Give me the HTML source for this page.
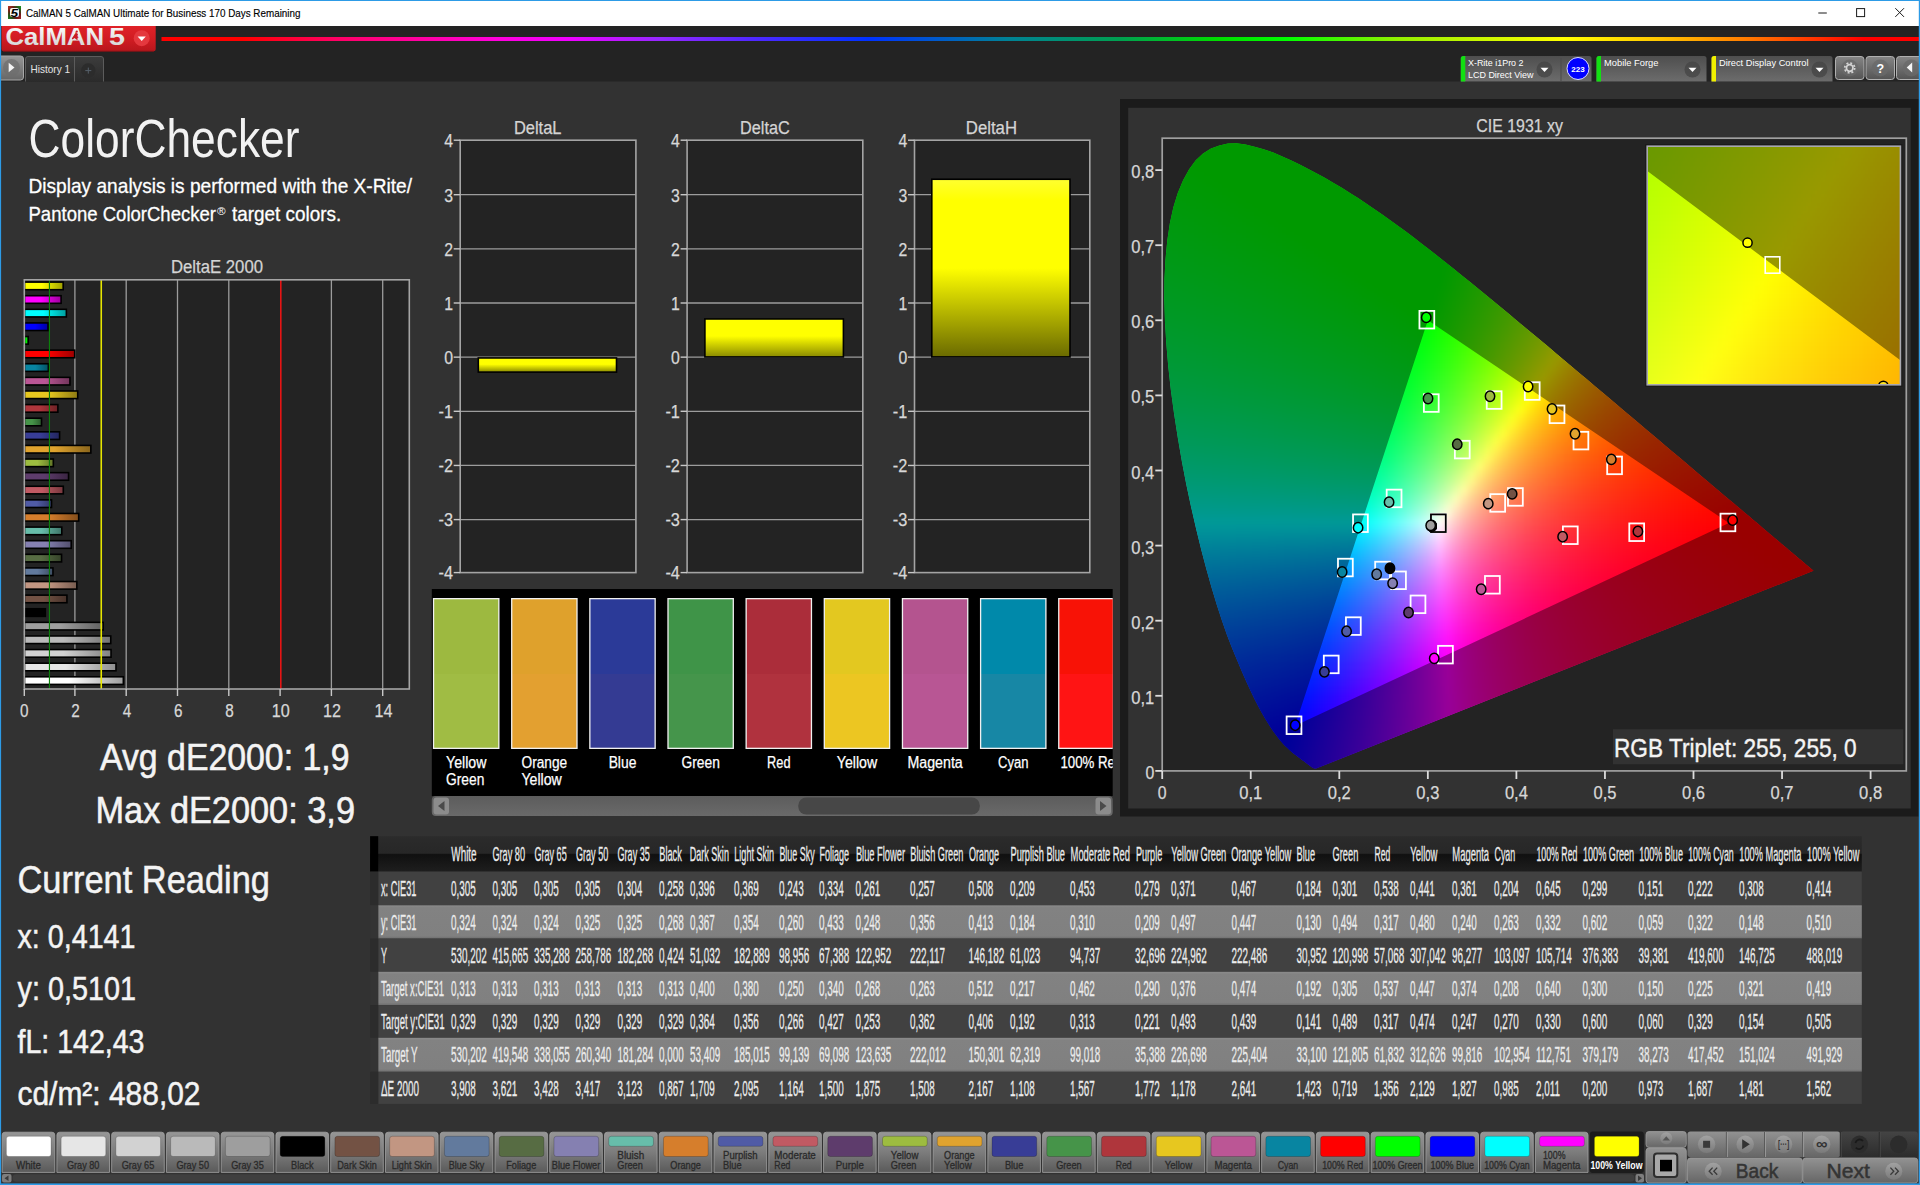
<!DOCTYPE html>
<html lang="en"><head><meta charset="utf-8"><title>CalMAN 5 CalMAN Ultimate for Business</title>
<style>
html,body{margin:0;padding:0;background:#323232}
body{width:1920px;height:1185px;overflow:hidden}
svg{display:block;font-family:"Liberation Sans",sans-serif}
text{white-space:pre}
.cc rect{width:8px;height:8px}
.ci rect{width:12px;height:12px}
</style></head><body>
<svg width="1920" height="1185" viewBox="0 0 1920 1185">
<g id="sec_header">
<defs>
<linearGradient id="rb" x1="0" x2="1" y1="0" y2="0">
<stop offset="0" stop-color="#ff0000"/><stop offset="0.046" stop-color="#ff0000"/><stop offset="0.099" stop-color="#ff0064"/><stop offset="0.191" stop-color="#ff00dc"/><stop offset="0.231" stop-color="#f000ff"/><stop offset="0.283" stop-color="#9628ff"/><stop offset="0.336" stop-color="#5028ff"/><stop offset="0.402" stop-color="#0032ff"/><stop offset="0.481" stop-color="#008296"/><stop offset="0.545" stop-color="#00a050"/><stop offset="0.6" stop-color="#00dc00"/><stop offset="0.64" stop-color="#00ff00"/><stop offset="0.705" stop-color="#96f000"/><stop offset="0.797" stop-color="#ffff00"/><stop offset="0.85" stop-color="#ffc800"/><stop offset="0.903" stop-color="#ff7800"/><stop offset="0.968" stop-color="#ff0000"/><stop offset="1" stop-color="#ff0000"/>
</linearGradient>
<linearGradient id="logo" x1="0" x2="0" y1="0" y2="1"><stop offset="0" stop-color="#e02228"/><stop offset="0.55" stop-color="#cf1c22"/><stop offset="1" stop-color="#b8161c"/></linearGradient>
<linearGradient id="logot" x1="0" x2="0" y1="0" y2="1"><stop offset="0" stop-color="#ffffff"/><stop offset="1" stop-color="#d0d0d0"/></linearGradient>
<linearGradient id="btn" x1="0" x2="0" y1="0" y2="1"><stop offset="0" stop-color="#858585"/><stop offset="1" stop-color="#545454"/></linearGradient>
<linearGradient id="btn2" x1="0" x2="0" y1="0" y2="1"><stop offset="0" stop-color="#969696"/><stop offset="1" stop-color="#666666"/></linearGradient>
<linearGradient id="tab" x1="0" x2="0" y1="0" y2="1"><stop offset="0" stop-color="#3c3c3c"/><stop offset="1" stop-color="#2b2b2b"/></linearGradient>
<linearGradient id="pnl" x1="0" x2="0" y1="0" y2="1"><stop offset="0" stop-color="#4e4e4e"/><stop offset="1" stop-color="#6c6c6c"/></linearGradient>
<radialGradient id="ddc"><stop offset="0" stop-color="#5a5a5a"/><stop offset="1" stop-color="#4a4a4a"/></radialGradient>
</defs>
<rect x="0" y="0" width="1920" height="1185" fill="#323232"/>
<rect x="0" y="26" width="1920" height="55.5" fill="#232323"/>
<rect x="0" y="0" width="1920" height="26" fill="#ffffff"/>
<defs><linearGradient id="icg" x1="0" x2="1" y1="0" y2="1"><stop offset="0" stop-color="#c03020"/><stop offset="0.5" stop-color="#101010"/><stop offset="1" stop-color="#b02020"/></linearGradient><linearGradient id="icg2" x1="1" x2="0" y1="0" y2="1"><stop offset="0" stop-color="#20a020"/><stop offset="0.35" stop-color="#20a020" stop-opacity="0"/><stop offset="0.65" stop-color="#20a020" stop-opacity="0"/><stop offset="1" stop-color="#208020"/></linearGradient></defs>
<rect x="8" y="6" width="13" height="13" fill="url(#icg)"/><rect x="8" y="6" width="13" height="13" fill="url(#icg2)"/>
<rect x="10" y="8" width="9" height="9" fill="#f4f4f4" rx="2"/>
<text x="10.6" y="17.2" font-size="11.5" fill="#000" font-weight="bold" textLength="7.6" lengthAdjust="spacingAndGlyphs" font-style="italic">5</text>
<text x="26" y="16.8" font-size="11.3" fill="#000" textLength="274.5" lengthAdjust="spacingAndGlyphs" stroke="#000" stroke-width="0.15">CalMAN 5 CalMAN Ultimate for Business 170 Days Remaining</text>
<line x1="1818.3" y1="13" x2="1826.8" y2="13" stroke="#1a1a1a" stroke-width="1"/>
<rect x="1856.6" y="8.6" width="8" height="8" fill="none" stroke="#1a1a1a" stroke-width="1"/>
<path d="M1895.3 8.2 L1904 16.9 M1904 8.2 L1895.3 16.9" stroke="#1a1a1a" stroke-width="1" fill="none"/>
<path d="M1.5 26 H155.7 V48.8 Q155.7 51.3 153.2 51.3 H4 Q1.5 51.3 1.5 48.8 Z" fill="url(#logo)"/>
<line x1="3" y1="51.3" x2="154" y2="51.3" stroke="#7a1418" stroke-width="1"/>
<text x="5.4" y="45" font-size="23.4" fill="url(#logot)" font-weight="bold" textLength="98.6" lengthAdjust="spacingAndGlyphs">CalMAN</text>
<text x="109" y="45" font-size="24.5" fill="url(#logot)" font-weight="bold" textLength="16" lengthAdjust="spacingAndGlyphs">5</text>
<path d="M74.5 34.5 l2.5 -1.5 l1 1.5 l-2 2.5 l2 2 l-1 1 l-2.5 -2 l-2 1.5 l-.7 -1 z" fill="#c81c22"/><circle cx="76.8" cy="31.6" r="1.1" fill="#c81c22"/>
<circle cx="141.7" cy="38.2" r="8" fill="#e4383e"/>
<path d="M137.6 36.5 h8.2 l-4.1 4.6 z" fill="#fff"/>
<rect x="161.5" y="37" width="1758.5" height="4" fill="url(#rb)"/>
<rect x="-3" y="56" width="26.5" height="24" rx="3" fill="url(#btn2)" stroke="#a8a8a8" stroke-width="1"/>
<circle cx="11.5" cy="67.5" r="8.5" fill="#6e6e6e" opacity=".7"/>
<path d="M8.7 62.7 v9.6 l5.8 -4.8 z" fill="#f4f4f4"/>
<path d="M25.5 81.5 V59 Q25.5 56.5 28 56.5 H101 Q103.5 56.5 103.5 59 V81.5" fill="url(#tab)" stroke="#5c5c5c" stroke-width="1"/>
<line x1="74.5" y1="57" x2="74.5" y2="81.5" stroke="#5c5c5c" stroke-width="1"/>
<text x="30.5" y="72.6" font-size="10.2" fill="#e4e4e4" textLength="39.5" lengthAdjust="spacingAndGlyphs">History 1</text>
<circle cx="88.3" cy="70.5" r="7.2" fill="#2c2c2c"/>
<path d="M85.3 70.6 h6 M88.3 67.6 v6" stroke="#56606a" stroke-width="1" fill="none"/>
<path d="M1460.8 81.5 V58.5 Q1460.8 56 1463.3 56 H1589 Q1591.5 56 1591.5 58.5 V81.5 Z" fill="url(#pnl)"/><path d="M1460.8 81.5 V58.5 Q1460.8 56 1463.3 56 H1465.3 V81.5 Z" fill="#12e012"/>
<text x="1468" y="66.3" font-size="9.8" fill="#fff" textLength="55.5" lengthAdjust="spacingAndGlyphs">X-Rite i1Pro 2</text>
<text x="1468" y="78" font-size="9.8" fill="#fff" textLength="65.5" lengthAdjust="spacingAndGlyphs">LCD Direct View</text>
<circle cx="1544.5" cy="69.5" r="8" fill="#444" fill-opacity=".75"/><path d="M1540.5 67.7 h8 l-4 4.4 z" fill="#fff"/>
<line x1="1561" y1="58" x2="1561" y2="81" stroke="#4a4a4a" stroke-width="1"/>
<circle cx="1578" cy="68.5" r="11" fill="#0000ff" stroke="#dcdcff" stroke-width="1"/>
<text x="1578" y="71.5" font-size="8" fill="#fff" text-anchor="middle" font-weight="bold" textLength="13.5" lengthAdjust="spacingAndGlyphs">223</text>
<path d="M1596.5 81.5 V58.5 Q1596.5 56 1599 56 H1704 Q1706.5 56 1706.5 58.5 V81.5 Z" fill="url(#pnl)"/><path d="M1596.5 81.5 V58.5 Q1596.5 56 1599 56 H1601 V81.5 Z" fill="#12e012"/>
<text x="1604" y="66.3" font-size="9.8" fill="#fff" textLength="54.5" lengthAdjust="spacingAndGlyphs">Mobile Forge</text>
<circle cx="1692.5" cy="69.5" r="8" fill="#444" fill-opacity=".75"/><path d="M1688.5 67.7 h8 l-4 4.4 z" fill="#fff"/>
<path d="M1711.5 81.5 V58.5 Q1711.5 56 1714 56 H1830 Q1832.5 56 1832.5 58.5 V81.5 Z" fill="url(#pnl)"/><path d="M1711.5 81.5 V58.5 Q1711.5 56 1714 56 H1716 V81.5 Z" fill="#f0f000"/>
<text x="1719" y="66.3" font-size="9.8" fill="#fff" textLength="89.5" lengthAdjust="spacingAndGlyphs">Direct Display Control</text>
<circle cx="1819.5" cy="69.5" r="8" fill="#444" fill-opacity=".75"/><path d="M1815.5 67.7 h8 l-4 4.4 z" fill="#fff"/>
<rect x="1835.5" y="56.5" width="28.5" height="23" rx="3" fill="url(#btn)" stroke="#b0b0b0" stroke-width="1"/><circle cx="1849.75" cy="68" r="8.5" fill="#6a6a6a" opacity=".75"/>
<circle cx="1849.7" cy="68" r="3.3" fill="none" stroke="#d4d4d4" stroke-width="1.7"/><circle cx="1849.7" cy="68" r="5" fill="none" stroke="#d4d4d4" stroke-width="1.7" stroke-dasharray="1.96 1.96"/>
<rect x="1866" y="56.5" width="28.5" height="23" rx="3" fill="url(#btn)" stroke="#b0b0b0" stroke-width="1"/><circle cx="1880.25" cy="68" r="8.5" fill="#6a6a6a" opacity=".75"/>
<text x="1880.2" y="72.6" font-size="12.5" fill="#fff" text-anchor="middle" font-weight="bold">?</text>
<rect x="1896.5" y="56.5" width="29.5" height="23" rx="3" fill="url(#btn)" stroke="#b0b0b0" stroke-width="1"/><circle cx="1911.25" cy="68" r="8.5" fill="#6a6a6a" opacity=".75"/>
<path d="M1912.2 62.5 v10 l-5.5 -5 z" fill="#f4f4f4"/>
</g>
<g id="sec_left">
<text x="28.5" y="157" font-size="53" fill="#f2f2f2" textLength="271" lengthAdjust="spacingAndGlyphs">ColorChecker</text>
<text x="28.5" y="193" font-size="21" fill="#fff" textLength="383.5" lengthAdjust="spacingAndGlyphs" stroke="#fff" stroke-width="0.3">Display analysis is performed with the X-Rite/</text>
<text x="28.5" y="221" font-size="21" fill="#fff" textLength="187.5" lengthAdjust="spacingAndGlyphs" stroke="#fff" stroke-width="0.3">Pantone ColorChecker</text>
<text x="217" y="215" font-size="11.5" fill="#fff" textLength="8.6" lengthAdjust="spacingAndGlyphs">®</text>
<text x="232" y="221" font-size="21" fill="#fff" textLength="109.3" lengthAdjust="spacingAndGlyphs" stroke="#fff" stroke-width="0.3">target colors.</text>
<text x="171" y="273" font-size="18" fill="#d4d4d4" textLength="92" lengthAdjust="spacingAndGlyphs" stroke="#d4d4d4" stroke-width="0.25">DeltaE 2000</text>
<rect x="24.3" y="279.8" width="385" height="409.2" fill="#232323"/>
<line x1="74.9" y1="279.8" x2="74.9" y2="689" stroke="#9c9c9c" stroke-width="1.3"/>
<line x1="126.2" y1="279.8" x2="126.2" y2="689" stroke="#9c9c9c" stroke-width="1.3"/>
<line x1="177.5" y1="279.8" x2="177.5" y2="689" stroke="#9c9c9c" stroke-width="1.3"/>
<line x1="228.8" y1="279.8" x2="228.8" y2="689" stroke="#9c9c9c" stroke-width="1.3"/>
<line x1="331.4" y1="279.8" x2="331.4" y2="689" stroke="#9c9c9c" stroke-width="1.3"/>
<line x1="382.7" y1="279.8" x2="382.7" y2="689" stroke="#9c9c9c" stroke-width="1.3"/>
<defs><linearGradient id="b0"><stop offset="0" stop-color="#ffffff"/><stop offset="0.45" stop-color="#ffffff"/><stop offset="1" stop-color="#9e9e9e"/></linearGradient><linearGradient id="b1"><stop offset="0" stop-color="#e6e6e6"/><stop offset="0.45" stop-color="#e6e6e6"/><stop offset="1" stop-color="#8e8e8e"/></linearGradient><linearGradient id="b2"><stop offset="0" stop-color="#d2d2d2"/><stop offset="0.45" stop-color="#d2d2d2"/><stop offset="1" stop-color="#828282"/></linearGradient><linearGradient id="b3"><stop offset="0" stop-color="#bababa"/><stop offset="0.45" stop-color="#bababa"/><stop offset="1" stop-color="#737373"/></linearGradient><linearGradient id="b4"><stop offset="0" stop-color="#9e9e9e"/><stop offset="0.45" stop-color="#9e9e9e"/><stop offset="1" stop-color="#616161"/></linearGradient><linearGradient id="b5"><stop offset="0" stop-color="#000000"/><stop offset="0.45" stop-color="#000000"/><stop offset="1" stop-color="#000000"/></linearGradient><linearGradient id="b6"><stop offset="0" stop-color="#735244"/><stop offset="0.45" stop-color="#735244"/><stop offset="1" stop-color="#47322a"/></linearGradient><linearGradient id="b7"><stop offset="0" stop-color="#c29682"/><stop offset="0.45" stop-color="#c29682"/><stop offset="1" stop-color="#785d50"/></linearGradient><linearGradient id="b8"><stop offset="0" stop-color="#627a9d"/><stop offset="0.45" stop-color="#627a9d"/><stop offset="1" stop-color="#3c4b61"/></linearGradient><linearGradient id="b9"><stop offset="0" stop-color="#576c43"/><stop offset="0.45" stop-color="#576c43"/><stop offset="1" stop-color="#354229"/></linearGradient><linearGradient id="b10"><stop offset="0" stop-color="#8580b1"/><stop offset="0.45" stop-color="#8580b1"/><stop offset="1" stop-color="#524f6d"/></linearGradient><linearGradient id="b11"><stop offset="0" stop-color="#67bdaa"/><stop offset="0.45" stop-color="#67bdaa"/><stop offset="1" stop-color="#3f7569"/></linearGradient><linearGradient id="b12"><stop offset="0" stop-color="#d67e2c"/><stop offset="0.45" stop-color="#d67e2c"/><stop offset="1" stop-color="#844e1b"/></linearGradient><linearGradient id="b13"><stop offset="0" stop-color="#505ba6"/><stop offset="0.45" stop-color="#505ba6"/><stop offset="1" stop-color="#313866"/></linearGradient><linearGradient id="b14"><stop offset="0" stop-color="#c15a63"/><stop offset="0.45" stop-color="#c15a63"/><stop offset="1" stop-color="#77373d"/></linearGradient><linearGradient id="b15"><stop offset="0" stop-color="#5e3c6c"/><stop offset="0.45" stop-color="#5e3c6c"/><stop offset="1" stop-color="#3a2542"/></linearGradient><linearGradient id="b16"><stop offset="0" stop-color="#9dbc40"/><stop offset="0.45" stop-color="#9dbc40"/><stop offset="1" stop-color="#617427"/></linearGradient><linearGradient id="b17"><stop offset="0" stop-color="#e0a32e"/><stop offset="0.45" stop-color="#e0a32e"/><stop offset="1" stop-color="#8a651c"/></linearGradient><linearGradient id="b18"><stop offset="0" stop-color="#383d96"/><stop offset="0.45" stop-color="#383d96"/><stop offset="1" stop-color="#22255d"/></linearGradient><linearGradient id="b19"><stop offset="0" stop-color="#469449"/><stop offset="0.45" stop-color="#469449"/><stop offset="1" stop-color="#2b5b2d"/></linearGradient><linearGradient id="b20"><stop offset="0" stop-color="#af363c"/><stop offset="0.45" stop-color="#af363c"/><stop offset="1" stop-color="#6c2125"/></linearGradient><linearGradient id="b21"><stop offset="0" stop-color="#e7c71f"/><stop offset="0.45" stop-color="#e7c71f"/><stop offset="1" stop-color="#8f7b13"/></linearGradient><linearGradient id="b22"><stop offset="0" stop-color="#bb5695"/><stop offset="0.45" stop-color="#bb5695"/><stop offset="1" stop-color="#73355c"/></linearGradient><linearGradient id="b23"><stop offset="0" stop-color="#0885a1"/><stop offset="0.45" stop-color="#0885a1"/><stop offset="1" stop-color="#045263"/></linearGradient><linearGradient id="b24"><stop offset="0" stop-color="#ff0000"/><stop offset="0.45" stop-color="#ff0000"/><stop offset="1" stop-color="#9e0000"/></linearGradient><linearGradient id="b25"><stop offset="0" stop-color="#00ff00"/><stop offset="0.45" stop-color="#00ff00"/><stop offset="1" stop-color="#009e00"/></linearGradient><linearGradient id="b26"><stop offset="0" stop-color="#0000ff"/><stop offset="0.45" stop-color="#0000ff"/><stop offset="1" stop-color="#00009e"/></linearGradient><linearGradient id="b27"><stop offset="0" stop-color="#00ffff"/><stop offset="0.45" stop-color="#00ffff"/><stop offset="1" stop-color="#009e9e"/></linearGradient><linearGradient id="b28"><stop offset="0" stop-color="#ff00ff"/><stop offset="0.45" stop-color="#ff00ff"/><stop offset="1" stop-color="#9e009e"/></linearGradient><linearGradient id="b29"><stop offset="0" stop-color="#ffff00"/><stop offset="0.45" stop-color="#ffff00"/><stop offset="1" stop-color="#9e9e00"/></linearGradient></defs>
<rect x="24.5" y="676.8" width="98.84" height="7.6" fill="url(#b0)" stroke="#000" stroke-width="1.6"/>
<rect x="24.5" y="663.19" width="91.48" height="7.6" fill="url(#b1)" stroke="#000" stroke-width="1.6"/>
<rect x="24.5" y="649.58" width="86.53" height="7.6" fill="url(#b2)" stroke="#000" stroke-width="1.6"/>
<rect x="24.5" y="635.97" width="86.25" height="7.6" fill="url(#b3)" stroke="#000" stroke-width="1.6"/>
<rect x="24.5" y="622.36" width="78.7" height="7.6" fill="url(#b4)" stroke="#000" stroke-width="1.6"/>
<rect x="24.5" y="608.75" width="20.84" height="7.6" fill="url(#b5)" stroke="#000" stroke-width="1.6"/>
<rect x="24.5" y="595.14" width="42.44" height="7.6" fill="url(#b6)" stroke="#000" stroke-width="1.6"/>
<rect x="24.5" y="581.53" width="52.34" height="7.6" fill="url(#b7)" stroke="#000" stroke-width="1.6"/>
<rect x="24.5" y="567.92" width="28.46" height="7.6" fill="url(#b8)" stroke="#000" stroke-width="1.6"/>
<rect x="24.5" y="554.31" width="37.07" height="7.6" fill="url(#b9)" stroke="#000" stroke-width="1.6"/>
<rect x="24.5" y="540.7" width="46.69" height="7.6" fill="url(#b10)" stroke="#000" stroke-width="1.6"/>
<rect x="24.5" y="527.09" width="37.28" height="7.6" fill="url(#b11)" stroke="#000" stroke-width="1.6"/>
<rect x="24.5" y="513.48" width="54.18" height="7.6" fill="url(#b12)" stroke="#000" stroke-width="1.6"/>
<rect x="24.5" y="499.87" width="27.02" height="7.6" fill="url(#b13)" stroke="#000" stroke-width="1.6"/>
<rect x="24.5" y="486.26" width="38.79" height="7.6" fill="url(#b14)" stroke="#000" stroke-width="1.6"/>
<rect x="24.5" y="472.64" width="44.05" height="7.6" fill="url(#b15)" stroke="#000" stroke-width="1.6"/>
<rect x="24.5" y="459.03" width="28.82" height="7.6" fill="url(#b16)" stroke="#000" stroke-width="1.6"/>
<rect x="24.5" y="445.42" width="66.34" height="7.6" fill="url(#b17)" stroke="#000" stroke-width="1.6"/>
<rect x="24.5" y="431.81" width="35.1" height="7.6" fill="url(#b18)" stroke="#000" stroke-width="1.6"/>
<rect x="24.5" y="418.2" width="17.04" height="7.6" fill="url(#b19)" stroke="#000" stroke-width="1.6"/>
<rect x="24.5" y="404.59" width="33.38" height="7.6" fill="url(#b20)" stroke="#000" stroke-width="1.6"/>
<rect x="24.5" y="390.98" width="53.21" height="7.6" fill="url(#b21)" stroke="#000" stroke-width="1.6"/>
<rect x="24.5" y="377.37" width="45.46" height="7.6" fill="url(#b22)" stroke="#000" stroke-width="1.6"/>
<rect x="24.5" y="363.76" width="23.87" height="7.6" fill="url(#b23)" stroke="#000" stroke-width="1.6"/>
<rect x="24.5" y="350.15" width="50.18" height="7.6" fill="url(#b24)" stroke="#000" stroke-width="1.6"/>
<rect x="24.5" y="336.54" width="3.73" height="7.6" fill="url(#b25)" stroke="#000" stroke-width="1.6"/>
<rect x="24.5" y="322.93" width="23.56" height="7.6" fill="url(#b26)" stroke="#000" stroke-width="1.6"/>
<rect x="24.5" y="309.32" width="41.87" height="7.6" fill="url(#b27)" stroke="#000" stroke-width="1.6"/>
<rect x="24.5" y="295.71" width="36.59" height="7.6" fill="url(#b28)" stroke="#000" stroke-width="1.6"/>
<rect x="24.5" y="282.1" width="38.67" height="7.6" fill="url(#b29)" stroke="#000" stroke-width="1.6"/>
<line x1="49.45" y1="279.8" x2="49.45" y2="689" stroke="#0b800b" stroke-width="1.15"/>
<line x1="101.25" y1="279.8" x2="101.25" y2="689" stroke="#e6e600" stroke-width="1.6"/>
<line x1="280.8" y1="279.8" x2="280.8" y2="689" stroke="#e61414" stroke-width="1.6"/>
<rect x="24.3" y="279.8" width="385" height="409.2" fill="none" stroke="#a4a4a4" stroke-width="1.6"/>
<line x1="24.3" y1="689" x2="24.3" y2="696" stroke="#c8c8c8" stroke-width="1.4"/>
<text x="24.3" y="717" font-size="18" fill="#d8d8d8" text-anchor="middle" textLength="8.5" lengthAdjust="spacingAndGlyphs" stroke="#d8d8d8" stroke-width="0.25">0</text>
<line x1="74.9" y1="689" x2="74.9" y2="696" stroke="#c8c8c8" stroke-width="1.4"/>
<text x="75.6" y="717" font-size="18" fill="#d8d8d8" text-anchor="middle" textLength="8.5" lengthAdjust="spacingAndGlyphs" stroke="#d8d8d8" stroke-width="0.25">2</text>
<line x1="126.2" y1="689" x2="126.2" y2="696" stroke="#c8c8c8" stroke-width="1.4"/>
<text x="126.9" y="717" font-size="18" fill="#d8d8d8" text-anchor="middle" textLength="8.5" lengthAdjust="spacingAndGlyphs" stroke="#d8d8d8" stroke-width="0.25">4</text>
<line x1="177.5" y1="689" x2="177.5" y2="696" stroke="#c8c8c8" stroke-width="1.4"/>
<text x="178.2" y="717" font-size="18" fill="#d8d8d8" text-anchor="middle" textLength="8.5" lengthAdjust="spacingAndGlyphs" stroke="#d8d8d8" stroke-width="0.25">6</text>
<line x1="228.8" y1="689" x2="228.8" y2="696" stroke="#c8c8c8" stroke-width="1.4"/>
<text x="229.5" y="717" font-size="18" fill="#d8d8d8" text-anchor="middle" textLength="8.5" lengthAdjust="spacingAndGlyphs" stroke="#d8d8d8" stroke-width="0.25">8</text>
<line x1="280.1" y1="689" x2="280.1" y2="696" stroke="#c8c8c8" stroke-width="1.4"/>
<text x="280.8" y="717" font-size="18" fill="#d8d8d8" text-anchor="middle" textLength="18" lengthAdjust="spacingAndGlyphs" stroke="#d8d8d8" stroke-width="0.25">10</text>
<line x1="331.4" y1="689" x2="331.4" y2="696" stroke="#c8c8c8" stroke-width="1.4"/>
<text x="332.1" y="717" font-size="18" fill="#d8d8d8" text-anchor="middle" textLength="18" lengthAdjust="spacingAndGlyphs" stroke="#d8d8d8" stroke-width="0.25">12</text>
<line x1="382.7" y1="689" x2="382.7" y2="696" stroke="#c8c8c8" stroke-width="1.4"/>
<text x="383.4" y="717" font-size="18" fill="#d8d8d8" text-anchor="middle" textLength="18" lengthAdjust="spacingAndGlyphs" stroke="#d8d8d8" stroke-width="0.25">14</text>
<text x="100" y="770.4" font-size="36.5" fill="#f4f4f4" textLength="249.5" lengthAdjust="spacingAndGlyphs" stroke="#f4f4f4" stroke-width="0.55">Avg dE2000: 1,9</text>
<text x="95.5" y="822.5" font-size="36.5" fill="#f4f4f4" textLength="259.5" lengthAdjust="spacingAndGlyphs" stroke="#f4f4f4" stroke-width="0.55">Max dE2000: 3,9</text>
<text x="17.5" y="893.3" font-size="39" fill="#f4f4f4" textLength="252.5" lengthAdjust="spacingAndGlyphs" stroke="#f4f4f4" stroke-width="0.5">Current Reading</text>
<text x="17.5" y="947.5" font-size="32.5" fill="#f4f4f4" textLength="118" lengthAdjust="spacingAndGlyphs" stroke="#f4f4f4" stroke-width="0.5">x: 0,4141</text>
<text x="17.5" y="1000" font-size="32.5" fill="#f4f4f4" textLength="118.5" lengthAdjust="spacingAndGlyphs" stroke="#f4f4f4" stroke-width="0.5">y: 0,5101</text>
<text x="17.5" y="1052.5" font-size="32.5" fill="#f4f4f4" textLength="127" lengthAdjust="spacingAndGlyphs" stroke="#f4f4f4" stroke-width="0.5">fL: 142,43</text>
<text x="17.5" y="1105" font-size="32.5" fill="#f4f4f4" textLength="183" lengthAdjust="spacingAndGlyphs" stroke="#f4f4f4" stroke-width="0.5">cd/m²: 488,02</text>
</g>
<g id="sec_delta">
<defs><linearGradient id="dy1" x1="0" x2="0" y1="0" y2="1"><stop offset="0" stop-color="#ffff30"/><stop offset="0.12" stop-color="#ffff00"/><stop offset="0.5" stop-color="#ffff00"/><stop offset="1" stop-color="#6a6a00"/></linearGradient><linearGradient id="dy2" x1="0" x2="0" y1="0" y2="1"><stop offset="0" stop-color="#ffff00"/><stop offset="0.45" stop-color="#ffff00"/><stop offset="1" stop-color="#8a8a00"/></linearGradient></defs>
<rect x="460.2" y="140.2" width="175.7" height="432.4" fill="#232323"/>
<line x1="460.2" y1="519.6" x2="635.9" y2="519.6" stroke="#9c9c9c" stroke-width="1.3"/>
<line x1="460.2" y1="465.45" x2="635.9" y2="465.45" stroke="#9c9c9c" stroke-width="1.3"/>
<line x1="460.2" y1="411.3" x2="635.9" y2="411.3" stroke="#9c9c9c" stroke-width="1.3"/>
<line x1="460.2" y1="357.15" x2="635.9" y2="357.15" stroke="#9c9c9c" stroke-width="1.3"/>
<line x1="460.2" y1="303" x2="635.9" y2="303" stroke="#9c9c9c" stroke-width="1.3"/>
<line x1="460.2" y1="248.85" x2="635.9" y2="248.85" stroke="#9c9c9c" stroke-width="1.3"/>
<line x1="460.2" y1="194.7" x2="635.9" y2="194.7" stroke="#9c9c9c" stroke-width="1.3"/>
<rect x="460.2" y="140.2" width="175.7" height="432.4" fill="none" stroke="#a4a4a4" stroke-width="1.6"/>
<line x1="453.7" y1="572.6" x2="460.2" y2="572.6" stroke="#c8c8c8" stroke-width="1.4"/>
<text x="453" y="579.4" font-size="18.3" fill="#d8d8d8" text-anchor="end" textLength="14.5" lengthAdjust="spacingAndGlyphs" stroke="#d8d8d8" stroke-width="0.25">-4</text>
<line x1="453.7" y1="519.6" x2="460.2" y2="519.6" stroke="#c8c8c8" stroke-width="1.4"/>
<text x="453" y="526.4" font-size="18.3" fill="#d8d8d8" text-anchor="end" textLength="14.5" lengthAdjust="spacingAndGlyphs" stroke="#d8d8d8" stroke-width="0.25">-3</text>
<line x1="453.7" y1="465.45" x2="460.2" y2="465.45" stroke="#c8c8c8" stroke-width="1.4"/>
<text x="453" y="472.25" font-size="18.3" fill="#d8d8d8" text-anchor="end" textLength="14.5" lengthAdjust="spacingAndGlyphs" stroke="#d8d8d8" stroke-width="0.25">-2</text>
<line x1="453.7" y1="411.3" x2="460.2" y2="411.3" stroke="#c8c8c8" stroke-width="1.4"/>
<text x="453" y="418.1" font-size="18.3" fill="#d8d8d8" text-anchor="end" textLength="14.5" lengthAdjust="spacingAndGlyphs" stroke="#d8d8d8" stroke-width="0.25">-1</text>
<line x1="453.7" y1="357.15" x2="460.2" y2="357.15" stroke="#c8c8c8" stroke-width="1.4"/>
<text x="453" y="363.95" font-size="18.3" fill="#d8d8d8" text-anchor="end" textLength="8.8" lengthAdjust="spacingAndGlyphs" stroke="#d8d8d8" stroke-width="0.25">0</text>
<line x1="453.7" y1="303" x2="460.2" y2="303" stroke="#c8c8c8" stroke-width="1.4"/>
<text x="453" y="309.8" font-size="18.3" fill="#d8d8d8" text-anchor="end" textLength="8.8" lengthAdjust="spacingAndGlyphs" stroke="#d8d8d8" stroke-width="0.25">1</text>
<line x1="453.7" y1="248.85" x2="460.2" y2="248.85" stroke="#c8c8c8" stroke-width="1.4"/>
<text x="453" y="255.65" font-size="18.3" fill="#d8d8d8" text-anchor="end" textLength="8.8" lengthAdjust="spacingAndGlyphs" stroke="#d8d8d8" stroke-width="0.25">2</text>
<line x1="453.7" y1="194.7" x2="460.2" y2="194.7" stroke="#c8c8c8" stroke-width="1.4"/>
<text x="453" y="201.5" font-size="18.3" fill="#d8d8d8" text-anchor="end" textLength="8.8" lengthAdjust="spacingAndGlyphs" stroke="#d8d8d8" stroke-width="0.25">3</text>
<line x1="453.7" y1="140.2" x2="460.2" y2="140.2" stroke="#c8c8c8" stroke-width="1.4"/>
<text x="453" y="147" font-size="18.3" fill="#d8d8d8" text-anchor="end" textLength="8.8" lengthAdjust="spacingAndGlyphs" stroke="#d8d8d8" stroke-width="0.25">4</text>
<text x="513.9" y="134.3" font-size="18" fill="#d4d4d4" textLength="47.6" lengthAdjust="spacingAndGlyphs" stroke="#d4d4d4" stroke-width="0.25">DeltaL</text>
<rect x="478.3" y="357.95" width="138.2" height="14.16" fill="url(#dy2)" stroke="#000" stroke-width="1.6"/>
<rect x="687.1" y="140.2" width="175.7" height="432.4" fill="#232323"/>
<line x1="687.1" y1="519.6" x2="862.8" y2="519.6" stroke="#9c9c9c" stroke-width="1.3"/>
<line x1="687.1" y1="465.45" x2="862.8" y2="465.45" stroke="#9c9c9c" stroke-width="1.3"/>
<line x1="687.1" y1="411.3" x2="862.8" y2="411.3" stroke="#9c9c9c" stroke-width="1.3"/>
<line x1="687.1" y1="357.15" x2="862.8" y2="357.15" stroke="#9c9c9c" stroke-width="1.3"/>
<line x1="687.1" y1="303" x2="862.8" y2="303" stroke="#9c9c9c" stroke-width="1.3"/>
<line x1="687.1" y1="248.85" x2="862.8" y2="248.85" stroke="#9c9c9c" stroke-width="1.3"/>
<line x1="687.1" y1="194.7" x2="862.8" y2="194.7" stroke="#9c9c9c" stroke-width="1.3"/>
<rect x="687.1" y="140.2" width="175.7" height="432.4" fill="none" stroke="#a4a4a4" stroke-width="1.6"/>
<line x1="680.6" y1="572.6" x2="687.1" y2="572.6" stroke="#c8c8c8" stroke-width="1.4"/>
<text x="679.9" y="579.4" font-size="18.3" fill="#d8d8d8" text-anchor="end" textLength="14.5" lengthAdjust="spacingAndGlyphs" stroke="#d8d8d8" stroke-width="0.25">-4</text>
<line x1="680.6" y1="519.6" x2="687.1" y2="519.6" stroke="#c8c8c8" stroke-width="1.4"/>
<text x="679.9" y="526.4" font-size="18.3" fill="#d8d8d8" text-anchor="end" textLength="14.5" lengthAdjust="spacingAndGlyphs" stroke="#d8d8d8" stroke-width="0.25">-3</text>
<line x1="680.6" y1="465.45" x2="687.1" y2="465.45" stroke="#c8c8c8" stroke-width="1.4"/>
<text x="679.9" y="472.25" font-size="18.3" fill="#d8d8d8" text-anchor="end" textLength="14.5" lengthAdjust="spacingAndGlyphs" stroke="#d8d8d8" stroke-width="0.25">-2</text>
<line x1="680.6" y1="411.3" x2="687.1" y2="411.3" stroke="#c8c8c8" stroke-width="1.4"/>
<text x="679.9" y="418.1" font-size="18.3" fill="#d8d8d8" text-anchor="end" textLength="14.5" lengthAdjust="spacingAndGlyphs" stroke="#d8d8d8" stroke-width="0.25">-1</text>
<line x1="680.6" y1="357.15" x2="687.1" y2="357.15" stroke="#c8c8c8" stroke-width="1.4"/>
<text x="679.9" y="363.95" font-size="18.3" fill="#d8d8d8" text-anchor="end" textLength="8.8" lengthAdjust="spacingAndGlyphs" stroke="#d8d8d8" stroke-width="0.25">0</text>
<line x1="680.6" y1="303" x2="687.1" y2="303" stroke="#c8c8c8" stroke-width="1.4"/>
<text x="679.9" y="309.8" font-size="18.3" fill="#d8d8d8" text-anchor="end" textLength="8.8" lengthAdjust="spacingAndGlyphs" stroke="#d8d8d8" stroke-width="0.25">1</text>
<line x1="680.6" y1="248.85" x2="687.1" y2="248.85" stroke="#c8c8c8" stroke-width="1.4"/>
<text x="679.9" y="255.65" font-size="18.3" fill="#d8d8d8" text-anchor="end" textLength="8.8" lengthAdjust="spacingAndGlyphs" stroke="#d8d8d8" stroke-width="0.25">2</text>
<line x1="680.6" y1="194.7" x2="687.1" y2="194.7" stroke="#c8c8c8" stroke-width="1.4"/>
<text x="679.9" y="201.5" font-size="18.3" fill="#d8d8d8" text-anchor="end" textLength="8.8" lengthAdjust="spacingAndGlyphs" stroke="#d8d8d8" stroke-width="0.25">3</text>
<line x1="680.6" y1="140.2" x2="687.1" y2="140.2" stroke="#c8c8c8" stroke-width="1.4"/>
<text x="679.9" y="147" font-size="18.3" fill="#d8d8d8" text-anchor="end" textLength="8.8" lengthAdjust="spacingAndGlyphs" stroke="#d8d8d8" stroke-width="0.25">4</text>
<text x="740" y="134.3" font-size="18" fill="#d4d4d4" textLength="49.7" lengthAdjust="spacingAndGlyphs" stroke="#d4d4d4" stroke-width="0.25">DeltaC</text>
<rect x="704.9" y="318.96" width="138.5" height="37.99" fill="url(#dy2)" stroke="#000" stroke-width="1.6"/>
<rect x="914.5" y="140.2" width="175.3" height="432.4" fill="#232323"/>
<line x1="914.5" y1="519.6" x2="1089.8" y2="519.6" stroke="#9c9c9c" stroke-width="1.3"/>
<line x1="914.5" y1="465.45" x2="1089.8" y2="465.45" stroke="#9c9c9c" stroke-width="1.3"/>
<line x1="914.5" y1="411.3" x2="1089.8" y2="411.3" stroke="#9c9c9c" stroke-width="1.3"/>
<line x1="914.5" y1="357.15" x2="1089.8" y2="357.15" stroke="#9c9c9c" stroke-width="1.3"/>
<line x1="914.5" y1="303" x2="1089.8" y2="303" stroke="#9c9c9c" stroke-width="1.3"/>
<line x1="914.5" y1="248.85" x2="1089.8" y2="248.85" stroke="#9c9c9c" stroke-width="1.3"/>
<line x1="914.5" y1="194.7" x2="1089.8" y2="194.7" stroke="#9c9c9c" stroke-width="1.3"/>
<rect x="914.5" y="140.2" width="175.3" height="432.4" fill="none" stroke="#a4a4a4" stroke-width="1.6"/>
<line x1="908" y1="572.6" x2="914.5" y2="572.6" stroke="#c8c8c8" stroke-width="1.4"/>
<text x="907.3" y="579.4" font-size="18.3" fill="#d8d8d8" text-anchor="end" textLength="14.5" lengthAdjust="spacingAndGlyphs" stroke="#d8d8d8" stroke-width="0.25">-4</text>
<line x1="908" y1="519.6" x2="914.5" y2="519.6" stroke="#c8c8c8" stroke-width="1.4"/>
<text x="907.3" y="526.4" font-size="18.3" fill="#d8d8d8" text-anchor="end" textLength="14.5" lengthAdjust="spacingAndGlyphs" stroke="#d8d8d8" stroke-width="0.25">-3</text>
<line x1="908" y1="465.45" x2="914.5" y2="465.45" stroke="#c8c8c8" stroke-width="1.4"/>
<text x="907.3" y="472.25" font-size="18.3" fill="#d8d8d8" text-anchor="end" textLength="14.5" lengthAdjust="spacingAndGlyphs" stroke="#d8d8d8" stroke-width="0.25">-2</text>
<line x1="908" y1="411.3" x2="914.5" y2="411.3" stroke="#c8c8c8" stroke-width="1.4"/>
<text x="907.3" y="418.1" font-size="18.3" fill="#d8d8d8" text-anchor="end" textLength="14.5" lengthAdjust="spacingAndGlyphs" stroke="#d8d8d8" stroke-width="0.25">-1</text>
<line x1="908" y1="357.15" x2="914.5" y2="357.15" stroke="#c8c8c8" stroke-width="1.4"/>
<text x="907.3" y="363.95" font-size="18.3" fill="#d8d8d8" text-anchor="end" textLength="8.8" lengthAdjust="spacingAndGlyphs" stroke="#d8d8d8" stroke-width="0.25">0</text>
<line x1="908" y1="303" x2="914.5" y2="303" stroke="#c8c8c8" stroke-width="1.4"/>
<text x="907.3" y="309.8" font-size="18.3" fill="#d8d8d8" text-anchor="end" textLength="8.8" lengthAdjust="spacingAndGlyphs" stroke="#d8d8d8" stroke-width="0.25">1</text>
<line x1="908" y1="248.85" x2="914.5" y2="248.85" stroke="#c8c8c8" stroke-width="1.4"/>
<text x="907.3" y="255.65" font-size="18.3" fill="#d8d8d8" text-anchor="end" textLength="8.8" lengthAdjust="spacingAndGlyphs" stroke="#d8d8d8" stroke-width="0.25">2</text>
<line x1="908" y1="194.7" x2="914.5" y2="194.7" stroke="#c8c8c8" stroke-width="1.4"/>
<text x="907.3" y="201.5" font-size="18.3" fill="#d8d8d8" text-anchor="end" textLength="8.8" lengthAdjust="spacingAndGlyphs" stroke="#d8d8d8" stroke-width="0.25">3</text>
<line x1="908" y1="140.2" x2="914.5" y2="140.2" stroke="#c8c8c8" stroke-width="1.4"/>
<text x="907.3" y="147" font-size="18.3" fill="#d8d8d8" text-anchor="end" textLength="8.8" lengthAdjust="spacingAndGlyphs" stroke="#d8d8d8" stroke-width="0.25">4</text>
<text x="965.8" y="134.3" font-size="18" fill="#d4d4d4" textLength="51.2" lengthAdjust="spacingAndGlyphs" stroke="#d4d4d4" stroke-width="0.25">DeltaH</text>
<rect x="931.8" y="179.25" width="138.2" height="177.69" fill="url(#dy1)" stroke="#000" stroke-width="1.6"/>
</g>
<g id="sec_swatch">
<defs><clipPath id="swc"><rect x="431.8" y="589" width="680.9" height="207"/></clipPath>
<linearGradient id="sbg" x1="0" x2="0" y1="0" y2="1"><stop offset="0" stop-color="#5c5c5c"/><stop offset="1" stop-color="#6a6a6a"/></linearGradient></defs>
<rect x="431.8" y="589" width="680.9" height="207" fill="#000"/>
<g clip-path="url(#swc)">
<rect x="432.9" y="598" width="66.6" height="151" fill="#f0f0f0"/>
<rect x="434.2" y="599.3" width="64" height="74.7" fill="#9db940"/>
<rect x="434.2" y="674" width="64" height="73.7" fill="#a0bc44"/>
<text x="446.05" y="768.3" font-size="16" fill="#fff" textLength="40.3" lengthAdjust="spacingAndGlyphs" stroke="#fff" stroke-width="0.25">Yellow</text>
<text x="446.05" y="785.3" font-size="16" fill="#fff" textLength="38.3" lengthAdjust="spacingAndGlyphs" stroke="#fff" stroke-width="0.25">Green</text>
<rect x="511.05" y="598" width="66.6" height="151" fill="#f0f0f0"/>
<rect x="512.35" y="599.3" width="64" height="74.7" fill="#dfa12c"/>
<rect x="512.35" y="674" width="64" height="73.7" fill="#e3a030"/>
<text x="521.5" y="768.3" font-size="16" fill="#fff" textLength="45.7" lengthAdjust="spacingAndGlyphs" stroke="#fff" stroke-width="0.25">Orange</text>
<text x="521.5" y="785.3" font-size="16" fill="#fff" textLength="40.3" lengthAdjust="spacingAndGlyphs" stroke="#fff" stroke-width="0.25">Yellow</text>
<rect x="589.2" y="598" width="66.6" height="151" fill="#f0f0f0"/>
<rect x="590.5" y="599.3" width="64" height="74.7" fill="#2b3a98"/>
<rect x="590.5" y="674" width="64" height="73.7" fill="#343b93"/>
<text x="608.65" y="768.3" font-size="16" fill="#fff" textLength="27.7" lengthAdjust="spacingAndGlyphs" stroke="#fff" stroke-width="0.25">Blue</text>
<rect x="667.35" y="598" width="66.6" height="151" fill="#f0f0f0"/>
<rect x="668.65" y="599.3" width="64" height="74.7" fill="#3f9448"/>
<rect x="668.65" y="674" width="64" height="73.7" fill="#45954b"/>
<text x="681.5" y="768.3" font-size="16" fill="#fff" textLength="38.3" lengthAdjust="spacingAndGlyphs" stroke="#fff" stroke-width="0.25">Green</text>
<rect x="745.5" y="598" width="66.6" height="151" fill="#f0f0f0"/>
<rect x="746.8" y="599.3" width="64" height="74.7" fill="#ab2d3a"/>
<rect x="746.8" y="674" width="64" height="73.7" fill="#b0323e"/>
<text x="767.1" y="768.3" font-size="16" fill="#fff" textLength="23.4" lengthAdjust="spacingAndGlyphs" stroke="#fff" stroke-width="0.25">Red</text>
<rect x="823.65" y="598" width="66.6" height="151" fill="#f0f0f0"/>
<rect x="824.95" y="599.3" width="64" height="74.7" fill="#e3c820"/>
<rect x="824.95" y="674" width="64" height="73.7" fill="#ecc622"/>
<text x="836.8" y="768.3" font-size="16" fill="#fff" textLength="40.3" lengthAdjust="spacingAndGlyphs" stroke="#fff" stroke-width="0.25">Yellow</text>
<rect x="901.8" y="598" width="66.6" height="151" fill="#f0f0f0"/>
<rect x="903.1" y="599.3" width="64" height="74.7" fill="#b4548f"/>
<rect x="903.1" y="674" width="64" height="73.7" fill="#b85694"/>
<text x="907.45" y="768.3" font-size="16" fill="#fff" textLength="55.3" lengthAdjust="spacingAndGlyphs" stroke="#fff" stroke-width="0.25">Magenta</text>
<rect x="979.95" y="598" width="66.6" height="151" fill="#f0f0f0"/>
<rect x="981.25" y="599.3" width="64" height="74.7" fill="#0089aa"/>
<rect x="981.25" y="674" width="64" height="73.7" fill="#1787a5"/>
<text x="998" y="768.3" font-size="16" fill="#fff" textLength="30.5" lengthAdjust="spacingAndGlyphs" stroke="#fff" stroke-width="0.25">Cyan</text>
<rect x="1058.1" y="598" width="66.6" height="151" fill="#f0f0f0"/>
<rect x="1059.4" y="599.3" width="64" height="74.7" fill="#f81206"/>
<rect x="1059.4" y="674" width="64" height="73.7" fill="#ff1414"/>
<text x="1060.4" y="768.3" font-size="16" fill="#fff" textLength="62" lengthAdjust="spacingAndGlyphs" stroke="#fff" stroke-width="0.25">100% Red</text>
</g>
<rect x="431.8" y="796" width="680.9" height="20" rx="4" fill="url(#sbg)"/>
<rect x="433.5" y="797.5" width="15.5" height="17" rx="3" fill="#8c8c8c"/><path d="M444.5 801 v10 l-6.5 -5 z" fill="#4a4a4a"/>
<rect x="1095.5" y="797.5" width="15.5" height="17" rx="3" fill="#8c8c8c"/><path d="M1100 801 v10 l6.5 -5 z" fill="#4a4a4a"/>
<rect x="798.3" y="797.5" width="181.5" height="17" rx="8" fill="#474747"/>
</g>
<g id="sec_cie">
<rect x="1120" y="99" width="798.7" height="717.5" fill="#1b1b1b"/>
<rect x="1128.2" y="107.8" width="782.5" height="700.7" fill="#323232"/>
<rect x="1162.2" y="138.2" width="744.1" height="632.7" fill="#232323"/>
<text x="1476.3" y="131.7" font-size="18" fill="#d4d4d4" textLength="86.7" lengthAdjust="spacingAndGlyphs" stroke="#d4d4d4" stroke-width="0.25">CIE 1931 xy</text>
<defs><clipPath id="hs"><path d="M1316.72 768.29 L1316.68 768.3 L1316.61 768.33 L1316.49 768.36 L1316.37 768.39 L1316.25 768.41 L1316.12 768.44 L1315.94 768.47 L1315.77 768.49 L1315.61 768.5 L1315.41 768.51 L1315.16 768.51 L1314.89 768.49 L1314.61 768.45 L1314.3 768.39 L1313.94 768.31 L1313.57 768.2 L1313.22 768.05 L1312.91 767.89 L1312.64 767.73 L1312.37 767.56 L1312.07 767.38 L1311.76 767.18 L1311.44 766.95 L1311.07 766.7 L1310.67 766.42 L1310.24 766.11 L1309.77 765.77 L1309.27 765.4 L1308.75 765 L1308.21 764.58 L1307.65 764.13 L1307.05 763.67 L1306.4 763.18 L1305.71 762.66 L1304.96 762.11 L1304.14 761.5 L1303.25 760.84 L1302.28 760.14 L1301.25 759.38 L1300.15 758.57 L1299.01 757.73 L1297.81 756.84 L1296.53 755.87 L1295.16 754.79 L1293.72 753.63 L1292.2 752.39 L1290.59 751.01 L1288.9 749.48 L1287.16 747.86 L1285.35 746.13 L1283.4 744.13 L1281.27 741.71 L1278.97 738.93 L1276.52 735.82 L1273.89 732.27 L1271.09 728.15 L1268.14 723.57 L1265.02 718.53 L1261.71 712.83 L1258.19 706.27 L1254.45 698.91 L1250.51 690.82 L1246.35 681.82 L1241.94 671.72 L1237.22 660.57 L1232.2 648.43 L1227.04 635.14 L1221.9 620.56 L1216.75 604.63 L1211.53 587.43 L1206.33 569.07 L1201.24 549.65 L1196.16 528.91 L1191.09 506.89 L1186.24 484.13 L1181.83 461.18 L1177.8 437.82 L1174.07 413.87 L1170.84 389.96 L1168.27 366.68 L1166.33 343.93 L1164.96 321.49 L1164.29 299.74 L1164.45 279.11 L1165.47 259.45 L1167.27 240.62 L1169.88 223.05 L1173.35 207.2 L1177.76 193.01 L1183.09 180.32 L1189.14 169.35 L1195.74 160.3 L1203.01 153.41 L1210.97 148.57 L1219.32 145.4 L1227.84 143.53 L1236.59 143.17 L1245.6 144.42 L1254.67 146.65 L1263.69 149.28 L1272.73 152.37 L1281.83 156.16 L1290.86 160.34 L1299.71 164.59 L1308.37 168.9 L1316.88 173.41 L1325.29 178.08 L1333.62 182.88 L1341.87 187.81 L1350.01 192.89 L1358.1 198.09 L1366.18 203.42 L1374.24 208.89 L1382.28 214.48 L1390.29 220.19 L1398.27 225.98 L1406.24 231.87 L1414.17 237.85 L1422.09 243.91 L1430 250.04 L1437.92 256.22 L1445.82 262.47 L1453.72 268.78 L1461.63 275.13 L1469.56 281.53 L1477.49 287.98 L1485.43 294.47 L1493.34 300.97 L1501.24 307.5 L1509.13 314.06 L1517.01 320.63 L1524.87 327.19 L1532.74 333.75 L1540.6 340.31 L1548.43 346.87 L1556.22 353.4 L1563.97 359.92 L1571.68 366.42 L1579.35 372.89 L1586.95 379.31 L1594.5 385.69 L1602.01 392.04 L1609.44 398.33 L1616.79 404.55 L1624.07 410.7 L1631.28 416.8 L1638.39 422.81 L1645.39 428.73 L1652.3 434.55 L1659.11 440.28 L1665.79 445.91 L1672.31 451.41 L1678.69 456.81 L1684.93 462.1 L1690.99 467.25 L1696.84 472.21 L1702.46 476.96 L1707.87 481.53 L1713.1 485.95 L1718.18 490.24 L1723.13 494.42 L1727.93 498.47 L1732.55 502.37 L1736.95 506.08 L1741.14 509.6 L1745.13 512.93 L1748.92 516.11 L1752.54 519.15 L1755.97 522.05 L1759.22 524.8 L1762.29 527.41 L1765.21 529.89 L1767.96 532.23 L1770.54 534.42 L1772.98 536.49 L1775.3 538.45 L1777.49 540.29 L1779.55 542.02 L1781.5 543.65 L1783.35 545.21 L1785.11 546.69 L1786.76 548.09 L1788.32 549.42 L1789.82 550.69 L1791.27 551.92 L1792.65 553.09 L1793.97 554.21 L1795.22 555.27 L1796.42 556.29 L1797.55 557.26 L1798.63 558.17 L1799.65 559.02 L1800.61 559.83 L1801.52 560.58 L1802.38 561.28 L1803.19 561.95 L1803.93 562.58 L1804.62 563.16 L1805.25 563.7 L1805.85 564.21 L1806.41 564.69 L1806.94 565.14 L1807.43 565.55 L1807.89 565.94 L1808.29 566.28 L1808.66 566.59 L1809.01 566.89 L1809.39 567.21 L1809.83 567.59 L1810.29 567.98 L1810.75 568.37 L1811.16 568.72 L1811.52 569.02 L1811.84 569.29 L1812.13 569.54 L1812.4 569.77 L1812.66 569.99 L1812.91 570.2 L1813.12 570.38 L1813.29 570.52 L1813.4 570.62 L1813.48 570.68 L1813.52 570.72 L1813.55 570.74Z"/></clipPath>
<filter id="bl" filterUnits="userSpaceOnUse" x="1100" y="90" width="800" height="740" color-interpolation-filters="sRGB"><feGaussianBlur stdDeviation="3.4"/></filter>
<filter id="bl2" filterUnits="userSpaceOnUse" x="1600" y="100" width="340" height="330" color-interpolation-filters="sRGB"><feGaussianBlur stdDeviation="6"/></filter>
<clipPath id="ins"><rect x="1647.6" y="146.6" width="252.4" height="237.8"/></clipPath></defs>
<g clip-path="url(#hs)"><g filter="url(#bl)" class="cc"><rect x=1212 y=126 fill=#00ff00 /><rect x=1220 y=126 fill=#00ff00 /><rect x=1228 y=126 fill=#00ff00 /><rect x=1236 y=126 fill=#00ff00 /><rect x=1244 y=126 fill=#00ff00 /><rect x=1252 y=126 fill=#00ff00 /><rect x=1188 y=134 fill=#00ff00 /><rect x=1196 y=134 fill=#00ff00 /><rect x=1204 y=134 fill=#00ff00 /><rect x=1212 y=134 fill=#00ff00 /><rect x=1220 y=134 fill=#00ff00 /><rect x=1228 y=134 fill=#00ff00 /><rect x=1236 y=134 fill=#00ff00 /><rect x=1244 y=134 fill=#00ff00 /><rect x=1252 y=134 fill=#00ff00 /><rect x=1260 y=134 fill=#00ff00 /><rect x=1268 y=134 fill=#00ff00 /><rect x=1276 y=134 fill=#00ff00 /><rect x=1180 y=142 fill=#00ff00 /><rect x=1188 y=142 fill=#00ff00 /><rect x=1196 y=142 fill=#00ff00 /><rect x=1204 y=142 fill=#00ff00 /><rect x=1212 y=142 fill=#00ff00 /><rect x=1220 y=142 fill=#00ff00 /><rect x=1228 y=142 fill=#00ff00 /><rect x=1236 y=142 fill=#00ff00 /><rect x=1244 y=142 fill=#00ff00 /><rect x=1252 y=142 fill=#00ff00 /><rect x=1260 y=142 fill=#00ff00 /><rect x=1268 y=142 fill=#00ff00 /><rect x=1276 y=142 fill=#00ff00 /><rect x=1284 y=142 fill=#00ff00 /><rect x=1292 y=142 fill=#00ff00 /><rect x=1300 y=142 fill=#00ff00 /><rect x=1172 y=150 fill=#00ff01 /><rect x=1180 y=150 fill=#00ff00 /><rect x=1188 y=150 fill=#00ff00 /><rect x=1196 y=150 fill=#00ff00 /><rect x=1204 y=150 fill=#00ff00 /><rect x=1212 y=150 fill=#00ff00 /><rect x=1220 y=150 fill=#00ff00 /><rect x=1228 y=150 fill=#00ff00 /><rect x=1236 y=150 fill=#00ff00 /><rect x=1244 y=150 fill=#00ff00 /><rect x=1252 y=150 fill=#00ff00 /><rect x=1260 y=150 fill=#00ff00 /><rect x=1268 y=150 fill=#00ff00 /><rect x=1276 y=150 fill=#00ff00 /><rect x=1284 y=150 fill=#00ff00 /><rect x=1292 y=150 fill=#00ff00 /><rect x=1300 y=150 fill=#00ff00 /><rect x=1308 y=150 fill=#00ff00 /><rect x=1316 y=150 fill=#00ff00 /><rect x=1172 y=158 fill=#00ff03 /><rect x=1180 y=158 fill=#00ff02 /><rect x=1188 y=158 fill=#00ff00 /><rect x=1196 y=158 fill=#00ff00 /><rect x=1204 y=158 fill=#00ff00 /><rect x=1212 y=158 fill=#00ff00 /><rect x=1220 y=158 fill=#00ff00 /><rect x=1228 y=158 fill=#00ff00 /><rect x=1236 y=158 fill=#00ff00 /><rect x=1244 y=158 fill=#00ff00 /><rect x=1252 y=158 fill=#00ff00 /><rect x=1260 y=158 fill=#00ff00 /><rect x=1268 y=158 fill=#00ff00 /><rect x=1276 y=158 fill=#00ff00 /><rect x=1284 y=158 fill=#00ff00 /><rect x=1292 y=158 fill=#00ff00 /><rect x=1300 y=158 fill=#00ff00 /><rect x=1308 y=158 fill=#00ff00 /><rect x=1316 y=158 fill=#00ff00 /><rect x=1324 y=158 fill=#00ff00 /><rect x=1164 y=166 fill=#00ff07 /><rect x=1172 y=166 fill=#00ff06 /><rect x=1180 y=166 fill=#00ff04 /><rect x=1188 y=166 fill=#00ff02 /><rect x=1196 y=166 fill=#00ff01 /><rect x=1204 y=166 fill=#00ff00 /><rect x=1212 y=166 fill=#00ff00 /><rect x=1220 y=166 fill=#00ff00 /><rect x=1228 y=166 fill=#00ff00 /><rect x=1236 y=166 fill=#00ff00 /><rect x=1244 y=166 fill=#00ff00 /><rect x=1252 y=166 fill=#00ff00 /><rect x=1260 y=166 fill=#00ff00 /><rect x=1268 y=166 fill=#00ff00 /><rect x=1276 y=166 fill=#00ff00 /><rect x=1284 y=166 fill=#00ff00 /><rect x=1292 y=166 fill=#00ff00 /><rect x=1300 y=166 fill=#00ff00 /><rect x=1308 y=166 fill=#00ff00 /><rect x=1316 y=166 fill=#00ff00 /><rect x=1324 y=166 fill=#00ff00 /><rect x=1332 y=166 fill=#00ff00 /><rect x=1340 y=166 fill=#00ff00 /><rect x=1164 y=174 fill=#00ff09 /><rect x=1172 y=174 fill=#00ff08 /><rect x=1180 y=174 fill=#00ff06 /><rect x=1188 y=174 fill=#00ff05 /><rect x=1196 y=174 fill=#00ff03 /><rect x=1204 y=174 fill=#00ff02 /><rect x=1212 y=174 fill=#00ff00 /><rect x=1220 y=174 fill=#00ff00 /><rect x=1228 y=174 fill=#00ff00 /><rect x=1236 y=174 fill=#00ff00 /><rect x=1244 y=174 fill=#00ff00 /><rect x=1252 y=174 fill=#00ff00 /><rect x=1260 y=174 fill=#00ff00 /><rect x=1268 y=174 fill=#00ff00 /><rect x=1276 y=174 fill=#00ff00 /><rect x=1284 y=174 fill=#00ff00 /><rect x=1292 y=174 fill=#00ff00 /><rect x=1300 y=174 fill=#00ff00 /><rect x=1308 y=174 fill=#00ff00 /><rect x=1316 y=174 fill=#00ff00 /><rect x=1324 y=174 fill=#00ff00 /><rect x=1332 y=174 fill=#00ff00 /><rect x=1340 y=174 fill=#00ff00 /><rect x=1348 y=174 fill=#00ff00 /><rect x=1356 y=174 fill=#00ff00 /><rect x=1164 y=182 fill=#00ff0c /><rect x=1172 y=182 fill=#00ff0a /><rect x=1180 y=182 fill=#00ff09 /><rect x=1188 y=182 fill=#00ff07 /><rect x=1196 y=182 fill=#00ff06 /><rect x=1204 y=182 fill=#00ff04 /><rect x=1212 y=182 fill=#00ff03 /><rect x=1220 y=182 fill=#00ff01 /><rect x=1228 y=182 fill=#00ff00 /><rect x=1236 y=182 fill=#00ff00 /><rect x=1244 y=182 fill=#00ff00 /><rect x=1252 y=182 fill=#00ff00 /><rect x=1260 y=182 fill=#00ff00 /><rect x=1268 y=182 fill=#00ff00 /><rect x=1276 y=182 fill=#00ff00 /><rect x=1284 y=182 fill=#00ff00 /><rect x=1292 y=182 fill=#00ff00 /><rect x=1300 y=182 fill=#00ff00 /><rect x=1308 y=182 fill=#00ff00 /><rect x=1316 y=182 fill=#00ff00 /><rect x=1324 y=182 fill=#00ff00 /><rect x=1332 y=182 fill=#00ff00 /><rect x=1340 y=182 fill=#00ff00 /><rect x=1348 y=182 fill=#00ff00 /><rect x=1356 y=182 fill=#00ff00 /><rect x=1364 y=182 fill=#00ff00 /><rect x=1156 y=190 fill=#00ff10 /><rect x=1164 y=190 fill=#00ff0e /><rect x=1172 y=190 fill=#00ff0d /><rect x=1180 y=190 fill=#00ff0b /><rect x=1188 y=190 fill=#00ff0a /><rect x=1196 y=190 fill=#00ff08 /><rect x=1204 y=190 fill=#00ff07 /><rect x=1212 y=190 fill=#00ff05 /><rect x=1220 y=190 fill=#00ff03 /><rect x=1228 y=190 fill=#00ff02 /><rect x=1236 y=190 fill=#00ff00 /><rect x=1244 y=190 fill=#00ff00 /><rect x=1252 y=190 fill=#00ff00 /><rect x=1260 y=190 fill=#00ff00 /><rect x=1268 y=190 fill=#00ff00 /><rect x=1276 y=190 fill=#00ff00 /><rect x=1284 y=190 fill=#00ff00 /><rect x=1292 y=190 fill=#00ff00 /><rect x=1300 y=190 fill=#00ff00 /><rect x=1308 y=190 fill=#00ff00 /><rect x=1316 y=190 fill=#00ff00 /><rect x=1324 y=190 fill=#00ff00 /><rect x=1332 y=190 fill=#00ff00 /><rect x=1340 y=190 fill=#00ff00 /><rect x=1348 y=190 fill=#00ff00 /><rect x=1356 y=190 fill=#00ff00 /><rect x=1364 y=190 fill=#00ff00 /><rect x=1372 y=190 fill=#00ff00 /><rect x=1380 y=190 fill=#00ff00 /><rect x=1156 y=198 fill=#00ff13 /><rect x=1164 y=198 fill=#00ff11 /><rect x=1172 y=198 fill=#00ff10 /><rect x=1180 y=198 fill=#00ff0e /><rect x=1188 y=198 fill=#00ff0c /><rect x=1196 y=198 fill=#00ff0b /><rect x=1204 y=198 fill=#00ff09 /><rect x=1212 y=198 fill=#00ff08 /><rect x=1220 y=198 fill=#00ff06 /><rect x=1228 y=198 fill=#00ff04 /><rect x=1236 y=198 fill=#00ff03 /><rect x=1244 y=198 fill=#00ff01 /><rect x=1252 y=198 fill=#00ff00 /><rect x=1260 y=198 fill=#00ff00 /><rect x=1268 y=198 fill=#00ff00 /><rect x=1276 y=198 fill=#00ff00 /><rect x=1284 y=198 fill=#00ff00 /><rect x=1292 y=198 fill=#00ff00 /><rect x=1300 y=198 fill=#00ff00 /><rect x=1308 y=198 fill=#00ff00 /><rect x=1316 y=198 fill=#00ff00 /><rect x=1324 y=198 fill=#00ff00 /><rect x=1332 y=198 fill=#00ff00 /><rect x=1340 y=198 fill=#00ff00 /><rect x=1348 y=198 fill=#00ff00 /><rect x=1356 y=198 fill=#00ff00 /><rect x=1364 y=198 fill=#00ff00 /><rect x=1372 y=198 fill=#00ff00 /><rect x=1380 y=198 fill=#00ff00 /><rect x=1388 y=198 fill=#00ff00 /><rect x=1156 y=206 fill=#00ff15 /><rect x=1164 y=206 fill=#00ff14 /><rect x=1172 y=206 fill=#00ff12 /><rect x=1180 y=206 fill=#00ff11 /><rect x=1188 y=206 fill=#00ff0f /><rect x=1196 y=206 fill=#00ff0e /><rect x=1204 y=206 fill=#00ff0c /><rect x=1212 y=206 fill=#00ff0a /><rect x=1220 y=206 fill=#00ff09 /><rect x=1228 y=206 fill=#00ff07 /><rect x=1236 y=206 fill=#00ff05 /><rect x=1244 y=206 fill=#00ff04 /><rect x=1252 y=206 fill=#00ff02 /><rect x=1260 y=206 fill=#00ff00 /><rect x=1268 y=206 fill=#00ff00 /><rect x=1276 y=206 fill=#00ff00 /><rect x=1284 y=206 fill=#00ff00 /><rect x=1292 y=206 fill=#00ff00 /><rect x=1300 y=206 fill=#00ff00 /><rect x=1308 y=206 fill=#00ff00 /><rect x=1316 y=206 fill=#00ff00 /><rect x=1324 y=206 fill=#00ff00 /><rect x=1332 y=206 fill=#00ff00 /><rect x=1340 y=206 fill=#00ff00 /><rect x=1348 y=206 fill=#00ff00 /><rect x=1356 y=206 fill=#00ff00 /><rect x=1364 y=206 fill=#00ff00 /><rect x=1372 y=206 fill=#00ff00 /><rect x=1380 y=206 fill=#00ff00 /><rect x=1388 y=206 fill=#00ff00 /><rect x=1396 y=206 fill=#00ff00 /><rect x=1404 y=206 fill=#00ff00 /><rect x=1156 y=214 fill=#00ff18 /><rect x=1164 y=214 fill=#00ff16 /><rect x=1172 y=214 fill=#00ff15 /><rect x=1180 y=214 fill=#00ff13 /><rect x=1188 y=214 fill=#00ff12 /><rect x=1196 y=214 fill=#00ff10 /><rect x=1204 y=214 fill=#00ff0f /><rect x=1212 y=214 fill=#00ff0d /><rect x=1220 y=214 fill=#00ff0b /><rect x=1228 y=214 fill=#00ff0a /><rect x=1236 y=214 fill=#00ff08 /><rect x=1244 y=214 fill=#00ff06 /><rect x=1252 y=214 fill=#00ff04 /><rect x=1260 y=214 fill=#00ff03 /><rect x=1268 y=214 fill=#00ff01 /><rect x=1276 y=214 fill=#00ff00 /><rect x=1284 y=214 fill=#00ff00 /><rect x=1292 y=214 fill=#00ff00 /><rect x=1300 y=214 fill=#00ff00 /><rect x=1308 y=214 fill=#00ff00 /><rect x=1316 y=214 fill=#00ff00 /><rect x=1324 y=214 fill=#00ff00 /><rect x=1332 y=214 fill=#00ff00 /><rect x=1340 y=214 fill=#00ff00 /><rect x=1348 y=214 fill=#00ff00 /><rect x=1356 y=214 fill=#00ff00 /><rect x=1364 y=214 fill=#00ff00 /><rect x=1372 y=214 fill=#00ff00 /><rect x=1380 y=214 fill=#00ff00 /><rect x=1388 y=214 fill=#00ff00 /><rect x=1396 y=214 fill=#00ff00 /><rect x=1404 y=214 fill=#00ff00 /><rect x=1412 y=214 fill=#00ff00 /><rect x=1156 y=222 fill=#00ff1b /><rect x=1164 y=222 fill=#00ff19 /><rect x=1172 y=222 fill=#00ff18 /><rect x=1180 y=222 fill=#00ff16 /><rect x=1188 y=222 fill=#00ff15 /><rect x=1196 y=222 fill=#00ff13 /><rect x=1204 y=222 fill=#00ff11 /><rect x=1212 y=222 fill=#00ff10 /><rect x=1220 y=222 fill=#00ff0e /><rect x=1228 y=222 fill=#00ff0c /><rect x=1236 y=222 fill=#00ff0b /><rect x=1244 y=222 fill=#00ff09 /><rect x=1252 y=222 fill=#00ff07 /><rect x=1260 y=222 fill=#00ff05 /><rect x=1268 y=222 fill=#00ff04 /><rect x=1276 y=222 fill=#00ff02 /><rect x=1284 y=222 fill=#00ff00 /><rect x=1292 y=222 fill=#00ff00 /><rect x=1300 y=222 fill=#00ff00 /><rect x=1308 y=222 fill=#00ff00 /><rect x=1316 y=222 fill=#00ff00 /><rect x=1324 y=222 fill=#00ff00 /><rect x=1332 y=222 fill=#00ff00 /><rect x=1340 y=222 fill=#00ff00 /><rect x=1348 y=222 fill=#00ff00 /><rect x=1356 y=222 fill=#00ff00 /><rect x=1364 y=222 fill=#00ff00 /><rect x=1372 y=222 fill=#00ff00 /><rect x=1380 y=222 fill=#00ff00 /><rect x=1388 y=222 fill=#00ff00 /><rect x=1396 y=222 fill=#00ff00 /><rect x=1404 y=222 fill=#00ff00 /><rect x=1412 y=222 fill=#00ff00 /><rect x=1420 y=222 fill=#00ff00 /><rect x=1428 y=222 fill=#00ff00 /><rect x=1148 y=230 fill=#00ff1f /><rect x=1156 y=230 fill=#00ff1e /><rect x=1164 y=230 fill=#00ff1c /><rect x=1172 y=230 fill=#00ff1b /><rect x=1180 y=230 fill=#00ff19 /><rect x=1188 y=230 fill=#00ff18 /><rect x=1196 y=230 fill=#00ff16 /><rect x=1204 y=230 fill=#00ff14 /><rect x=1212 y=230 fill=#00ff13 /><rect x=1220 y=230 fill=#00ff11 /><rect x=1228 y=230 fill=#00ff0f /><rect x=1236 y=230 fill=#00ff0e /><rect x=1244 y=230 fill=#00ff0c /><rect x=1252 y=230 fill=#00ff0a /><rect x=1260 y=230 fill=#00ff08 /><rect x=1268 y=230 fill=#00ff07 /><rect x=1276 y=230 fill=#00ff05 /><rect x=1284 y=230 fill=#00ff03 /><rect x=1292 y=230 fill=#00ff01 /><rect x=1300 y=230 fill=#00ff00 /><rect x=1308 y=230 fill=#00ff00 /><rect x=1316 y=230 fill=#00ff00 /><rect x=1324 y=230 fill=#00ff00 /><rect x=1332 y=230 fill=#00ff00 /><rect x=1340 y=230 fill=#00ff00 /><rect x=1348 y=230 fill=#00ff00 /><rect x=1356 y=230 fill=#00ff00 /><rect x=1364 y=230 fill=#00ff00 /><rect x=1372 y=230 fill=#00ff00 /><rect x=1380 y=230 fill=#00ff00 /><rect x=1388 y=230 fill=#00ff00 /><rect x=1396 y=230 fill=#00ff00 /><rect x=1404 y=230 fill=#00ff00 /><rect x=1412 y=230 fill=#00ff00 /><rect x=1420 y=230 fill=#00ff00 /><rect x=1428 y=230 fill=#00ff00 /><rect x=1436 y=230 fill=#00ff00 /><rect x=1148 y=238 fill=#00ff22 /><rect x=1156 y=238 fill=#00ff21 /><rect x=1164 y=238 fill=#00ff1f /><rect x=1172 y=238 fill=#00ff1e /><rect x=1180 y=238 fill=#00ff1c /><rect x=1188 y=238 fill=#00ff1b /><rect x=1196 y=238 fill=#00ff19 /><rect x=1204 y=238 fill=#00ff17 /><rect x=1212 y=238 fill=#00ff16 /><rect x=1220 y=238 fill=#00ff14 /><rect x=1228 y=238 fill=#00ff12 /><rect x=1236 y=238 fill=#00ff11 /><rect x=1244 y=238 fill=#00ff0f /><rect x=1252 y=238 fill=#00ff0d /><rect x=1260 y=238 fill=#00ff0b /><rect x=1268 y=238 fill=#00ff09 /><rect x=1276 y=238 fill=#00ff08 /><rect x=1284 y=238 fill=#00ff06 /><rect x=1292 y=238 fill=#00ff04 /><rect x=1300 y=238 fill=#00ff02 /><rect x=1308 y=238 fill=#00ff00 /><rect x=1316 y=238 fill=#00ff00 /><rect x=1324 y=238 fill=#00ff00 /><rect x=1332 y=238 fill=#00ff00 /><rect x=1340 y=238 fill=#00ff00 /><rect x=1348 y=238 fill=#00ff00 /><rect x=1356 y=238 fill=#00ff00 /><rect x=1364 y=238 fill=#00ff00 /><rect x=1372 y=238 fill=#00ff00 /><rect x=1380 y=238 fill=#00ff00 /><rect x=1388 y=238 fill=#00ff00 /><rect x=1396 y=238 fill=#00ff00 /><rect x=1404 y=238 fill=#00ff00 /><rect x=1412 y=238 fill=#00ff00 /><rect x=1420 y=238 fill=#00ff00 /><rect x=1428 y=238 fill=#00ff00 /><rect x=1436 y=238 fill=#00ff00 /><rect x=1444 y=238 fill=#00ff00 /><rect x=1148 y=246 fill=#00ff25 /><rect x=1156 y=246 fill=#00ff24 /><rect x=1164 y=246 fill=#00ff22 /><rect x=1172 y=246 fill=#00ff21 /><rect x=1180 y=246 fill=#00ff1f /><rect x=1188 y=246 fill=#00ff1e /><rect x=1196 y=246 fill=#00ff1c /><rect x=1204 y=246 fill=#00ff1a /><rect x=1212 y=246 fill=#00ff19 /><rect x=1220 y=246 fill=#00ff17 /><rect x=1228 y=246 fill=#00ff15 /><rect x=1236 y=246 fill=#00ff14 /><rect x=1244 y=246 fill=#00ff12 /><rect x=1252 y=246 fill=#00ff10 /><rect x=1260 y=246 fill=#00ff0e /><rect x=1268 y=246 fill=#00ff0c /><rect x=1276 y=246 fill=#00ff0b /><rect x=1284 y=246 fill=#00ff09 /><rect x=1292 y=246 fill=#00ff07 /><rect x=1300 y=246 fill=#00ff05 /><rect x=1308 y=246 fill=#00ff03 /><rect x=1316 y=246 fill=#00ff01 /><rect x=1324 y=246 fill=#00ff00 /><rect x=1332 y=246 fill=#00ff00 /><rect x=1340 y=246 fill=#00ff00 /><rect x=1348 y=246 fill=#00ff00 /><rect x=1356 y=246 fill=#00ff00 /><rect x=1364 y=246 fill=#00ff00 /><rect x=1372 y=246 fill=#00ff00 /><rect x=1380 y=246 fill=#00ff00 /><rect x=1388 y=246 fill=#00ff00 /><rect x=1396 y=246 fill=#00ff00 /><rect x=1404 y=246 fill=#00ff00 /><rect x=1412 y=246 fill=#00ff00 /><rect x=1420 y=246 fill=#00ff00 /><rect x=1428 y=246 fill=#00ff00 /><rect x=1436 y=246 fill=#00ff00 /><rect x=1444 y=246 fill=#00ff00 /><rect x=1452 y=246 fill=#06ff00 /><rect x=1148 y=254 fill=#00ff28 /><rect x=1156 y=254 fill=#00ff27 /><rect x=1164 y=254 fill=#00ff25 /><rect x=1172 y=254 fill=#00ff24 /><rect x=1180 y=254 fill=#00ff22 /><rect x=1188 y=254 fill=#00ff21 /><rect x=1196 y=254 fill=#00ff1f /><rect x=1204 y=254 fill=#00ff1e /><rect x=1212 y=254 fill=#00ff1c /><rect x=1220 y=254 fill=#00ff1a /><rect x=1228 y=254 fill=#00ff19 /><rect x=1236 y=254 fill=#00ff17 /><rect x=1244 y=254 fill=#00ff15 /><rect x=1252 y=254 fill=#00ff13 /><rect x=1260 y=254 fill=#00ff11 /><rect x=1268 y=254 fill=#00ff10 /><rect x=1276 y=254 fill=#00ff0e /><rect x=1284 y=254 fill=#00ff0c /><rect x=1292 y=254 fill=#00ff0a /><rect x=1300 y=254 fill=#00ff08 /><rect x=1308 y=254 fill=#00ff06 /><rect x=1316 y=254 fill=#00ff04 /><rect x=1324 y=254 fill=#00ff02 /><rect x=1332 y=254 fill=#00ff00 /><rect x=1340 y=254 fill=#00ff00 /><rect x=1348 y=254 fill=#00ff00 /><rect x=1356 y=254 fill=#00ff00 /><rect x=1364 y=254 fill=#00ff00 /><rect x=1372 y=254 fill=#00ff00 /><rect x=1380 y=254 fill=#00ff00 /><rect x=1388 y=254 fill=#00ff00 /><rect x=1396 y=254 fill=#00ff00 /><rect x=1404 y=254 fill=#00ff00 /><rect x=1412 y=254 fill=#00ff00 /><rect x=1420 y=254 fill=#00ff00 /><rect x=1428 y=254 fill=#00ff00 /><rect x=1436 y=254 fill=#00ff00 /><rect x=1444 y=254 fill=#00ff00 /><rect x=1452 y=254 fill=#09ff00 /><rect x=1460 y=254 fill=#12ff00 /><rect x=1468 y=254 fill=#1bff00 /><rect x=1148 y=262 fill=#00ff2c /><rect x=1156 y=262 fill=#00ff2a /><rect x=1164 y=262 fill=#00ff29 /><rect x=1172 y=262 fill=#00ff27 /><rect x=1180 y=262 fill=#00ff26 /><rect x=1188 y=262 fill=#00ff24 /><rect x=1196 y=262 fill=#00ff22 /><rect x=1204 y=262 fill=#00ff21 /><rect x=1212 y=262 fill=#00ff1f /><rect x=1220 y=262 fill=#00ff1e /><rect x=1228 y=262 fill=#00ff1c /><rect x=1236 y=262 fill=#00ff1a /><rect x=1244 y=262 fill=#00ff18 /><rect x=1252 y=262 fill=#00ff17 /><rect x=1260 y=262 fill=#00ff15 /><rect x=1268 y=262 fill=#00ff13 /><rect x=1276 y=262 fill=#00ff11 /><rect x=1284 y=262 fill=#00ff0f /><rect x=1292 y=262 fill=#00ff0d /><rect x=1300 y=262 fill=#00ff0b /><rect x=1308 y=262 fill=#00ff09 /><rect x=1316 y=262 fill=#00ff07 /><rect x=1324 y=262 fill=#00ff05 /><rect x=1332 y=262 fill=#00ff03 /><rect x=1340 y=262 fill=#00ff01 /><rect x=1348 y=262 fill=#00ff00 /><rect x=1356 y=262 fill=#00ff00 /><rect x=1364 y=262 fill=#00ff00 /><rect x=1372 y=262 fill=#00ff00 /><rect x=1380 y=262 fill=#00ff00 /><rect x=1388 y=262 fill=#00ff00 /><rect x=1396 y=262 fill=#00ff00 /><rect x=1404 y=262 fill=#00ff00 /><rect x=1412 y=262 fill=#00ff00 /><rect x=1420 y=262 fill=#00ff00 /><rect x=1428 y=262 fill=#00ff00 /><rect x=1436 y=262 fill=#00ff00 /><rect x=1444 y=262 fill=#03ff00 /><rect x=1452 y=262 fill=#0cff00 /><rect x=1460 y=262 fill=#15ff00 /><rect x=1468 y=262 fill=#1fff00 /><rect x=1476 y=262 fill=#29ff00 /><rect x=1148 y=270 fill=#00ff2f /><rect x=1156 y=270 fill=#00ff2e /><rect x=1164 y=270 fill=#00ff2c /><rect x=1172 y=270 fill=#00ff2b /><rect x=1180 y=270 fill=#00ff29 /><rect x=1188 y=270 fill=#00ff27 /><rect x=1196 y=270 fill=#00ff26 /><rect x=1204 y=270 fill=#00ff24 /><rect x=1212 y=270 fill=#00ff23 /><rect x=1220 y=270 fill=#00ff21 /><rect x=1228 y=270 fill=#00ff1f /><rect x=1236 y=270 fill=#00ff1d /><rect x=1244 y=270 fill=#00ff1c /><rect x=1252 y=270 fill=#00ff1a /><rect x=1260 y=270 fill=#00ff18 /><rect x=1268 y=270 fill=#00ff16 /><rect x=1276 y=270 fill=#00ff14 /><rect x=1284 y=270 fill=#00ff12 /><rect x=1292 y=270 fill=#00ff11 /><rect x=1300 y=270 fill=#00ff0f /><rect x=1308 y=270 fill=#00ff0d /><rect x=1316 y=270 fill=#00ff0a /><rect x=1324 y=270 fill=#00ff08 /><rect x=1332 y=270 fill=#00ff06 /><rect x=1340 y=270 fill=#00ff04 /><rect x=1348 y=270 fill=#00ff02 /><rect x=1356 y=270 fill=#00ff00 /><rect x=1364 y=270 fill=#00ff00 /><rect x=1372 y=270 fill=#00ff00 /><rect x=1380 y=270 fill=#00ff00 /><rect x=1388 y=270 fill=#00ff00 /><rect x=1396 y=270 fill=#00ff00 /><rect x=1404 y=270 fill=#00ff00 /><rect x=1412 y=270 fill=#00ff00 /><rect x=1420 y=270 fill=#00ff00 /><rect x=1428 y=270 fill=#00ff00 /><rect x=1436 y=270 fill=#00ff00 /><rect x=1444 y=270 fill=#06ff00 /><rect x=1452 y=270 fill=#0fff00 /><rect x=1460 y=270 fill=#19ff00 /><rect x=1468 y=270 fill=#23ff00 /><rect x=1476 y=270 fill=#2dff00 /><rect x=1484 y=270 fill=#37ff00 /><rect x=1148 y=278 fill=#00ff33 /><rect x=1156 y=278 fill=#00ff31 /><rect x=1164 y=278 fill=#00ff30 /><rect x=1172 y=278 fill=#00ff2e /><rect x=1180 y=278 fill=#00ff2d /><rect x=1188 y=278 fill=#00ff2b /><rect x=1196 y=278 fill=#00ff29 /><rect x=1204 y=278 fill=#00ff28 /><rect x=1212 y=278 fill=#00ff26 /><rect x=1220 y=278 fill=#00ff24 /><rect x=1228 y=278 fill=#00ff23 /><rect x=1236 y=278 fill=#00ff21 /><rect x=1244 y=278 fill=#00ff1f /><rect x=1252 y=278 fill=#00ff1d /><rect x=1260 y=278 fill=#00ff1c /><rect x=1268 y=278 fill=#00ff1a /><rect x=1276 y=278 fill=#00ff18 /><rect x=1284 y=278 fill=#00ff16 /><rect x=1292 y=278 fill=#00ff14 /><rect x=1300 y=278 fill=#00ff12 /><rect x=1308 y=278 fill=#00ff10 /><rect x=1316 y=278 fill=#00ff0e /><rect x=1324 y=278 fill=#00ff0c /><rect x=1332 y=278 fill=#00ff0a /><rect x=1340 y=278 fill=#00ff08 /><rect x=1348 y=278 fill=#00ff05 /><rect x=1356 y=278 fill=#00ff03 /><rect x=1364 y=278 fill=#00ff01 /><rect x=1372 y=278 fill=#00ff00 /><rect x=1380 y=278 fill=#00ff00 /><rect x=1388 y=278 fill=#00ff00 /><rect x=1396 y=278 fill=#00ff00 /><rect x=1404 y=278 fill=#00ff00 /><rect x=1412 y=278 fill=#00ff00 /><rect x=1420 y=278 fill=#00ff00 /><rect x=1428 y=278 fill=#00ff00 /><rect x=1436 y=278 fill=#00ff00 /><rect x=1444 y=278 fill=#09ff00 /><rect x=1452 y=278 fill=#13ff00 /><rect x=1460 y=278 fill=#1dff00 /><rect x=1468 y=278 fill=#27ff00 /><rect x=1476 y=278 fill=#31ff00 /><rect x=1484 y=278 fill=#3bff00 /><rect x=1492 y=278 fill=#46ff00 /><rect x=1148 y=286 fill=#00ff36 /><rect x=1156 y=286 fill=#00ff35 /><rect x=1164 y=286 fill=#00ff33 /><rect x=1172 y=286 fill=#00ff32 /><rect x=1180 y=286 fill=#00ff30 /><rect x=1188 y=286 fill=#00ff2f /><rect x=1196 y=286 fill=#00ff2d /><rect x=1204 y=286 fill=#00ff2b /><rect x=1212 y=286 fill=#00ff2a /><rect x=1220 y=286 fill=#00ff28 /><rect x=1228 y=286 fill=#00ff26 /><rect x=1236 y=286 fill=#00ff25 /><rect x=1244 y=286 fill=#00ff23 /><rect x=1252 y=286 fill=#00ff21 /><rect x=1260 y=286 fill=#00ff1f /><rect x=1268 y=286 fill=#00ff1d /><rect x=1276 y=286 fill=#00ff1b /><rect x=1284 y=286 fill=#00ff1a /><rect x=1292 y=286 fill=#00ff18 /><rect x=1300 y=286 fill=#00ff16 /><rect x=1308 y=286 fill=#00ff14 /><rect x=1316 y=286 fill=#00ff11 /><rect x=1324 y=286 fill=#00ff0f /><rect x=1332 y=286 fill=#00ff0d /><rect x=1340 y=286 fill=#00ff0b /><rect x=1348 y=286 fill=#00ff09 /><rect x=1356 y=286 fill=#00ff07 /><rect x=1364 y=286 fill=#00ff04 /><rect x=1372 y=286 fill=#00ff02 /><rect x=1380 y=286 fill=#00ff00 /><rect x=1388 y=286 fill=#00ff00 /><rect x=1396 y=286 fill=#00ff00 /><rect x=1404 y=286 fill=#00ff00 /><rect x=1412 y=286 fill=#00ff00 /><rect x=1420 y=286 fill=#00ff00 /><rect x=1428 y=286 fill=#00ff00 /><rect x=1436 y=286 fill=#03ff00 /><rect x=1444 y=286 fill=#0cff00 /><rect x=1452 y=286 fill=#16ff00 /><rect x=1460 y=286 fill=#20ff00 /><rect x=1468 y=286 fill=#2bff00 /><rect x=1476 y=286 fill=#35ff00 /><rect x=1484 y=286 fill=#40ff00 /><rect x=1492 y=286 fill=#4bff00 /><rect x=1500 y=286 fill=#56ff00 /><rect x=1508 y=286 fill=#62ff00 /><rect x=1148 y=294 fill=#00ff3a /><rect x=1156 y=294 fill=#00ff38 /><rect x=1164 y=294 fill=#00ff37 /><rect x=1172 y=294 fill=#00ff35 /><rect x=1180 y=294 fill=#00ff34 /><rect x=1188 y=294 fill=#00ff32 /><rect x=1196 y=294 fill=#00ff31 /><rect x=1204 y=294 fill=#00ff2f /><rect x=1212 y=294 fill=#00ff2d /><rect x=1220 y=294 fill=#00ff2c /><rect x=1228 y=294 fill=#00ff2a /><rect x=1236 y=294 fill=#00ff28 /><rect x=1244 y=294 fill=#00ff27 /><rect x=1252 y=294 fill=#00ff25 /><rect x=1260 y=294 fill=#00ff23 /><rect x=1268 y=294 fill=#00ff21 /><rect x=1276 y=294 fill=#00ff1f /><rect x=1284 y=294 fill=#00ff1d /><rect x=1292 y=294 fill=#00ff1b /><rect x=1300 y=294 fill=#00ff19 /><rect x=1308 y=294 fill=#00ff17 /><rect x=1316 y=294 fill=#00ff15 /><rect x=1324 y=294 fill=#00ff13 /><rect x=1332 y=294 fill=#00ff11 /><rect x=1340 y=294 fill=#00ff0f /><rect x=1348 y=294 fill=#00ff0d /><rect x=1356 y=294 fill=#00ff0a /><rect x=1364 y=294 fill=#00ff08 /><rect x=1372 y=294 fill=#00ff06 /><rect x=1380 y=294 fill=#00ff03 /><rect x=1388 y=294 fill=#00ff01 /><rect x=1396 y=294 fill=#00ff00 /><rect x=1404 y=294 fill=#00ff00 /><rect x=1412 y=294 fill=#00ff00 /><rect x=1420 y=294 fill=#00ff00 /><rect x=1428 y=294 fill=#00ff00 /><rect x=1436 y=294 fill=#06ff00 /><rect x=1444 y=294 fill=#10ff00 /><rect x=1452 y=294 fill=#1aff00 /><rect x=1460 y=294 fill=#24ff00 /><rect x=1468 y=294 fill=#2fff00 /><rect x=1476 y=294 fill=#3aff00 /><rect x=1484 y=294 fill=#45ff00 /><rect x=1492 y=294 fill=#50ff00 /><rect x=1500 y=294 fill=#5cff00 /><rect x=1508 y=294 fill=#68ff00 /><rect x=1516 y=294 fill=#74ff00 /><rect x=1148 y=302 fill=#00ff3e /><rect x=1156 y=302 fill=#00ff3c /><rect x=1164 y=302 fill=#00ff3b /><rect x=1172 y=302 fill=#00ff39 /><rect x=1180 y=302 fill=#00ff38 /><rect x=1188 y=302 fill=#00ff36 /><rect x=1196 y=302 fill=#00ff35 /><rect x=1204 y=302 fill=#00ff33 /><rect x=1212 y=302 fill=#00ff31 /><rect x=1220 y=302 fill=#00ff30 /><rect x=1228 y=302 fill=#00ff2e /><rect x=1236 y=302 fill=#00ff2c /><rect x=1244 y=302 fill=#00ff2a /><rect x=1252 y=302 fill=#00ff29 /><rect x=1260 y=302 fill=#00ff27 /><rect x=1268 y=302 fill=#00ff25 /><rect x=1276 y=302 fill=#00ff23 /><rect x=1284 y=302 fill=#00ff21 /><rect x=1292 y=302 fill=#00ff1f /><rect x=1300 y=302 fill=#00ff1d /><rect x=1308 y=302 fill=#00ff1b /><rect x=1316 y=302 fill=#00ff19 /><rect x=1324 y=302 fill=#00ff17 /><rect x=1332 y=302 fill=#00ff15 /><rect x=1340 y=302 fill=#00ff13 /><rect x=1348 y=302 fill=#00ff10 /><rect x=1356 y=302 fill=#00ff0e /><rect x=1364 y=302 fill=#00ff0c /><rect x=1372 y=302 fill=#00ff09 /><rect x=1380 y=302 fill=#00ff07 /><rect x=1388 y=302 fill=#00ff05 /><rect x=1396 y=302 fill=#00ff02 /><rect x=1404 y=302 fill=#00ff00 /><rect x=1412 y=302 fill=#00ff00 /><rect x=1420 y=302 fill=#00ff00 /><rect x=1428 y=302 fill=#00ff00 /><rect x=1436 y=302 fill=#09ff00 /><rect x=1444 y=302 fill=#14ff00 /><rect x=1452 y=302 fill=#1eff00 /><rect x=1460 y=302 fill=#29ff00 /><rect x=1468 y=302 fill=#34ff00 /><rect x=1476 y=302 fill=#3fff00 /><rect x=1484 y=302 fill=#4aff00 /><rect x=1492 y=302 fill=#56ff00 /><rect x=1500 y=302 fill=#62ff00 /><rect x=1508 y=302 fill=#6eff00 /><rect x=1516 y=302 fill=#7bff00 /><rect x=1524 y=302 fill=#87ff00 /><rect x=1148 y=310 fill=#00ff42 /><rect x=1156 y=310 fill=#00ff40 /><rect x=1164 y=310 fill=#00ff3f /><rect x=1172 y=310 fill=#00ff3d /><rect x=1180 y=310 fill=#00ff3c /><rect x=1188 y=310 fill=#00ff3a /><rect x=1196 y=310 fill=#00ff39 /><rect x=1204 y=310 fill=#00ff37 /><rect x=1212 y=310 fill=#00ff35 /><rect x=1220 y=310 fill=#00ff34 /><rect x=1228 y=310 fill=#00ff32 /><rect x=1236 y=310 fill=#00ff30 /><rect x=1244 y=310 fill=#00ff2e /><rect x=1252 y=310 fill=#00ff2d /><rect x=1260 y=310 fill=#00ff2b /><rect x=1268 y=310 fill=#00ff29 /><rect x=1276 y=310 fill=#00ff27 /><rect x=1284 y=310 fill=#00ff25 /><rect x=1292 y=310 fill=#00ff23 /><rect x=1300 y=310 fill=#00ff21 /><rect x=1308 y=310 fill=#00ff1f /><rect x=1316 y=310 fill=#00ff1d /><rect x=1324 y=310 fill=#00ff1b /><rect x=1332 y=310 fill=#00ff19 /><rect x=1340 y=310 fill=#00ff17 /><rect x=1348 y=310 fill=#00ff14 /><rect x=1356 y=310 fill=#00ff12 /><rect x=1364 y=310 fill=#00ff10 /><rect x=1372 y=310 fill=#00ff0d /><rect x=1380 y=310 fill=#00ff0b /><rect x=1388 y=310 fill=#00ff09 /><rect x=1396 y=310 fill=#00ff06 /><rect x=1404 y=310 fill=#00ff03 /><rect x=1412 y=310 fill=#00ff01 /><rect x=1420 y=310 fill=#00ff00 /><rect x=1428 y=310 fill=#03ff00 /><rect x=1436 y=310 fill=#0dff00 /><rect x=1444 y=310 fill=#17ff00 /><rect x=1452 y=310 fill=#22ff00 /><rect x=1460 y=310 fill=#2dff00 /><rect x=1468 y=310 fill=#38ff00 /><rect x=1476 y=310 fill=#44ff00 /><rect x=1484 y=310 fill=#50ff00 /><rect x=1492 y=310 fill=#5cff00 /><rect x=1500 y=310 fill=#68ff00 /><rect x=1508 y=310 fill=#75ff00 /><rect x=1516 y=310 fill=#81ff00 /><rect x=1524 y=310 fill=#8fff00 /><rect x=1532 y=310 fill=#9cff00 /><rect x=1148 y=318 fill=#00ff46 /><rect x=1156 y=318 fill=#00ff44 /><rect x=1164 y=318 fill=#00ff43 /><rect x=1172 y=318 fill=#00ff41 /><rect x=1180 y=318 fill=#00ff40 /><rect x=1188 y=318 fill=#00ff3e /><rect x=1196 y=318 fill=#00ff3d /><rect x=1204 y=318 fill=#00ff3b /><rect x=1212 y=318 fill=#00ff39 /><rect x=1220 y=318 fill=#00ff38 /><rect x=1228 y=318 fill=#00ff36 /><rect x=1236 y=318 fill=#00ff34 /><rect x=1244 y=318 fill=#00ff33 /><rect x=1252 y=318 fill=#00ff31 /><rect x=1260 y=318 fill=#00ff2f /><rect x=1268 y=318 fill=#00ff2d /><rect x=1276 y=318 fill=#00ff2b /><rect x=1284 y=318 fill=#00ff29 /><rect x=1292 y=318 fill=#00ff27 /><rect x=1300 y=318 fill=#00ff25 /><rect x=1308 y=318 fill=#00ff23 /><rect x=1316 y=318 fill=#00ff21 /><rect x=1324 y=318 fill=#00ff1f /><rect x=1332 y=318 fill=#00ff1d /><rect x=1340 y=318 fill=#00ff1b /><rect x=1348 y=318 fill=#00ff19 /><rect x=1356 y=318 fill=#00ff16 /><rect x=1364 y=318 fill=#00ff14 /><rect x=1372 y=318 fill=#00ff12 /><rect x=1380 y=318 fill=#00ff0f /><rect x=1388 y=318 fill=#00ff0d /><rect x=1396 y=318 fill=#00ff0a /><rect x=1404 y=318 fill=#00ff08 /><rect x=1412 y=318 fill=#00ff05 /><rect x=1420 y=318 fill=#00ff02 /><rect x=1428 y=318 fill=#06ff00 /><rect x=1436 y=318 fill=#11ff00 /><rect x=1444 y=318 fill=#1bff00 /><rect x=1452 y=318 fill=#27ff00 /><rect x=1460 y=318 fill=#32ff00 /><rect x=1468 y=318 fill=#3dff00 /><rect x=1476 y=318 fill=#49ff00 /><rect x=1484 y=318 fill=#55ff00 /><rect x=1492 y=318 fill=#62ff00 /><rect x=1500 y=318 fill=#6eff00 /><rect x=1508 y=318 fill=#7bff00 /><rect x=1516 y=318 fill=#89ff00 /><rect x=1524 y=318 fill=#96ff00 /><rect x=1532 y=318 fill=#a5ff00 /><rect x=1540 y=318 fill=#b3ff00 /><rect x=1148 y=326 fill=#00ff4a /><rect x=1156 y=326 fill=#00ff49 /><rect x=1164 y=326 fill=#00ff47 /><rect x=1172 y=326 fill=#00ff46 /><rect x=1180 y=326 fill=#00ff44 /><rect x=1188 y=326 fill=#00ff43 /><rect x=1196 y=326 fill=#00ff41 /><rect x=1204 y=326 fill=#00ff3f /><rect x=1212 y=326 fill=#00ff3e /><rect x=1220 y=326 fill=#00ff3c /><rect x=1228 y=326 fill=#00ff3a /><rect x=1236 y=326 fill=#00ff39 /><rect x=1244 y=326 fill=#00ff37 /><rect x=1252 y=326 fill=#00ff35 /><rect x=1260 y=326 fill=#00ff33 /><rect x=1268 y=326 fill=#00ff31 /><rect x=1276 y=326 fill=#00ff30 /><rect x=1284 y=326 fill=#00ff2e /><rect x=1292 y=326 fill=#00ff2c /><rect x=1300 y=326 fill=#00ff2a /><rect x=1308 y=326 fill=#00ff28 /><rect x=1316 y=326 fill=#00ff26 /><rect x=1324 y=326 fill=#00ff23 /><rect x=1332 y=326 fill=#00ff21 /><rect x=1340 y=326 fill=#00ff1f /><rect x=1348 y=326 fill=#00ff1d /><rect x=1356 y=326 fill=#00ff1b /><rect x=1364 y=326 fill=#00ff18 /><rect x=1372 y=326 fill=#00ff16 /><rect x=1380 y=326 fill=#00ff13 /><rect x=1388 y=326 fill=#00ff11 /><rect x=1396 y=326 fill=#00ff0e /><rect x=1404 y=326 fill=#00ff0c /><rect x=1412 y=326 fill=#00ff09 /><rect x=1420 y=326 fill=#00ff06 /><rect x=1428 y=326 fill=#0aff04 /><rect x=1436 y=326 fill=#15ff01 /><rect x=1444 y=326 fill=#20ff00 /><rect x=1452 y=326 fill=#2bff00 /><rect x=1460 y=326 fill=#37ff00 /><rect x=1468 y=326 fill=#43ff00 /><rect x=1476 y=326 fill=#4fff00 /><rect x=1484 y=326 fill=#5bff00 /><rect x=1492 y=326 fill=#68ff00 /><rect x=1500 y=326 fill=#75ff00 /><rect x=1508 y=326 fill=#83ff00 /><rect x=1516 y=326 fill=#91ff00 /><rect x=1524 y=326 fill=#9fff00 /><rect x=1532 y=326 fill=#adff00 /><rect x=1540 y=326 fill=#bcff00 /><rect x=1548 y=326 fill=#ccff00 /><rect x=1148 y=334 fill=#00ff4e /><rect x=1156 y=334 fill=#00ff4d /><rect x=1164 y=334 fill=#00ff4c /><rect x=1172 y=334 fill=#00ff4a /><rect x=1180 y=334 fill=#00ff49 /><rect x=1188 y=334 fill=#00ff47 /><rect x=1196 y=334 fill=#00ff45 /><rect x=1204 y=334 fill=#00ff44 /><rect x=1212 y=334 fill=#00ff42 /><rect x=1220 y=334 fill=#00ff41 /><rect x=1228 y=334 fill=#00ff3f /><rect x=1236 y=334 fill=#00ff3d /><rect x=1244 y=334 fill=#00ff3b /><rect x=1252 y=334 fill=#00ff3a /><rect x=1260 y=334 fill=#00ff38 /><rect x=1268 y=334 fill=#00ff36 /><rect x=1276 y=334 fill=#00ff34 /><rect x=1284 y=334 fill=#00ff32 /><rect x=1292 y=334 fill=#00ff30 /><rect x=1300 y=334 fill=#00ff2e /><rect x=1308 y=334 fill=#00ff2c /><rect x=1316 y=334 fill=#00ff2a /><rect x=1324 y=334 fill=#00ff28 /><rect x=1332 y=334 fill=#00ff26 /><rect x=1340 y=334 fill=#00ff24 /><rect x=1348 y=334 fill=#00ff21 /><rect x=1356 y=334 fill=#00ff1f /><rect x=1364 y=334 fill=#00ff1d /><rect x=1372 y=334 fill=#00ff1a /><rect x=1380 y=334 fill=#00ff18 /><rect x=1388 y=334 fill=#00ff15 /><rect x=1396 y=334 fill=#00ff13 /><rect x=1404 y=334 fill=#00ff10 /><rect x=1412 y=334 fill=#00ff0e /><rect x=1420 y=334 fill=#03ff0b /><rect x=1428 y=334 fill=#0eff08 /><rect x=1436 y=334 fill=#19ff05 /><rect x=1444 y=334 fill=#24ff02 /><rect x=1452 y=334 fill=#30ff00 /><rect x=1460 y=334 fill=#3cff00 /><rect x=1468 y=334 fill=#48ff00 /><rect x=1476 y=334 fill=#55ff00 /><rect x=1484 y=334 fill=#62ff00 /><rect x=1492 y=334 fill=#6fff00 /><rect x=1500 y=334 fill=#7cff00 /><rect x=1508 y=334 fill=#8aff00 /><rect x=1516 y=334 fill=#99ff00 /><rect x=1524 y=334 fill=#a7ff00 /><rect x=1532 y=334 fill=#b6ff00 /><rect x=1540 y=334 fill=#c6ff00 /><rect x=1548 y=334 fill=#d6ff00 /><rect x=1556 y=334 fill=#e6ff00 /><rect x=1564 y=334 fill=#f7ff00 /><rect x=1148 y=342 fill=#00ff53 /><rect x=1156 y=342 fill=#00ff52 /><rect x=1164 y=342 fill=#00ff50 /><rect x=1172 y=342 fill=#00ff4f /><rect x=1180 y=342 fill=#00ff4d /><rect x=1188 y=342 fill=#00ff4c /><rect x=1196 y=342 fill=#00ff4a /><rect x=1204 y=342 fill=#00ff48 /><rect x=1212 y=342 fill=#00ff47 /><rect x=1220 y=342 fill=#00ff45 /><rect x=1228 y=342 fill=#00ff44 /><rect x=1236 y=342 fill=#00ff42 /><rect x=1244 y=342 fill=#00ff40 /><rect x=1252 y=342 fill=#00ff3e /><rect x=1260 y=342 fill=#00ff3c /><rect x=1268 y=342 fill=#00ff3b /><rect x=1276 y=342 fill=#00ff39 /><rect x=1284 y=342 fill=#00ff37 /><rect x=1292 y=342 fill=#00ff35 /><rect x=1300 y=342 fill=#00ff33 /><rect x=1308 y=342 fill=#00ff31 /><rect x=1316 y=342 fill=#00ff2f /><rect x=1324 y=342 fill=#00ff2d /><rect x=1332 y=342 fill=#00ff2b /><rect x=1340 y=342 fill=#00ff28 /><rect x=1348 y=342 fill=#00ff26 /><rect x=1356 y=342 fill=#00ff24 /><rect x=1364 y=342 fill=#00ff21 /><rect x=1372 y=342 fill=#00ff1f /><rect x=1380 y=342 fill=#00ff1d /><rect x=1388 y=342 fill=#00ff1a /><rect x=1396 y=342 fill=#00ff18 /><rect x=1404 y=342 fill=#00ff15 /><rect x=1412 y=342 fill=#00ff12 /><rect x=1420 y=342 fill=#06ff10 /><rect x=1428 y=342 fill=#12ff0d /><rect x=1436 y=342 fill=#1dff0a /><rect x=1444 y=342 fill=#29ff07 /><rect x=1452 y=342 fill=#35ff04 /><rect x=1460 y=342 fill=#41ff01 /><rect x=1468 y=342 fill=#4eff00 /><rect x=1476 y=342 fill=#5bff00 /><rect x=1484 y=342 fill=#68ff00 /><rect x=1492 y=342 fill=#76ff00 /><rect x=1500 y=342 fill=#84ff00 /><rect x=1508 y=342 fill=#93ff00 /><rect x=1516 y=342 fill=#a1ff00 /><rect x=1524 y=342 fill=#b1ff00 /><rect x=1532 y=342 fill=#c0ff00 /><rect x=1540 y=342 fill=#d0ff00 /><rect x=1548 y=342 fill=#e1ff00 /><rect x=1556 y=342 fill=#f2ff00 /><rect x=1564 y=342 fill=#fffa00 /><rect x=1572 y=342 fill=#ffea00 /><rect x=1148 y=350 fill=#00ff58 /><rect x=1156 y=350 fill=#00ff56 /><rect x=1164 y=350 fill=#00ff55 /><rect x=1172 y=350 fill=#00ff53 /><rect x=1180 y=350 fill=#00ff52 /><rect x=1188 y=350 fill=#00ff50 /><rect x=1196 y=350 fill=#00ff4f /><rect x=1204 y=350 fill=#00ff4d /><rect x=1212 y=350 fill=#00ff4c /><rect x=1220 y=350 fill=#00ff4a /><rect x=1228 y=350 fill=#00ff48 /><rect x=1236 y=350 fill=#00ff47 /><rect x=1244 y=350 fill=#00ff45 /><rect x=1252 y=350 fill=#00ff43 /><rect x=1260 y=350 fill=#00ff41 /><rect x=1268 y=350 fill=#00ff40 /><rect x=1276 y=350 fill=#00ff3e /><rect x=1284 y=350 fill=#00ff3c /><rect x=1292 y=350 fill=#00ff3a /><rect x=1300 y=350 fill=#00ff38 /><rect x=1308 y=350 fill=#00ff36 /><rect x=1316 y=350 fill=#00ff34 /><rect x=1324 y=350 fill=#00ff32 /><rect x=1332 y=350 fill=#00ff2f /><rect x=1340 y=350 fill=#00ff2d /><rect x=1348 y=350 fill=#00ff2b /><rect x=1356 y=350 fill=#00ff29 /><rect x=1364 y=350 fill=#00ff26 /><rect x=1372 y=350 fill=#00ff24 /><rect x=1380 y=350 fill=#00ff22 /><rect x=1388 y=350 fill=#00ff1f /><rect x=1396 y=350 fill=#00ff1c /><rect x=1404 y=350 fill=#00ff1a /><rect x=1412 y=350 fill=#00ff17 /><rect x=1420 y=350 fill=#0aff14 /><rect x=1428 y=350 fill=#16ff12 /><rect x=1436 y=350 fill=#22ff0f /><rect x=1444 y=350 fill=#2eff0c /><rect x=1452 y=350 fill=#3aff09 /><rect x=1460 y=350 fill=#47ff06 /><rect x=1468 y=350 fill=#54ff02 /><rect x=1476 y=350 fill=#62ff00 /><rect x=1484 y=350 fill=#6fff00 /><rect x=1492 y=350 fill=#7eff00 /><rect x=1500 y=350 fill=#8cff00 /><rect x=1508 y=350 fill=#9bff00 /><rect x=1516 y=350 fill=#abff00 /><rect x=1524 y=350 fill=#baff00 /><rect x=1532 y=350 fill=#cbff00 /><rect x=1540 y=350 fill=#dbff00 /><rect x=1548 y=350 fill=#edff00 /><rect x=1556 y=350 fill=#feff00 /><rect x=1564 y=350 fill=#ffee00 /><rect x=1572 y=350 fill=#ffdf00 /><rect x=1580 y=350 fill=#ffd100 /><rect x=1148 y=358 fill=#00ff5d /><rect x=1156 y=358 fill=#00ff5b /><rect x=1164 y=358 fill=#00ff5a /><rect x=1172 y=358 fill=#00ff58 /><rect x=1180 y=358 fill=#00ff57 /><rect x=1188 y=358 fill=#00ff55 /><rect x=1196 y=358 fill=#00ff54 /><rect x=1204 y=358 fill=#00ff52 /><rect x=1212 y=358 fill=#00ff51 /><rect x=1220 y=358 fill=#00ff4f /><rect x=1228 y=358 fill=#00ff4d /><rect x=1236 y=358 fill=#00ff4c /><rect x=1244 y=358 fill=#00ff4a /><rect x=1252 y=358 fill=#00ff48 /><rect x=1260 y=358 fill=#00ff46 /><rect x=1268 y=358 fill=#00ff45 /><rect x=1276 y=358 fill=#00ff43 /><rect x=1284 y=358 fill=#00ff41 /><rect x=1292 y=358 fill=#00ff3f /><rect x=1300 y=358 fill=#00ff3d /><rect x=1308 y=358 fill=#00ff3b /><rect x=1316 y=358 fill=#00ff39 /><rect x=1324 y=358 fill=#00ff37 /><rect x=1332 y=358 fill=#00ff35 /><rect x=1340 y=358 fill=#00ff32 /><rect x=1348 y=358 fill=#00ff30 /><rect x=1356 y=358 fill=#00ff2e /><rect x=1364 y=358 fill=#00ff2c /><rect x=1372 y=358 fill=#00ff29 /><rect x=1380 y=358 fill=#00ff27 /><rect x=1388 y=358 fill=#00ff24 /><rect x=1396 y=358 fill=#00ff22 /><rect x=1404 y=358 fill=#00ff1f /><rect x=1412 y=358 fill=#03ff1c /><rect x=1420 y=358 fill=#0eff1a /><rect x=1428 y=358 fill=#1aff17 /><rect x=1436 y=358 fill=#26ff14 /><rect x=1444 y=358 fill=#33ff11 /><rect x=1452 y=358 fill=#40ff0e /><rect x=1460 y=358 fill=#4dff0b /><rect x=1468 y=358 fill=#5bff07 /><rect x=1476 y=358 fill=#69ff04 /><rect x=1484 y=358 fill=#77ff01 /><rect x=1492 y=358 fill=#86ff00 /><rect x=1500 y=358 fill=#95ff00 /><rect x=1508 y=358 fill=#a4ff00 /><rect x=1516 y=358 fill=#b4ff00 /><rect x=1524 y=358 fill=#c5ff00 /><rect x=1532 y=358 fill=#d6ff00 /><rect x=1540 y=358 fill=#e7ff00 /><rect x=1548 y=358 fill=#f9ff00 /><rect x=1556 y=358 fill=#fff300 /><rect x=1564 y=358 fill=#ffe300 /><rect x=1572 y=358 fill=#ffd400 /><rect x=1580 y=358 fill=#ffc700 /><rect x=1588 y=358 fill=#ffbb00 /><rect x=1156 y=366 fill=#00ff60 /><rect x=1164 y=366 fill=#00ff5f /><rect x=1172 y=366 fill=#00ff5d /><rect x=1180 y=366 fill=#00ff5c /><rect x=1188 y=366 fill=#00ff5a /><rect x=1196 y=366 fill=#00ff59 /><rect x=1204 y=366 fill=#00ff57 /><rect x=1212 y=366 fill=#00ff56 /><rect x=1220 y=366 fill=#00ff54 /><rect x=1228 y=366 fill=#00ff53 /><rect x=1236 y=366 fill=#00ff51 /><rect x=1244 y=366 fill=#00ff4f /><rect x=1252 y=366 fill=#00ff4e /><rect x=1260 y=366 fill=#00ff4c /><rect x=1268 y=366 fill=#00ff4a /><rect x=1276 y=366 fill=#00ff48 /><rect x=1284 y=366 fill=#00ff46 /><rect x=1292 y=366 fill=#00ff44 /><rect x=1300 y=366 fill=#00ff42 /><rect x=1308 y=366 fill=#00ff40 /><rect x=1316 y=366 fill=#00ff3e /><rect x=1324 y=366 fill=#00ff3c /><rect x=1332 y=366 fill=#00ff3a /><rect x=1340 y=366 fill=#00ff38 /><rect x=1348 y=366 fill=#00ff36 /><rect x=1356 y=366 fill=#00ff33 /><rect x=1364 y=366 fill=#00ff31 /><rect x=1372 y=366 fill=#00ff2f /><rect x=1380 y=366 fill=#00ff2c /><rect x=1388 y=366 fill=#00ff2a /><rect x=1396 y=366 fill=#00ff27 /><rect x=1404 y=366 fill=#00ff24 /><rect x=1412 y=366 fill=#07ff22 /><rect x=1420 y=366 fill=#13ff1f /><rect x=1428 y=366 fill=#1fff1c /><rect x=1436 y=366 fill=#2bff19 /><rect x=1444 y=366 fill=#38ff16 /><rect x=1452 y=366 fill=#46ff13 /><rect x=1460 y=366 fill=#53ff10 /><rect x=1468 y=366 fill=#62ff0d /><rect x=1476 y=366 fill=#70ff09 /><rect x=1484 y=366 fill=#7fff06 /><rect x=1492 y=366 fill=#8eff03 /><rect x=1500 y=366 fill=#9eff00 /><rect x=1508 y=366 fill=#aeff00 /><rect x=1516 y=366 fill=#bfff00 /><rect x=1524 y=366 fill=#d0ff00 /><rect x=1532 y=366 fill=#e1ff00 /><rect x=1540 y=366 fill=#f4ff00 /><rect x=1548 y=366 fill=#fff800 /><rect x=1556 y=366 fill=#ffe700 /><rect x=1564 y=366 fill=#ffd700 /><rect x=1572 y=366 fill=#ffc900 /><rect x=1580 y=366 fill=#ffbd00 /><rect x=1588 y=366 fill=#ffb100 /><rect x=1596 y=366 fill=#ffa700 /><rect x=1156 y=374 fill=#00ff66 /><rect x=1164 y=374 fill=#00ff64 /><rect x=1172 y=374 fill=#00ff63 /><rect x=1180 y=374 fill=#00ff61 /><rect x=1188 y=374 fill=#00ff60 /><rect x=1196 y=374 fill=#00ff5e /><rect x=1204 y=374 fill=#00ff5d /><rect x=1212 y=374 fill=#00ff5b /><rect x=1220 y=374 fill=#00ff5a /><rect x=1228 y=374 fill=#00ff58 /><rect x=1236 y=374 fill=#00ff56 /><rect x=1244 y=374 fill=#00ff55 /><rect x=1252 y=374 fill=#00ff53 /><rect x=1260 y=374 fill=#00ff51 /><rect x=1268 y=374 fill=#00ff50 /><rect x=1276 y=374 fill=#00ff4e /><rect x=1284 y=374 fill=#00ff4c /><rect x=1292 y=374 fill=#00ff4a /><rect x=1300 y=374 fill=#00ff48 /><rect x=1308 y=374 fill=#00ff46 /><rect x=1316 y=374 fill=#00ff44 /><rect x=1324 y=374 fill=#00ff42 /><rect x=1332 y=374 fill=#00ff40 /><rect x=1340 y=374 fill=#00ff3e /><rect x=1348 y=374 fill=#00ff3b /><rect x=1356 y=374 fill=#00ff39 /><rect x=1364 y=374 fill=#00ff37 /><rect x=1372 y=374 fill=#00ff34 /><rect x=1380 y=374 fill=#00ff32 /><rect x=1388 y=374 fill=#00ff2f /><rect x=1396 y=374 fill=#00ff2d /><rect x=1404 y=374 fill=#00ff2a /><rect x=1412 y=374 fill=#0bff28 /><rect x=1420 y=374 fill=#17ff25 /><rect x=1428 y=374 fill=#24ff22 /><rect x=1436 y=374 fill=#31ff1f /><rect x=1444 y=374 fill=#3eff1c /><rect x=1452 y=374 fill=#4cff19 /><rect x=1460 y=374 fill=#5aff16 /><rect x=1468 y=374 fill=#69ff12 /><rect x=1476 y=374 fill=#78ff0f /><rect x=1484 y=374 fill=#87ff0c /><rect x=1492 y=374 fill=#97ff08 /><rect x=1500 y=374 fill=#a7ff05 /><rect x=1508 y=374 fill=#b8ff01 /><rect x=1516 y=374 fill=#caff00 /><rect x=1524 y=374 fill=#dcff00 /><rect x=1532 y=374 fill=#eeff00 /><rect x=1540 y=374 fill=#fffd00 /><rect x=1548 y=374 fill=#ffeb00 /><rect x=1556 y=374 fill=#ffdb00 /><rect x=1564 y=374 fill=#ffcc00 /><rect x=1572 y=374 fill=#ffbf00 /><rect x=1580 y=374 fill=#ffb300 /><rect x=1588 y=374 fill=#ffa800 /><rect x=1596 y=374 fill=#ff9f00 /><rect x=1604 y=374 fill=#ff9500 /><rect x=1612 y=374 fill=#ff8d00 /><rect x=1156 y=382 fill=#00ff6b /><rect x=1164 y=382 fill=#00ff6a /><rect x=1172 y=382 fill=#00ff68 /><rect x=1180 y=382 fill=#00ff67 /><rect x=1188 y=382 fill=#00ff65 /><rect x=1196 y=382 fill=#00ff64 /><rect x=1204 y=382 fill=#00ff62 /><rect x=1212 y=382 fill=#00ff61 /><rect x=1220 y=382 fill=#00ff5f /><rect x=1228 y=382 fill=#00ff5e /><rect x=1236 y=382 fill=#00ff5c /><rect x=1244 y=382 fill=#00ff5b /><rect x=1252 y=382 fill=#00ff59 /><rect x=1260 y=382 fill=#00ff57 /><rect x=1268 y=382 fill=#00ff55 /><rect x=1276 y=382 fill=#00ff54 /><rect x=1284 y=382 fill=#00ff52 /><rect x=1292 y=382 fill=#00ff50 /><rect x=1300 y=382 fill=#00ff4e /><rect x=1308 y=382 fill=#00ff4c /><rect x=1316 y=382 fill=#00ff4a /><rect x=1324 y=382 fill=#00ff48 /><rect x=1332 y=382 fill=#00ff46 /><rect x=1340 y=382 fill=#00ff44 /><rect x=1348 y=382 fill=#00ff41 /><rect x=1356 y=382 fill=#00ff3f /><rect x=1364 y=382 fill=#00ff3d /><rect x=1372 y=382 fill=#00ff3a /><rect x=1380 y=382 fill=#00ff38 /><rect x=1388 y=382 fill=#00ff35 /><rect x=1396 y=382 fill=#00ff33 /><rect x=1404 y=382 fill=#03ff30 /><rect x=1412 y=382 fill=#0fff2e /><rect x=1420 y=382 fill=#1cff2b /><rect x=1428 y=382 fill=#29ff28 /><rect x=1436 y=382 fill=#37ff25 /><rect x=1444 y=382 fill=#44ff22 /><rect x=1452 y=382 fill=#53ff1f /><rect x=1460 y=382 fill=#61ff1c /><rect x=1468 y=382 fill=#71ff19 /><rect x=1476 y=382 fill=#80ff15 /><rect x=1484 y=382 fill=#90ff12 /><rect x=1492 y=382 fill=#a1ff0e /><rect x=1500 y=382 fill=#b2ff0a /><rect x=1508 y=382 fill=#c3ff07 /><rect x=1516 y=382 fill=#d5ff03 /><rect x=1524 y=382 fill=#e8ff00 /><rect x=1532 y=382 fill=#fcff00 /><rect x=1540 y=382 fill=#ffef00 /><rect x=1548 y=382 fill=#ffdf00 /><rect x=1556 y=382 fill=#ffcf00 /><rect x=1564 y=382 fill=#ffc200 /><rect x=1572 y=382 fill=#ffb500 /><rect x=1580 y=382 fill=#ffaa00 /><rect x=1588 y=382 fill=#ffa000 /><rect x=1596 y=382 fill=#ff9600 /><rect x=1604 y=382 fill=#ff8e00 /><rect x=1612 y=382 fill=#ff8600 /><rect x=1620 y=382 fill=#ff7e00 /><rect x=1156 y=390 fill=#00ff71 /><rect x=1164 y=390 fill=#00ff6f /><rect x=1172 y=390 fill=#00ff6e /><rect x=1180 y=390 fill=#00ff6d /><rect x=1188 y=390 fill=#00ff6b /><rect x=1196 y=390 fill=#00ff6a /><rect x=1204 y=390 fill=#00ff68 /><rect x=1212 y=390 fill=#00ff67 /><rect x=1220 y=390 fill=#00ff65 /><rect x=1228 y=390 fill=#00ff64 /><rect x=1236 y=390 fill=#00ff62 /><rect x=1244 y=390 fill=#00ff61 /><rect x=1252 y=390 fill=#00ff5f /><rect x=1260 y=390 fill=#00ff5d /><rect x=1268 y=390 fill=#00ff5b /><rect x=1276 y=390 fill=#00ff5a /><rect x=1284 y=390 fill=#00ff58 /><rect x=1292 y=390 fill=#00ff56 /><rect x=1300 y=390 fill=#00ff54 /><rect x=1308 y=390 fill=#00ff52 /><rect x=1316 y=390 fill=#00ff50 /><rect x=1324 y=390 fill=#00ff4e /><rect x=1332 y=390 fill=#00ff4c /><rect x=1340 y=390 fill=#00ff4a /><rect x=1348 y=390 fill=#00ff48 /><rect x=1356 y=390 fill=#00ff45 /><rect x=1364 y=390 fill=#00ff43 /><rect x=1372 y=390 fill=#00ff41 /><rect x=1380 y=390 fill=#00ff3e /><rect x=1388 y=390 fill=#00ff3c /><rect x=1396 y=390 fill=#00ff39 /><rect x=1404 y=390 fill=#07ff37 /><rect x=1412 y=390 fill=#14ff34 /><rect x=1420 y=390 fill=#21ff31 /><rect x=1428 y=390 fill=#2fff2e /><rect x=1436 y=390 fill=#3dff2b /><rect x=1444 y=390 fill=#4bff28 /><rect x=1452 y=390 fill=#5aff25 /><rect x=1460 y=390 fill=#69ff22 /><rect x=1468 y=390 fill=#79ff1f /><rect x=1476 y=390 fill=#89ff1c /><rect x=1484 y=390 fill=#9aff18 /><rect x=1492 y=390 fill=#abff14 /><rect x=1500 y=390 fill=#bdff11 /><rect x=1508 y=390 fill=#cfff0d /><rect x=1516 y=390 fill=#e2ff09 /><rect x=1524 y=390 fill=#f6ff05 /><rect x=1532 y=390 fill=#fff401 /><rect x=1540 y=390 fill=#ffe300 /><rect x=1548 y=390 fill=#ffd300 /><rect x=1556 y=390 fill=#ffc400 /><rect x=1564 y=390 fill=#ffb700 /><rect x=1572 y=390 fill=#ffac00 /><rect x=1580 y=390 fill=#ffa100 /><rect x=1588 y=390 fill=#ff9700 /><rect x=1596 y=390 fill=#ff8e00 /><rect x=1604 y=390 fill=#ff8600 /><rect x=1612 y=390 fill=#ff7e00 /><rect x=1620 y=390 fill=#ff7700 /><rect x=1628 y=390 fill=#ff7100 /><rect x=1156 y=398 fill=#00ff77 /><rect x=1164 y=398 fill=#00ff75 /><rect x=1172 y=398 fill=#00ff74 /><rect x=1180 y=398 fill=#00ff73 /><rect x=1188 y=398 fill=#00ff71 /><rect x=1196 y=398 fill=#00ff70 /><rect x=1204 y=398 fill=#00ff6f /><rect x=1212 y=398 fill=#00ff6d /><rect x=1220 y=398 fill=#00ff6c /><rect x=1228 y=398 fill=#00ff6a /><rect x=1236 y=398 fill=#00ff68 /><rect x=1244 y=398 fill=#00ff67 /><rect x=1252 y=398 fill=#00ff65 /><rect x=1260 y=398 fill=#00ff64 /><rect x=1268 y=398 fill=#00ff62 /><rect x=1276 y=398 fill=#00ff60 /><rect x=1284 y=398 fill=#00ff5e /><rect x=1292 y=398 fill=#00ff5c /><rect x=1300 y=398 fill=#00ff5b /><rect x=1308 y=398 fill=#00ff59 /><rect x=1316 y=398 fill=#00ff57 /><rect x=1324 y=398 fill=#00ff55 /><rect x=1332 y=398 fill=#00ff53 /><rect x=1340 y=398 fill=#00ff50 /><rect x=1348 y=398 fill=#00ff4e /><rect x=1356 y=398 fill=#00ff4c /><rect x=1364 y=398 fill=#00ff4a /><rect x=1372 y=398 fill=#00ff47 /><rect x=1380 y=398 fill=#00ff45 /><rect x=1388 y=398 fill=#00ff43 /><rect x=1396 y=398 fill=#00ff40 /><rect x=1404 y=398 fill=#0bff3d /><rect x=1412 y=398 fill=#19ff3b /><rect x=1420 y=398 fill=#26ff38 /><rect x=1428 y=398 fill=#34ff35 /><rect x=1436 y=398 fill=#43ff32 /><rect x=1444 y=398 fill=#52ff2f /><rect x=1452 y=398 fill=#61ff2c /><rect x=1460 y=398 fill=#71ff29 /><rect x=1468 y=398 fill=#82ff26 /><rect x=1476 y=398 fill=#93ff22 /><rect x=1484 y=398 fill=#a4ff1f /><rect x=1492 y=398 fill=#b6ff1b /><rect x=1500 y=398 fill=#c9ff18 /><rect x=1508 y=398 fill=#dcff14 /><rect x=1516 y=398 fill=#f0ff10 /><rect x=1524 y=398 fill=#fffa0b /><rect x=1532 y=398 fill=#ffe707 /><rect x=1540 y=398 fill=#ffd602 /><rect x=1548 y=398 fill=#ffc700 /><rect x=1556 y=398 fill=#ffba00 /><rect x=1564 y=398 fill=#ffad00 /><rect x=1572 y=398 fill=#ffa200 /><rect x=1580 y=398 fill=#ff9800 /><rect x=1588 y=398 fill=#ff8f00 /><rect x=1596 y=398 fill=#ff8600 /><rect x=1604 y=398 fill=#ff7f00 /><rect x=1612 y=398 fill=#ff7700 /><rect x=1620 y=398 fill=#ff7100 /><rect x=1628 y=398 fill=#ff6a00 /><rect x=1636 y=398 fill=#ff6400 /><rect x=1156 y=406 fill=#00ff7d /><rect x=1164 y=406 fill=#00ff7c /><rect x=1172 y=406 fill=#00ff7a /><rect x=1180 y=406 fill=#00ff79 /><rect x=1188 y=406 fill=#00ff78 /><rect x=1196 y=406 fill=#00ff76 /><rect x=1204 y=406 fill=#00ff75 /><rect x=1212 y=406 fill=#00ff73 /><rect x=1220 y=406 fill=#00ff72 /><rect x=1228 y=406 fill=#00ff71 /><rect x=1236 y=406 fill=#00ff6f /><rect x=1244 y=406 fill=#00ff6d /><rect x=1252 y=406 fill=#00ff6c /><rect x=1260 y=406 fill=#00ff6a /><rect x=1268 y=406 fill=#00ff68 /><rect x=1276 y=406 fill=#00ff67 /><rect x=1284 y=406 fill=#00ff65 /><rect x=1292 y=406 fill=#00ff63 /><rect x=1300 y=406 fill=#00ff61 /><rect x=1308 y=406 fill=#00ff5f /><rect x=1316 y=406 fill=#00ff5e /><rect x=1324 y=406 fill=#00ff5c /><rect x=1332 y=406 fill=#00ff5a /><rect x=1340 y=406 fill=#00ff57 /><rect x=1348 y=406 fill=#00ff55 /><rect x=1356 y=406 fill=#00ff53 /><rect x=1364 y=406 fill=#00ff51 /><rect x=1372 y=406 fill=#00ff4f /><rect x=1380 y=406 fill=#00ff4c /><rect x=1388 y=406 fill=#00ff4a /><rect x=1396 y=406 fill=#03ff47 /><rect x=1404 y=406 fill=#10ff45 /><rect x=1412 y=406 fill=#1eff42 /><rect x=1420 y=406 fill=#2cff3f /><rect x=1428 y=406 fill=#3bff3c /><rect x=1436 y=406 fill=#4aff3a /><rect x=1444 y=406 fill=#59ff37 /><rect x=1452 y=406 fill=#69ff34 /><rect x=1460 y=406 fill=#7aff30 /><rect x=1468 y=406 fill=#8bff2d /><rect x=1476 y=406 fill=#9dff2a /><rect x=1484 y=406 fill=#afff26 /><rect x=1492 y=406 fill=#c2ff23 /><rect x=1500 y=406 fill=#d5ff1f /><rect x=1508 y=406 fill=#e9ff1b /><rect x=1516 y=406 fill=#feff17 /><rect x=1524 y=406 fill=#ffec11 /><rect x=1532 y=406 fill=#ffda0c /><rect x=1540 y=406 fill=#ffca08 /><rect x=1548 y=406 fill=#ffbc04 /><rect x=1556 y=406 fill=#ffaf00 /><rect x=1564 y=406 fill=#ffa400 /><rect x=1572 y=406 fill=#ff9900 /><rect x=1580 y=406 fill=#ff9000 /><rect x=1588 y=406 fill=#ff8700 /><rect x=1596 y=406 fill=#ff7f00 /><rect x=1604 y=406 fill=#ff7700 /><rect x=1612 y=406 fill=#ff7000 /><rect x=1620 y=406 fill=#ff6a00 /><rect x=1628 y=406 fill=#ff6400 /><rect x=1636 y=406 fill=#ff5e00 /><rect x=1644 y=406 fill=#ff5900 /><rect x=1156 y=414 fill=#00ff83 /><rect x=1164 y=414 fill=#00ff82 /><rect x=1172 y=414 fill=#00ff81 /><rect x=1180 y=414 fill=#00ff80 /><rect x=1188 y=414 fill=#00ff7e /><rect x=1196 y=414 fill=#00ff7d /><rect x=1204 y=414 fill=#00ff7c /><rect x=1212 y=414 fill=#00ff7a /><rect x=1220 y=414 fill=#00ff79 /><rect x=1228 y=414 fill=#00ff77 /><rect x=1236 y=414 fill=#00ff76 /><rect x=1244 y=414 fill=#00ff74 /><rect x=1252 y=414 fill=#00ff73 /><rect x=1260 y=414 fill=#00ff71 /><rect x=1268 y=414 fill=#00ff70 /><rect x=1276 y=414 fill=#00ff6e /><rect x=1284 y=414 fill=#00ff6c /><rect x=1292 y=414 fill=#00ff6a /><rect x=1300 y=414 fill=#00ff69 /><rect x=1308 y=414 fill=#00ff67 /><rect x=1316 y=414 fill=#00ff65 /><rect x=1324 y=414 fill=#00ff63 /><rect x=1332 y=414 fill=#00ff61 /><rect x=1340 y=414 fill=#00ff5f /><rect x=1348 y=414 fill=#00ff5d /><rect x=1356 y=414 fill=#00ff5b /><rect x=1364 y=414 fill=#00ff58 /><rect x=1372 y=414 fill=#00ff56 /><rect x=1380 y=414 fill=#00ff54 /><rect x=1388 y=414 fill=#00ff51 /><rect x=1396 y=414 fill=#07ff4f /><rect x=1404 y=414 fill=#15ff4c /><rect x=1412 y=414 fill=#23ff4a /><rect x=1420 y=414 fill=#32ff47 /><rect x=1428 y=414 fill=#41ff44 /><rect x=1436 y=414 fill=#51ff41 /><rect x=1444 y=414 fill=#61ff3e /><rect x=1452 y=414 fill=#72ff3b /><rect x=1460 y=414 fill=#83ff38 /><rect x=1468 y=414 fill=#95ff35 /><rect x=1476 y=414 fill=#a8ff32 /><rect x=1484 y=414 fill=#bbff2e /><rect x=1492 y=414 fill=#ceff2a /><rect x=1500 y=414 fill=#e3ff27 /><rect x=1508 y=414 fill=#f8ff23 /><rect x=1516 y=414 fill=#fff11d /><rect x=1524 y=414 fill=#ffde17 /><rect x=1532 y=414 fill=#ffce12 /><rect x=1540 y=414 fill=#ffbf0d /><rect x=1548 y=414 fill=#ffb109 /><rect x=1556 y=414 fill=#ffa505 /><rect x=1564 y=414 fill=#ff9a02 /><rect x=1572 y=414 fill=#ff9100 /><rect x=1580 y=414 fill=#ff8700 /><rect x=1588 y=414 fill=#ff7f00 /><rect x=1596 y=414 fill=#ff7700 /><rect x=1604 y=414 fill=#ff7000 /><rect x=1612 y=414 fill=#ff6a00 /><rect x=1620 y=414 fill=#ff6400 /><rect x=1628 y=414 fill=#ff5e00 /><rect x=1636 y=414 fill=#ff5900 /><rect x=1644 y=414 fill=#ff5400 /><rect x=1652 y=414 fill=#ff4f00 /><rect x=1660 y=414 fill=#ff4b00 /><rect x=1156 y=422 fill=#00ff8a /><rect x=1164 y=422 fill=#00ff89 /><rect x=1172 y=422 fill=#00ff88 /><rect x=1180 y=422 fill=#00ff87 /><rect x=1188 y=422 fill=#00ff85 /><rect x=1196 y=422 fill=#00ff84 /><rect x=1204 y=422 fill=#00ff83 /><rect x=1212 y=422 fill=#00ff81 /><rect x=1220 y=422 fill=#00ff80 /><rect x=1228 y=422 fill=#00ff7e /><rect x=1236 y=422 fill=#00ff7d /><rect x=1244 y=422 fill=#00ff7c /><rect x=1252 y=422 fill=#00ff7a /><rect x=1260 y=422 fill=#00ff78 /><rect x=1268 y=422 fill=#00ff77 /><rect x=1276 y=422 fill=#00ff75 /><rect x=1284 y=422 fill=#00ff74 /><rect x=1292 y=422 fill=#00ff72 /><rect x=1300 y=422 fill=#00ff70 /><rect x=1308 y=422 fill=#00ff6e /><rect x=1316 y=422 fill=#00ff6c /><rect x=1324 y=422 fill=#00ff6b /><rect x=1332 y=422 fill=#00ff69 /><rect x=1340 y=422 fill=#00ff67 /><rect x=1348 y=422 fill=#00ff65 /><rect x=1356 y=422 fill=#00ff62 /><rect x=1364 y=422 fill=#00ff60 /><rect x=1372 y=422 fill=#00ff5e /><rect x=1380 y=422 fill=#00ff5c /><rect x=1388 y=422 fill=#00ff59 /><rect x=1396 y=422 fill=#0cff57 /><rect x=1404 y=422 fill=#1aff54 /><rect x=1412 y=422 fill=#29ff52 /><rect x=1420 y=422 fill=#39ff4f /><rect x=1428 y=422 fill=#48ff4c /><rect x=1436 y=422 fill=#59ff4a /><rect x=1444 y=422 fill=#6aff47 /><rect x=1452 y=422 fill=#7bff44 /><rect x=1460 y=422 fill=#8dff41 /><rect x=1468 y=422 fill=#a0ff3d /><rect x=1476 y=422 fill=#b3ff3a /><rect x=1484 y=422 fill=#c7ff37 /><rect x=1492 y=422 fill=#dcff33 /><rect x=1500 y=422 fill=#f1ff2f /><rect x=1508 y=422 fill=#fff62a /><rect x=1516 y=422 fill=#ffe323 /><rect x=1524 y=422 fill=#ffd11d /><rect x=1532 y=422 fill=#ffc117 /><rect x=1540 y=422 fill=#ffb412 /><rect x=1548 y=422 fill=#ffa70e /><rect x=1556 y=422 fill=#ff9c0a /><rect x=1564 y=422 fill=#ff9107 /><rect x=1572 y=422 fill=#ff8803 /><rect x=1580 y=422 fill=#ff7f00 /><rect x=1588 y=422 fill=#ff7800 /><rect x=1596 y=422 fill=#ff7000 /><rect x=1604 y=422 fill=#ff6a00 /><rect x=1612 y=422 fill=#ff6300 /><rect x=1620 y=422 fill=#ff5d00 /><rect x=1628 y=422 fill=#ff5800 /><rect x=1636 y=422 fill=#ff5300 /><rect x=1644 y=422 fill=#ff4e00 /><rect x=1652 y=422 fill=#ff4a00 /><rect x=1660 y=422 fill=#ff4500 /><rect x=1668 y=422 fill=#ff4100 /><rect x=1164 y=430 fill=#00ff90 /><rect x=1172 y=430 fill=#00ff8f /><rect x=1180 y=430 fill=#00ff8e /><rect x=1188 y=430 fill=#00ff8d /><rect x=1196 y=430 fill=#00ff8b /><rect x=1204 y=430 fill=#00ff8a /><rect x=1212 y=430 fill=#00ff89 /><rect x=1220 y=430 fill=#00ff87 /><rect x=1228 y=430 fill=#00ff86 /><rect x=1236 y=430 fill=#00ff85 /><rect x=1244 y=430 fill=#00ff83 /><rect x=1252 y=430 fill=#00ff82 /><rect x=1260 y=430 fill=#00ff80 /><rect x=1268 y=430 fill=#00ff7f /><rect x=1276 y=430 fill=#00ff7d /><rect x=1284 y=430 fill=#00ff7b /><rect x=1292 y=430 fill=#00ff7a /><rect x=1300 y=430 fill=#00ff78 /><rect x=1308 y=430 fill=#00ff76 /><rect x=1316 y=430 fill=#00ff75 /><rect x=1324 y=430 fill=#00ff73 /><rect x=1332 y=430 fill=#00ff71 /><rect x=1340 y=430 fill=#00ff6f /><rect x=1348 y=430 fill=#00ff6d /><rect x=1356 y=430 fill=#00ff6b /><rect x=1364 y=430 fill=#00ff69 /><rect x=1372 y=430 fill=#00ff67 /><rect x=1380 y=430 fill=#00ff64 /><rect x=1388 y=430 fill=#02ff62 /><rect x=1396 y=430 fill=#11ff60 /><rect x=1404 y=430 fill=#20ff5d /><rect x=1412 y=430 fill=#30ff5b /><rect x=1420 y=430 fill=#40ff58 /><rect x=1428 y=430 fill=#50ff55 /><rect x=1436 y=430 fill=#61ff53 /><rect x=1444 y=430 fill=#73ff50 /><rect x=1452 y=430 fill=#85ff4d /><rect x=1460 y=430 fill=#98ff4a /><rect x=1468 y=430 fill=#acff46 /><rect x=1476 y=430 fill=#c0ff43 /><rect x=1484 y=430 fill=#d5ff40 /><rect x=1492 y=430 fill=#ebff3c /><rect x=1500 y=430 fill=#fffd38 /><rect x=1508 y=430 fill=#ffe730 /><rect x=1516 y=430 fill=#ffd528 /><rect x=1524 y=430 fill=#ffc422 /><rect x=1532 y=430 fill=#ffb61d /><rect x=1540 y=430 fill=#ffa917 /><rect x=1548 y=430 fill=#ff9d13 /><rect x=1556 y=430 fill=#ff920f /><rect x=1564 y=430 fill=#ff890b /><rect x=1572 y=430 fill=#ff8008 /><rect x=1580 y=430 fill=#ff7804 /><rect x=1588 y=430 fill=#ff7002 /><rect x=1596 y=430 fill=#ff6900 /><rect x=1604 y=430 fill=#ff6300 /><rect x=1612 y=430 fill=#ff5d00 /><rect x=1620 y=430 fill=#ff5700 /><rect x=1628 y=430 fill=#ff5200 /><rect x=1636 y=430 fill=#ff4d00 /><rect x=1644 y=430 fill=#ff4900 /><rect x=1652 y=430 fill=#ff4400 /><rect x=1660 y=430 fill=#ff4000 /><rect x=1668 y=430 fill=#ff3d00 /><rect x=1676 y=430 fill=#ff3900 /><rect x=1164 y=438 fill=#00ff98 /><rect x=1172 y=438 fill=#00ff96 /><rect x=1180 y=438 fill=#00ff95 /><rect x=1188 y=438 fill=#00ff94 /><rect x=1196 y=438 fill=#00ff93 /><rect x=1204 y=438 fill=#00ff92 /><rect x=1212 y=438 fill=#00ff90 /><rect x=1220 y=438 fill=#00ff8f /><rect x=1228 y=438 fill=#00ff8e /><rect x=1236 y=438 fill=#00ff8d /><rect x=1244 y=438 fill=#00ff8b /><rect x=1252 y=438 fill=#00ff8a /><rect x=1260 y=438 fill=#00ff88 /><rect x=1268 y=438 fill=#00ff87 /><rect x=1276 y=438 fill=#00ff85 /><rect x=1284 y=438 fill=#00ff84 /><rect x=1292 y=438 fill=#00ff82 /><rect x=1300 y=438 fill=#00ff81 /><rect x=1308 y=438 fill=#00ff7f /><rect x=1316 y=438 fill=#00ff7d /><rect x=1324 y=438 fill=#00ff7b /><rect x=1332 y=438 fill=#00ff7a /><rect x=1340 y=438 fill=#00ff78 /><rect x=1348 y=438 fill=#00ff76 /><rect x=1356 y=438 fill=#00ff74 /><rect x=1364 y=438 fill=#00ff72 /><rect x=1372 y=438 fill=#00ff70 /><rect x=1380 y=438 fill=#00ff6d /><rect x=1388 y=438 fill=#07ff6b /><rect x=1396 y=438 fill=#17ff69 /><rect x=1404 y=438 fill=#26ff66 /><rect x=1412 y=438 fill=#36ff64 /><rect x=1420 y=438 fill=#47ff61 /><rect x=1428 y=438 fill=#58ff5f /><rect x=1436 y=438 fill=#6aff5c /><rect x=1444 y=438 fill=#7dff59 /><rect x=1452 y=438 fill=#90ff56 /><rect x=1460 y=438 fill=#a4ff53 /><rect x=1468 y=438 fill=#b8ff50 /><rect x=1476 y=438 fill=#cdff4d /><rect x=1484 y=438 fill=#e4ff49 /><rect x=1492 y=438 fill=#fbff46 /><rect x=1500 y=438 fill=#ffed3e /><rect x=1508 y=438 fill=#ffd935 /><rect x=1516 y=438 fill=#ffc82e /><rect x=1524 y=438 fill=#ffb827 /><rect x=1532 y=438 fill=#ffab21 /><rect x=1540 y=438 fill=#ff9e1c /><rect x=1548 y=438 fill=#ff9318 /><rect x=1556 y=438 fill=#ff8913 /><rect x=1564 y=438 fill=#ff800f /><rect x=1572 y=438 fill=#ff780c /><rect x=1580 y=438 fill=#ff7009 /><rect x=1588 y=438 fill=#ff6906 /><rect x=1596 y=438 fill=#ff6203 /><rect x=1604 y=438 fill=#ff5c00 /><rect x=1612 y=438 fill=#ff5700 /><rect x=1620 y=438 fill=#ff5100 /><rect x=1628 y=438 fill=#ff4c00 /><rect x=1636 y=438 fill=#ff4800 /><rect x=1644 y=438 fill=#ff4300 /><rect x=1652 y=438 fill=#ff3f00 /><rect x=1660 y=438 fill=#ff3c00 /><rect x=1668 y=438 fill=#ff3800 /><rect x=1676 y=438 fill=#ff3500 /><rect x=1684 y=438 fill=#ff3100 /><rect x=1164 y=446 fill=#00ff9f /><rect x=1172 y=446 fill=#00ff9e /><rect x=1180 y=446 fill=#00ff9d /><rect x=1188 y=446 fill=#00ff9c /><rect x=1196 y=446 fill=#00ff9b /><rect x=1204 y=446 fill=#00ff9a /><rect x=1212 y=446 fill=#00ff99 /><rect x=1220 y=446 fill=#00ff97 /><rect x=1228 y=446 fill=#00ff96 /><rect x=1236 y=446 fill=#00ff95 /><rect x=1244 y=446 fill=#00ff94 /><rect x=1252 y=446 fill=#00ff92 /><rect x=1260 y=446 fill=#00ff91 /><rect x=1268 y=446 fill=#00ff90 /><rect x=1276 y=446 fill=#00ff8e /><rect x=1284 y=446 fill=#00ff8d /><rect x=1292 y=446 fill=#00ff8b /><rect x=1300 y=446 fill=#00ff8a /><rect x=1308 y=446 fill=#00ff88 /><rect x=1316 y=446 fill=#00ff86 /><rect x=1324 y=446 fill=#00ff85 /><rect x=1332 y=446 fill=#00ff83 /><rect x=1340 y=446 fill=#00ff81 /><rect x=1348 y=446 fill=#00ff7f /><rect x=1356 y=446 fill=#00ff7d /><rect x=1364 y=446 fill=#00ff7b /><rect x=1372 y=446 fill=#00ff79 /><rect x=1380 y=446 fill=#00ff77 /><rect x=1388 y=446 fill=#0dff75 /><rect x=1396 y=446 fill=#1cff73 /><rect x=1404 y=446 fill=#2dff70 /><rect x=1412 y=446 fill=#3eff6e /><rect x=1420 y=446 fill=#4fff6c /><rect x=1428 y=446 fill=#61ff69 /><rect x=1436 y=446 fill=#74ff66 /><rect x=1444 y=446 fill=#87ff64 /><rect x=1452 y=446 fill=#9bff61 /><rect x=1460 y=446 fill=#b0ff5e /><rect x=1468 y=446 fill=#c6ff5b /><rect x=1476 y=446 fill=#dcff58 /><rect x=1484 y=446 fill=#f4ff54 /><rect x=1492 y=446 fill=#fff34d /><rect x=1500 y=446 fill=#ffde43 /><rect x=1508 y=446 fill=#ffcb3a /><rect x=1516 y=446 fill=#ffbb33 /><rect x=1524 y=446 fill=#ffad2c /><rect x=1532 y=446 fill=#ffa026 /><rect x=1540 y=446 fill=#ff9421 /><rect x=1548 y=446 fill=#ff8a1c /><rect x=1556 y=446 fill=#ff8018 /><rect x=1564 y=446 fill=#ff7814 /><rect x=1572 y=446 fill=#ff7010 /><rect x=1580 y=446 fill=#ff690d /><rect x=1588 y=446 fill=#ff6209 /><rect x=1596 y=446 fill=#ff5c07 /><rect x=1604 y=446 fill=#ff5604 /><rect x=1612 y=446 fill=#ff5101 /><rect x=1620 y=446 fill=#ff4c00 /><rect x=1628 y=446 fill=#ff4700 /><rect x=1636 y=446 fill=#ff4200 /><rect x=1644 y=446 fill=#ff3e00 /><rect x=1652 y=446 fill=#ff3a00 /><rect x=1660 y=446 fill=#ff3700 /><rect x=1668 y=446 fill=#ff3300 /><rect x=1676 y=446 fill=#ff3000 /><rect x=1684 y=446 fill=#ff2d00 /><rect x=1692 y=446 fill=#ff2a00 /><rect x=1164 y=454 fill=#00ffa8 /><rect x=1172 y=454 fill=#00ffa7 /><rect x=1180 y=454 fill=#00ffa6 /><rect x=1188 y=454 fill=#00ffa5 /><rect x=1196 y=454 fill=#00ffa3 /><rect x=1204 y=454 fill=#00ffa2 /><rect x=1212 y=454 fill=#00ffa1 /><rect x=1220 y=454 fill=#00ffa0 /><rect x=1228 y=454 fill=#00ff9f /><rect x=1236 y=454 fill=#00ff9e /><rect x=1244 y=454 fill=#00ff9d /><rect x=1252 y=454 fill=#00ff9b /><rect x=1260 y=454 fill=#00ff9a /><rect x=1268 y=454 fill=#00ff99 /><rect x=1276 y=454 fill=#00ff97 /><rect x=1284 y=454 fill=#00ff96 /><rect x=1292 y=454 fill=#00ff94 /><rect x=1300 y=454 fill=#00ff93 /><rect x=1308 y=454 fill=#00ff91 /><rect x=1316 y=454 fill=#00ff90 /><rect x=1324 y=454 fill=#00ff8e /><rect x=1332 y=454 fill=#00ff8d /><rect x=1340 y=454 fill=#00ff8b /><rect x=1348 y=454 fill=#00ff89 /><rect x=1356 y=454 fill=#00ff87 /><rect x=1364 y=454 fill=#00ff86 /><rect x=1372 y=454 fill=#00ff84 /><rect x=1380 y=454 fill=#02ff82 /><rect x=1388 y=454 fill=#12ff7f /><rect x=1396 y=454 fill=#23ff7d /><rect x=1404 y=454 fill=#34ff7b /><rect x=1412 y=454 fill=#45ff79 /><rect x=1420 y=454 fill=#58ff76 /><rect x=1428 y=454 fill=#6bff74 /><rect x=1436 y=454 fill=#7eff71 /><rect x=1444 y=454 fill=#92ff6f /><rect x=1452 y=454 fill=#a8ff6c /><rect x=1460 y=454 fill=#beff69 /><rect x=1468 y=454 fill=#d4ff66 /><rect x=1476 y=454 fill=#ecff63 /><rect x=1484 y=454 fill=#fff95e /><rect x=1492 y=454 fill=#ffe352 /><rect x=1500 y=454 fill=#ffcf48 /><rect x=1508 y=454 fill=#ffbe40 /><rect x=1516 y=454 fill=#ffaf38 /><rect x=1524 y=454 fill=#ffa131 /><rect x=1532 y=454 fill=#ff952b /><rect x=1540 y=454 fill=#ff8b25 /><rect x=1548 y=454 fill=#ff8120 /><rect x=1556 y=454 fill=#ff781c /><rect x=1564 y=454 fill=#ff7018 /><rect x=1572 y=454 fill=#ff6814 /><rect x=1580 y=454 fill=#ff6110 /><rect x=1588 y=454 fill=#ff5b0d /><rect x=1596 y=454 fill=#ff550a /><rect x=1604 y=454 fill=#ff5007 /><rect x=1612 y=454 fill=#ff4b05 /><rect x=1620 y=454 fill=#ff4602 /><rect x=1628 y=454 fill=#ff4100 /><rect x=1636 y=454 fill=#ff3d00 /><rect x=1644 y=454 fill=#ff3900 /><rect x=1652 y=454 fill=#ff3600 /><rect x=1660 y=454 fill=#ff3200 /><rect x=1668 y=454 fill=#ff2f00 /><rect x=1676 y=454 fill=#ff2c00 /><rect x=1684 y=454 fill=#ff2900 /><rect x=1692 y=454 fill=#ff2600 /><rect x=1700 y=454 fill=#ff2300 /><rect x=1164 y=462 fill=#00ffb0 /><rect x=1172 y=462 fill=#00ffaf /><rect x=1180 y=462 fill=#00ffae /><rect x=1188 y=462 fill=#00ffad /><rect x=1196 y=462 fill=#00ffac /><rect x=1204 y=462 fill=#00ffab /><rect x=1212 y=462 fill=#00ffaa /><rect x=1220 y=462 fill=#00ffa9 /><rect x=1228 y=462 fill=#00ffa8 /><rect x=1236 y=462 fill=#00ffa7 /><rect x=1244 y=462 fill=#00ffa6 /><rect x=1252 y=462 fill=#00ffa5 /><rect x=1260 y=462 fill=#00ffa4 /><rect x=1268 y=462 fill=#00ffa2 /><rect x=1276 y=462 fill=#00ffa1 /><rect x=1284 y=462 fill=#00ffa0 /><rect x=1292 y=462 fill=#00ff9e /><rect x=1300 y=462 fill=#00ff9d /><rect x=1308 y=462 fill=#00ff9c /><rect x=1316 y=462 fill=#00ff9a /><rect x=1324 y=462 fill=#00ff99 /><rect x=1332 y=462 fill=#00ff97 /><rect x=1340 y=462 fill=#00ff96 /><rect x=1348 y=462 fill=#00ff94 /><rect x=1356 y=462 fill=#00ff92 /><rect x=1364 y=462 fill=#00ff90 /><rect x=1372 y=462 fill=#00ff8f /><rect x=1380 y=462 fill=#08ff8d /><rect x=1388 y=462 fill=#18ff8b /><rect x=1396 y=462 fill=#2aff89 /><rect x=1404 y=462 fill=#3bff87 /><rect x=1412 y=462 fill=#4eff85 /><rect x=1420 y=462 fill=#61ff82 /><rect x=1428 y=462 fill=#75ff80 /><rect x=1436 y=462 fill=#89ff7d /><rect x=1444 y=462 fill=#9fff7b /><rect x=1452 y=462 fill=#b5ff78 /><rect x=1460 y=462 fill=#ccff76 /><rect x=1468 y=462 fill=#e5ff73 /><rect x=1476 y=462 fill=#feff70 /><rect x=1484 y=462 fill=#ffe863 /><rect x=1492 y=462 fill=#ffd357 /><rect x=1500 y=462 fill=#ffc14d /><rect x=1508 y=462 fill=#ffb144 /><rect x=1516 y=462 fill=#ffa33d /><rect x=1524 y=462 fill=#ff9736 /><rect x=1532 y=462 fill=#ff8b2f /><rect x=1540 y=462 fill=#ff812a /><rect x=1548 y=462 fill=#ff7825 /><rect x=1556 y=462 fill=#ff7020 /><rect x=1564 y=462 fill=#ff681c /><rect x=1572 y=462 fill=#ff6118 /><rect x=1580 y=462 fill=#ff5a14 /><rect x=1588 y=462 fill=#ff5411 /><rect x=1596 y=462 fill=#ff4f0e /><rect x=1604 y=462 fill=#ff4a0b /><rect x=1612 y=462 fill=#ff4508 /><rect x=1620 y=462 fill=#ff4006 /><rect x=1628 y=462 fill=#ff3c03 /><rect x=1636 y=462 fill=#ff3801 /><rect x=1644 y=462 fill=#ff3400 /><rect x=1652 y=462 fill=#ff3100 /><rect x=1660 y=462 fill=#ff2d00 /><rect x=1668 y=462 fill=#ff2a00 /><rect x=1676 y=462 fill=#ff2700 /><rect x=1684 y=462 fill=#ff2500 /><rect x=1692 y=462 fill=#ff2200 /><rect x=1700 y=462 fill=#ff1f00 /><rect x=1708 y=462 fill=#ff1d00 /><rect x=1716 y=462 fill=#ff1b00 /><rect x=1164 y=470 fill=#00ffb9 /><rect x=1172 y=470 fill=#00ffb8 /><rect x=1180 y=470 fill=#00ffb8 /><rect x=1188 y=470 fill=#00ffb7 /><rect x=1196 y=470 fill=#00ffb6 /><rect x=1204 y=470 fill=#00ffb5 /><rect x=1212 y=470 fill=#00ffb4 /><rect x=1220 y=470 fill=#00ffb3 /><rect x=1228 y=470 fill=#00ffb2 /><rect x=1236 y=470 fill=#00ffb1 /><rect x=1244 y=470 fill=#00ffb0 /><rect x=1252 y=470 fill=#00ffaf /><rect x=1260 y=470 fill=#00ffae /><rect x=1268 y=470 fill=#00ffad /><rect x=1276 y=470 fill=#00ffac /><rect x=1284 y=470 fill=#00ffaa /><rect x=1292 y=470 fill=#00ffa9 /><rect x=1300 y=470 fill=#00ffa8 /><rect x=1308 y=470 fill=#00ffa7 /><rect x=1316 y=470 fill=#00ffa5 /><rect x=1324 y=470 fill=#00ffa4 /><rect x=1332 y=470 fill=#00ffa2 /><rect x=1340 y=470 fill=#00ffa1 /><rect x=1348 y=470 fill=#00ff9f /><rect x=1356 y=470 fill=#00ff9e /><rect x=1364 y=470 fill=#00ff9c /><rect x=1372 y=470 fill=#00ff9b /><rect x=1380 y=470 fill=#0eff99 /><rect x=1388 y=470 fill=#1fff97 /><rect x=1396 y=470 fill=#31ff95 /><rect x=1404 y=470 fill=#44ff93 /><rect x=1412 y=470 fill=#57ff91 /><rect x=1420 y=470 fill=#6bff8f /><rect x=1428 y=470 fill=#80ff8d /><rect x=1436 y=470 fill=#96ff8b /><rect x=1444 y=470 fill=#acff88 /><rect x=1452 y=470 fill=#c4ff86 /><rect x=1460 y=470 fill=#ddff83 /><rect x=1468 y=470 fill=#f6ff80 /><rect x=1476 y=470 fill=#ffee75 /><rect x=1484 y=470 fill=#ffd868 /><rect x=1492 y=470 fill=#ffc55c /><rect x=1500 y=470 fill=#ffb452 /><rect x=1508 y=470 fill=#ffa549 /><rect x=1516 y=470 fill=#ff9841 /><rect x=1524 y=470 fill=#ff8c3a /><rect x=1532 y=470 fill=#ff8234 /><rect x=1540 y=470 fill=#ff782e /><rect x=1548 y=470 fill=#ff6f29 /><rect x=1556 y=470 fill=#ff6724 /><rect x=1564 y=470 fill=#ff6020 /><rect x=1572 y=470 fill=#ff5a1c /><rect x=1580 y=470 fill=#ff5318 /><rect x=1588 y=470 fill=#ff4e14 /><rect x=1596 y=470 fill=#ff4911 /><rect x=1604 y=470 fill=#ff440e /><rect x=1612 y=470 fill=#ff3f0b /><rect x=1620 y=470 fill=#ff3b09 /><rect x=1628 y=470 fill=#ff3706 /><rect x=1636 y=470 fill=#ff3304 /><rect x=1644 y=470 fill=#ff2f02 /><rect x=1652 y=470 fill=#ff2c00 /><rect x=1660 y=470 fill=#ff2900 /><rect x=1668 y=470 fill=#ff2600 /><rect x=1676 y=470 fill=#ff2300 /><rect x=1684 y=470 fill=#ff2000 /><rect x=1692 y=470 fill=#ff1e00 /><rect x=1700 y=470 fill=#ff1b00 /><rect x=1708 y=470 fill=#ff1900 /><rect x=1716 y=470 fill=#ff1700 /><rect x=1724 y=470 fill=#ff1500 /><rect x=1172 y=478 fill=#00ffc2 /><rect x=1180 y=478 fill=#00ffc1 /><rect x=1188 y=478 fill=#00ffc0 /><rect x=1196 y=478 fill=#00ffc0 /><rect x=1204 y=478 fill=#00ffbf /><rect x=1212 y=478 fill=#00ffbe /><rect x=1220 y=478 fill=#00ffbd /><rect x=1228 y=478 fill=#00ffbc /><rect x=1236 y=478 fill=#00ffbb /><rect x=1244 y=478 fill=#00ffbb /><rect x=1252 y=478 fill=#00ffba /><rect x=1260 y=478 fill=#00ffb9 /><rect x=1268 y=478 fill=#00ffb8 /><rect x=1276 y=478 fill=#00ffb7 /><rect x=1284 y=478 fill=#00ffb6 /><rect x=1292 y=478 fill=#00ffb4 /><rect x=1300 y=478 fill=#00ffb3 /><rect x=1308 y=478 fill=#00ffb2 /><rect x=1316 y=478 fill=#00ffb1 /><rect x=1324 y=478 fill=#00ffb0 /><rect x=1332 y=478 fill=#00ffae /><rect x=1340 y=478 fill=#00ffad /><rect x=1348 y=478 fill=#00ffac /><rect x=1356 y=478 fill=#00ffaa /><rect x=1364 y=478 fill=#00ffa9 /><rect x=1372 y=478 fill=#02ffa7 /><rect x=1380 y=478 fill=#14ffa6 /><rect x=1388 y=478 fill=#26ffa4 /><rect x=1396 y=478 fill=#39ffa2 /><rect x=1404 y=478 fill=#4cffa1 /><rect x=1412 y=478 fill=#61ff9f /><rect x=1420 y=478 fill=#76ff9d /><rect x=1428 y=478 fill=#8cff9b /><rect x=1436 y=478 fill=#a3ff99 /><rect x=1444 y=478 fill=#bbff97 /><rect x=1452 y=478 fill=#d4ff94 /><rect x=1460 y=478 fill=#eeff92 /><rect x=1468 y=478 fill=#fff58a /><rect x=1476 y=478 fill=#ffdd7a /><rect x=1484 y=478 fill=#ffc86d /><rect x=1492 y=478 fill=#ffb761 /><rect x=1500 y=478 fill=#ffa757 /><rect x=1508 y=478 fill=#ff994e /><rect x=1516 y=478 fill=#ff8d46 /><rect x=1524 y=478 fill=#ff823e /><rect x=1532 y=478 fill=#ff7838 /><rect x=1540 y=478 fill=#ff6f32 /><rect x=1548 y=478 fill=#ff672d /><rect x=1556 y=478 fill=#ff6028 /><rect x=1564 y=478 fill=#ff5923 /><rect x=1572 y=478 fill=#ff531f /><rect x=1580 y=478 fill=#ff4d1b /><rect x=1588 y=478 fill=#ff4718 /><rect x=1596 y=478 fill=#ff4215 /><rect x=1604 y=478 fill=#ff3e12 /><rect x=1612 y=478 fill=#ff390f /><rect x=1620 y=478 fill=#ff350c /><rect x=1628 y=478 fill=#ff320a /><rect x=1636 y=478 fill=#ff2e07 /><rect x=1644 y=478 fill=#ff2b05 /><rect x=1652 y=478 fill=#ff2703 /><rect x=1660 y=478 fill=#ff2401 /><rect x=1668 y=478 fill=#ff2200 /><rect x=1676 y=478 fill=#ff1f00 /><rect x=1684 y=478 fill=#ff1c00 /><rect x=1692 y=478 fill=#ff1a00 /><rect x=1700 y=478 fill=#ff1800 /><rect x=1708 y=478 fill=#ff1500 /><rect x=1716 y=478 fill=#ff1300 /><rect x=1724 y=478 fill=#ff1100 /><rect x=1732 y=478 fill=#ff0f00 /><rect x=1172 y=486 fill=#00ffcc /><rect x=1180 y=486 fill=#00ffcb /><rect x=1188 y=486 fill=#00ffcb /><rect x=1196 y=486 fill=#00ffca /><rect x=1204 y=486 fill=#00ffc9 /><rect x=1212 y=486 fill=#00ffc9 /><rect x=1220 y=486 fill=#00ffc8 /><rect x=1228 y=486 fill=#00ffc7 /><rect x=1236 y=486 fill=#00ffc7 /><rect x=1244 y=486 fill=#00ffc6 /><rect x=1252 y=486 fill=#00ffc5 /><rect x=1260 y=486 fill=#00ffc4 /><rect x=1268 y=486 fill=#00ffc3 /><rect x=1276 y=486 fill=#00ffc2 /><rect x=1284 y=486 fill=#00ffc1 /><rect x=1292 y=486 fill=#00ffc1 /><rect x=1300 y=486 fill=#00ffc0 /><rect x=1308 y=486 fill=#00ffbf /><rect x=1316 y=486 fill=#00ffbe /><rect x=1324 y=486 fill=#00ffbc /><rect x=1332 y=486 fill=#00ffbb /><rect x=1340 y=486 fill=#00ffba /><rect x=1348 y=486 fill=#00ffb9 /><rect x=1356 y=486 fill=#00ffb8 /><rect x=1364 y=486 fill=#00ffb6 /><rect x=1372 y=486 fill=#08ffb5 /><rect x=1380 y=486 fill=#1bffb4 /><rect x=1388 y=486 fill=#2effb2 /><rect x=1396 y=486 fill=#41ffb1 /><rect x=1404 y=486 fill=#56ffaf /><rect x=1412 y=486 fill=#6cffae /><rect x=1420 y=486 fill=#82ffac /><rect x=1428 y=486 fill=#99ffaa /><rect x=1436 y=486 fill=#b2ffa8 /><rect x=1444 y=486 fill=#cbffa7 /><rect x=1452 y=486 fill=#e6ffa5 /><rect x=1460 y=486 fill=#fffca1 /><rect x=1468 y=486 fill=#ffe38e /><rect x=1476 y=486 fill=#ffcd7f /><rect x=1484 y=486 fill=#ffba71 /><rect x=1492 y=486 fill=#ffa965 /><rect x=1500 y=486 fill=#ff9b5b /><rect x=1508 y=486 fill=#ff8e52 /><rect x=1516 y=486 fill=#ff834a /><rect x=1524 y=486 fill=#ff7843 /><rect x=1532 y=486 fill=#ff6f3c /><rect x=1540 y=486 fill=#ff6736 /><rect x=1548 y=486 fill=#ff5f31 /><rect x=1556 y=486 fill=#ff582c /><rect x=1564 y=486 fill=#ff5227 /><rect x=1572 y=486 fill=#ff4c23 /><rect x=1580 y=486 fill=#ff461f /><rect x=1588 y=486 fill=#ff411b /><rect x=1596 y=486 fill=#ff3c18 /><rect x=1604 y=486 fill=#ff3815 /><rect x=1612 y=486 fill=#ff3412 /><rect x=1620 y=486 fill=#ff300f /><rect x=1628 y=486 fill=#ff2d0d /><rect x=1636 y=486 fill=#ff290a /><rect x=1644 y=486 fill=#ff2608 /><rect x=1652 y=486 fill=#ff2306 /><rect x=1660 y=486 fill=#ff2004 /><rect x=1668 y=486 fill=#ff1d02 /><rect x=1676 y=486 fill=#ff1b00 /><rect x=1684 y=486 fill=#ff1800 /><rect x=1692 y=486 fill=#ff1600 /><rect x=1700 y=486 fill=#ff1400 /><rect x=1708 y=486 fill=#ff1200 /><rect x=1716 y=486 fill=#ff1000 /><rect x=1724 y=486 fill=#ff0e00 /><rect x=1732 y=486 fill=#ff0c00 /><rect x=1740 y=486 fill=#ff0a00 /><rect x=1172 y=494 fill=#00ffd7 /><rect x=1180 y=494 fill=#00ffd6 /><rect x=1188 y=494 fill=#00ffd6 /><rect x=1196 y=494 fill=#00ffd5 /><rect x=1204 y=494 fill=#00ffd5 /><rect x=1212 y=494 fill=#00ffd4 /><rect x=1220 y=494 fill=#00ffd4 /><rect x=1228 y=494 fill=#00ffd3 /><rect x=1236 y=494 fill=#00ffd2 /><rect x=1244 y=494 fill=#00ffd2 /><rect x=1252 y=494 fill=#00ffd1 /><rect x=1260 y=494 fill=#00ffd0 /><rect x=1268 y=494 fill=#00ffd0 /><rect x=1276 y=494 fill=#00ffcf /><rect x=1284 y=494 fill=#00ffce /><rect x=1292 y=494 fill=#00ffcd /><rect x=1300 y=494 fill=#00ffcd /><rect x=1308 y=494 fill=#00ffcc /><rect x=1316 y=494 fill=#00ffcb /><rect x=1324 y=494 fill=#00ffca /><rect x=1332 y=494 fill=#00ffc9 /><rect x=1340 y=494 fill=#00ffc8 /><rect x=1348 y=494 fill=#00ffc7 /><rect x=1356 y=494 fill=#00ffc6 /><rect x=1364 y=494 fill=#00ffc5 /><rect x=1372 y=494 fill=#0fffc4 /><rect x=1380 y=494 fill=#22ffc3 /><rect x=1388 y=494 fill=#36ffc2 /><rect x=1396 y=494 fill=#4bffc1 /><rect x=1404 y=494 fill=#61ffbf /><rect x=1412 y=494 fill=#77ffbe /><rect x=1420 y=494 fill=#8fffbd /><rect x=1428 y=494 fill=#a8ffbb /><rect x=1436 y=494 fill=#c2ffba /><rect x=1444 y=494 fill=#ddffb8 /><rect x=1452 y=494 fill=#f9ffb6 /><rect x=1460 y=494 fill=#ffe9a5 /><rect x=1468 y=494 fill=#ffd193 /><rect x=1476 y=494 fill=#ffbd83 /><rect x=1484 y=494 fill=#ffac76 /><rect x=1492 y=494 fill=#ff9c6a /><rect x=1500 y=494 fill=#ff8f5f /><rect x=1508 y=494 fill=#ff8356 /><rect x=1516 y=494 fill=#ff784e /><rect x=1524 y=494 fill=#ff6f47 /><rect x=1532 y=494 fill=#ff6640 /><rect x=1540 y=494 fill=#ff5e3a /><rect x=1548 y=494 fill=#ff5734 /><rect x=1556 y=494 fill=#ff512f /><rect x=1564 y=494 fill=#ff4b2b /><rect x=1572 y=494 fill=#ff4526 /><rect x=1580 y=494 fill=#ff4022 /><rect x=1588 y=494 fill=#ff3b1f /><rect x=1596 y=494 fill=#ff371b /><rect x=1604 y=494 fill=#ff3318 /><rect x=1612 y=494 fill=#ff2f15 /><rect x=1620 y=494 fill=#ff2b12 /><rect x=1628 y=494 fill=#ff2810 /><rect x=1636 y=494 fill=#ff240d /><rect x=1644 y=494 fill=#ff210b /><rect x=1652 y=494 fill=#ff1e09 /><rect x=1660 y=494 fill=#ff1c06 /><rect x=1668 y=494 fill=#ff1904 /><rect x=1676 y=494 fill=#ff1703 /><rect x=1684 y=494 fill=#ff1501 /><rect x=1692 y=494 fill=#ff1200 /><rect x=1700 y=494 fill=#ff1000 /><rect x=1708 y=494 fill=#ff0e00 /><rect x=1716 y=494 fill=#ff0c00 /><rect x=1724 y=494 fill=#ff0b00 /><rect x=1732 y=494 fill=#ff0900 /><rect x=1740 y=494 fill=#ff0700 /><rect x=1748 y=494 fill=#ff0600 /><rect x=1172 y=502 fill=#00ffe2 /><rect x=1180 y=502 fill=#00ffe2 /><rect x=1188 y=502 fill=#00ffe1 /><rect x=1196 y=502 fill=#00ffe1 /><rect x=1204 y=502 fill=#00ffe1 /><rect x=1212 y=502 fill=#00ffe0 /><rect x=1220 y=502 fill=#00ffe0 /><rect x=1228 y=502 fill=#00ffdf /><rect x=1236 y=502 fill=#00ffdf /><rect x=1244 y=502 fill=#00ffde /><rect x=1252 y=502 fill=#00ffde /><rect x=1260 y=502 fill=#00ffdd /><rect x=1268 y=502 fill=#00ffdd /><rect x=1276 y=502 fill=#00ffdc /><rect x=1284 y=502 fill=#00ffdc /><rect x=1292 y=502 fill=#00ffdb /><rect x=1300 y=502 fill=#00ffdb /><rect x=1308 y=502 fill=#00ffda /><rect x=1316 y=502 fill=#00ffda /><rect x=1324 y=502 fill=#00ffd9 /><rect x=1332 y=502 fill=#00ffd8 /><rect x=1340 y=502 fill=#00ffd8 /><rect x=1348 y=502 fill=#00ffd7 /><rect x=1356 y=502 fill=#00ffd6 /><rect x=1364 y=502 fill=#02ffd5 /><rect x=1372 y=502 fill=#16ffd4 /><rect x=1380 y=502 fill=#2affd4 /><rect x=1388 y=502 fill=#3fffd3 /><rect x=1396 y=502 fill=#55ffd2 /><rect x=1404 y=502 fill=#6cffd1 /><rect x=1412 y=502 fill=#84ffd0 /><rect x=1420 y=502 fill=#9dffcf /><rect x=1428 y=502 fill=#b8ffce /><rect x=1436 y=502 fill=#d3ffcd /><rect x=1444 y=502 fill=#f1ffcb /><rect x=1452 y=502 fill=#fff0be /><rect x=1460 y=502 fill=#ffd6a9 /><rect x=1468 y=502 fill=#ffc197 /><rect x=1476 y=502 fill=#ffae87 /><rect x=1484 y=502 fill=#ff9e7a /><rect x=1492 y=502 fill=#ff906e /><rect x=1500 y=502 fill=#ff8464 /><rect x=1508 y=502 fill=#ff795a /><rect x=1516 y=502 fill=#ff6f52 /><rect x=1524 y=502 fill=#ff664a /><rect x=1532 y=502 fill=#ff5e44 /><rect x=1540 y=502 fill=#ff563e /><rect x=1548 y=502 fill=#ff5038 /><rect x=1556 y=502 fill=#ff4933 /><rect x=1564 y=502 fill=#ff442e /><rect x=1572 y=502 fill=#ff3f2a /><rect x=1580 y=502 fill=#ff3a26 /><rect x=1588 y=502 fill=#ff3522 /><rect x=1596 y=502 fill=#ff311e /><rect x=1604 y=502 fill=#ff2d1b /><rect x=1612 y=502 fill=#ff2918 /><rect x=1620 y=502 fill=#ff2615 /><rect x=1628 y=502 fill=#ff2312 /><rect x=1636 y=502 fill=#ff2010 /><rect x=1644 y=502 fill=#ff1d0e /><rect x=1652 y=502 fill=#ff1a0b /><rect x=1660 y=502 fill=#ff1809 /><rect x=1668 y=502 fill=#ff1507 /><rect x=1676 y=502 fill=#ff1305 /><rect x=1684 y=502 fill=#ff1103 /><rect x=1692 y=502 fill=#ff0f02 /><rect x=1700 y=502 fill=#ff0d00 /><rect x=1708 y=502 fill=#ff0b00 /><rect x=1716 y=502 fill=#ff0900 /><rect x=1724 y=502 fill=#ff0700 /><rect x=1732 y=502 fill=#ff0600 /><rect x=1740 y=502 fill=#ff0400 /><rect x=1748 y=502 fill=#ff0200 /><rect x=1756 y=502 fill=#ff0100 /><rect x=1172 y=510 fill=#00ffee /><rect x=1180 y=510 fill=#00ffee /><rect x=1188 y=510 fill=#00ffee /><rect x=1196 y=510 fill=#00ffee /><rect x=1204 y=510 fill=#00ffed /><rect x=1212 y=510 fill=#00ffed /><rect x=1220 y=510 fill=#00ffed /><rect x=1228 y=510 fill=#00ffed /><rect x=1236 y=510 fill=#00ffec /><rect x=1244 y=510 fill=#00ffec /><rect x=1252 y=510 fill=#00ffec /><rect x=1260 y=510 fill=#00ffeb /><rect x=1268 y=510 fill=#00ffeb /><rect x=1276 y=510 fill=#00ffeb /><rect x=1284 y=510 fill=#00ffeb /><rect x=1292 y=510 fill=#00ffea /><rect x=1300 y=510 fill=#00ffea /><rect x=1308 y=510 fill=#00ffea /><rect x=1316 y=510 fill=#00ffe9 /><rect x=1324 y=510 fill=#00ffe9 /><rect x=1332 y=510 fill=#00ffe8 /><rect x=1340 y=510 fill=#00ffe8 /><rect x=1348 y=510 fill=#00ffe8 /><rect x=1356 y=510 fill=#00ffe7 /><rect x=1364 y=510 fill=#09ffe7 /><rect x=1372 y=510 fill=#1dffe6 /><rect x=1380 y=510 fill=#33ffe6 /><rect x=1388 y=510 fill=#49ffe5 /><rect x=1396 y=510 fill=#60ffe5 /><rect x=1404 y=510 fill=#79ffe4 /><rect x=1412 y=510 fill=#92ffe4 /><rect x=1420 y=510 fill=#adffe3 /><rect x=1428 y=510 fill=#caffe2 /><rect x=1436 y=510 fill=#e7ffe2 /><rect x=1444 y=510 fill=#fff8db /><rect x=1452 y=510 fill=#ffdcc1 /><rect x=1460 y=510 fill=#ffc5ac /><rect x=1468 y=510 fill=#ffb19b /><rect x=1476 y=510 fill=#ffa08b /><rect x=1484 y=510 fill=#ff917e /><rect x=1492 y=510 fill=#ff8472 /><rect x=1500 y=510 fill=#ff7967 /><rect x=1508 y=510 fill=#ff6e5e /><rect x=1516 y=510 fill=#ff6556 /><rect x=1524 y=510 fill=#ff5d4e /><rect x=1532 y=510 fill=#ff5547 /><rect x=1540 y=510 fill=#ff4e41 /><rect x=1548 y=510 fill=#ff483c /><rect x=1556 y=510 fill=#ff4236 /><rect x=1564 y=510 fill=#ff3d31 /><rect x=1572 y=510 fill=#ff382d /><rect x=1580 y=510 fill=#ff3429 /><rect x=1588 y=510 fill=#ff2f25 /><rect x=1596 y=510 fill=#ff2b21 /><rect x=1604 y=510 fill=#ff281e /><rect x=1612 y=510 fill=#ff241b /><rect x=1620 y=510 fill=#ff2118 /><rect x=1628 y=510 fill=#ff1e15 /><rect x=1636 y=510 fill=#ff1b13 /><rect x=1644 y=510 fill=#ff1810 /><rect x=1652 y=510 fill=#ff160e /><rect x=1660 y=510 fill=#ff130c /><rect x=1668 y=510 fill=#ff110a /><rect x=1676 y=510 fill=#ff0f08 /><rect x=1684 y=510 fill=#ff0d06 /><rect x=1692 y=510 fill=#ff0b04 /><rect x=1700 y=510 fill=#ff0902 /><rect x=1708 y=510 fill=#ff0701 /><rect x=1716 y=510 fill=#ff0600 /><rect x=1724 y=510 fill=#ff0400 /><rect x=1732 y=510 fill=#ff0200 /><rect x=1740 y=510 fill=#ff0100 /><rect x=1748 y=510 fill=#ff0000 /><rect x=1756 y=510 fill=#ff0000 /><rect x=1764 y=510 fill=#ff0000 /><rect x=1772 y=510 fill=#ff0000 /><rect x=1180 y=518 fill=#00fffb /><rect x=1188 y=518 fill=#00fffb /><rect x=1196 y=518 fill=#00fffb /><rect x=1204 y=518 fill=#00fffb /><rect x=1212 y=518 fill=#00fffb /><rect x=1220 y=518 fill=#00fffb /><rect x=1228 y=518 fill=#00fffb /><rect x=1236 y=518 fill=#00fffb /><rect x=1244 y=518 fill=#00fffb /><rect x=1252 y=518 fill=#00fffb /><rect x=1260 y=518 fill=#00fffb /><rect x=1268 y=518 fill=#00fffb /><rect x=1276 y=518 fill=#00fffa /><rect x=1284 y=518 fill=#00fffa /><rect x=1292 y=518 fill=#00fffa /><rect x=1300 y=518 fill=#00fffa /><rect x=1308 y=518 fill=#00fffa /><rect x=1316 y=518 fill=#00fffa /><rect x=1324 y=518 fill=#00fffa /><rect x=1332 y=518 fill=#00fffa /><rect x=1340 y=518 fill=#00fffa /><rect x=1348 y=518 fill=#00fffa /><rect x=1356 y=518 fill=#00fffa /><rect x=1364 y=518 fill=#10fffa /><rect x=1372 y=518 fill=#26fffa /><rect x=1380 y=518 fill=#3cfffa /><rect x=1388 y=518 fill=#54fffa /><rect x=1396 y=518 fill=#6dfffa /><rect x=1404 y=518 fill=#87fffa /><rect x=1412 y=518 fill=#a2fffa /><rect x=1420 y=518 fill=#bffff9 /><rect x=1428 y=518 fill=#ddfff9 /><rect x=1436 y=518 fill=#fdfff9 /><rect x=1444 y=518 fill=#ffe2dd /><rect x=1452 y=518 fill=#ffc9c5 /><rect x=1460 y=518 fill=#ffb4b0 /><rect x=1468 y=518 fill=#ffa29e /><rect x=1476 y=518 fill=#ff938f /><rect x=1484 y=518 fill=#ff8582 /><rect x=1492 y=518 fill=#ff7976 /><rect x=1500 y=518 fill=#ff6e6b /><rect x=1508 y=518 fill=#ff6562 /><rect x=1516 y=518 fill=#ff5c5a /><rect x=1524 y=518 fill=#ff5452 /><rect x=1532 y=518 fill=#ff4d4b /><rect x=1540 y=518 fill=#ff4745 /><rect x=1548 y=518 fill=#ff413f /><rect x=1556 y=518 fill=#ff3c3a /><rect x=1564 y=518 fill=#ff3735 /><rect x=1572 y=518 fill=#ff3230 /><rect x=1580 y=518 fill=#ff2e2c /><rect x=1588 y=518 fill=#ff2a28 /><rect x=1596 y=518 fill=#ff2625 /><rect x=1604 y=518 fill=#ff2321 /><rect x=1612 y=518 fill=#ff1f1e /><rect x=1620 y=518 fill=#ff1c1b /><rect x=1628 y=518 fill=#ff1918 /><rect x=1636 y=518 fill=#ff1715 /><rect x=1644 y=518 fill=#ff1413 /><rect x=1652 y=518 fill=#ff1211 /><rect x=1660 y=518 fill=#ff0f0e /><rect x=1668 y=518 fill=#ff0d0c /><rect x=1676 y=518 fill=#ff0b0a /><rect x=1684 y=518 fill=#ff0908 /><rect x=1692 y=518 fill=#ff0706 /><rect x=1700 y=518 fill=#ff0605 /><rect x=1708 y=518 fill=#ff0403 /><rect x=1716 y=518 fill=#ff0201 /><rect x=1724 y=518 fill=#ff0100 /><rect x=1732 y=518 fill=#ff0000 /><rect x=1740 y=518 fill=#ff0000 /><rect x=1748 y=518 fill=#ff0000 /><rect x=1756 y=518 fill=#ff0000 /><rect x=1764 y=518 fill=#ff0000 /><rect x=1772 y=518 fill=#ff0000 /><rect x=1780 y=518 fill=#ff0000 /><rect x=1180 y=526 fill=#00f6ff /><rect x=1188 y=526 fill=#00f6ff /><rect x=1196 y=526 fill=#00f5ff /><rect x=1204 y=526 fill=#00f5ff /><rect x=1212 y=526 fill=#00f5ff /><rect x=1220 y=526 fill=#00f5ff /><rect x=1228 y=526 fill=#00f5ff /><rect x=1236 y=526 fill=#00f4ff /><rect x=1244 y=526 fill=#00f4ff /><rect x=1252 y=526 fill=#00f4ff /><rect x=1260 y=526 fill=#00f4ff /><rect x=1268 y=526 fill=#00f4ff /><rect x=1276 y=526 fill=#00f3ff /><rect x=1284 y=526 fill=#00f3ff /><rect x=1292 y=526 fill=#00f3ff /><rect x=1300 y=526 fill=#00f3ff /><rect x=1308 y=526 fill=#00f2ff /><rect x=1316 y=526 fill=#00f2ff /><rect x=1324 y=526 fill=#00f2ff /><rect x=1332 y=526 fill=#00f1ff /><rect x=1340 y=526 fill=#00f1ff /><rect x=1348 y=526 fill=#00f1ff /><rect x=1356 y=526 fill=#02f0ff /><rect x=1364 y=526 fill=#17f0ff /><rect x=1372 y=526 fill=#2cf0ff /><rect x=1380 y=526 fill=#43efff /><rect x=1388 y=526 fill=#5aefff /><rect x=1396 y=526 fill=#73eeff /><rect x=1404 y=526 fill=#8ceeff /><rect x=1412 y=526 fill=#a7edff /><rect x=1420 y=526 fill=#c4edff /><rect x=1428 y=526 fill=#e2ecff /><rect x=1436 y=526 fill=#ffeafd /><rect x=1444 y=526 fill=#ffcfe0 /><rect x=1452 y=526 fill=#ffb8c8 /><rect x=1460 y=526 fill=#ffa4b3 /><rect x=1468 y=526 fill=#ff94a2 /><rect x=1476 y=526 fill=#ff8693 /><rect x=1484 y=526 fill=#ff7985 /><rect x=1492 y=526 fill=#ff6e79 /><rect x=1500 y=526 fill=#ff646f /><rect x=1508 y=526 fill=#ff5b66 /><rect x=1516 y=526 fill=#ff535d /><rect x=1524 y=526 fill=#ff4c55 /><rect x=1532 y=526 fill=#ff454e /><rect x=1540 y=526 fill=#ff3f48 /><rect x=1548 y=526 fill=#ff3a42 /><rect x=1556 y=526 fill=#ff353d /><rect x=1564 y=526 fill=#ff3038 /><rect x=1572 y=526 fill=#ff2c33 /><rect x=1580 y=526 fill=#ff282f /><rect x=1588 y=526 fill=#ff242b /><rect x=1596 y=526 fill=#ff2127 /><rect x=1604 y=526 fill=#ff1d24 /><rect x=1612 y=526 fill=#ff1a21 /><rect x=1620 y=526 fill=#ff171e /><rect x=1628 y=526 fill=#ff151b /><rect x=1636 y=526 fill=#ff1218 /><rect x=1644 y=526 fill=#ff1016 /><rect x=1652 y=526 fill=#ff0e13 /><rect x=1660 y=526 fill=#ff0b11 /><rect x=1668 y=526 fill=#ff090f /><rect x=1676 y=526 fill=#ff070d /><rect x=1684 y=526 fill=#ff050b /><rect x=1692 y=526 fill=#ff0409 /><rect x=1700 y=526 fill=#ff0207 /><rect x=1708 y=526 fill=#ff0005 /><rect x=1716 y=526 fill=#ff0004 /><rect x=1724 y=526 fill=#ff0002 /><rect x=1732 y=526 fill=#ff0001 /><rect x=1740 y=526 fill=#ff0000 /><rect x=1748 y=526 fill=#ff0000 /><rect x=1756 y=526 fill=#ff0000 /><rect x=1764 y=526 fill=#ff0000 /><rect x=1772 y=526 fill=#ff0000 /><rect x=1780 y=526 fill=#ff0000 /><rect x=1788 y=526 fill=#ff0000 /><rect x=1180 y=534 fill=#00e9ff /><rect x=1188 y=534 fill=#00e8ff /><rect x=1196 y=534 fill=#00e8ff /><rect x=1204 y=534 fill=#00e8ff /><rect x=1212 y=534 fill=#00e7ff /><rect x=1220 y=534 fill=#00e7ff /><rect x=1228 y=534 fill=#00e7ff /><rect x=1236 y=534 fill=#00e6ff /><rect x=1244 y=534 fill=#00e6ff /><rect x=1252 y=534 fill=#00e5ff /><rect x=1260 y=534 fill=#00e5ff /><rect x=1268 y=534 fill=#00e4ff /><rect x=1276 y=534 fill=#00e4ff /><rect x=1284 y=534 fill=#00e3ff /><rect x=1292 y=534 fill=#00e3ff /><rect x=1300 y=534 fill=#00e2ff /><rect x=1308 y=534 fill=#00e2ff /><rect x=1316 y=534 fill=#00e1ff /><rect x=1324 y=534 fill=#00e0ff /><rect x=1332 y=534 fill=#00e0ff /><rect x=1340 y=534 fill=#00dfff /><rect x=1348 y=534 fill=#00deff /><rect x=1356 y=534 fill=#08deff /><rect x=1364 y=534 fill=#1cddff /><rect x=1372 y=534 fill=#31dcff /><rect x=1380 y=534 fill=#47dbff /><rect x=1388 y=534 fill=#5edbff /><rect x=1396 y=534 fill=#76daff /><rect x=1404 y=534 fill=#8fd9ff /><rect x=1412 y=534 fill=#a9d8ff /><rect x=1420 y=534 fill=#c4d7ff /><rect x=1428 y=534 fill=#e1d6ff /><rect x=1436 y=534 fill=#ffd4ff /><rect x=1444 y=534 fill=#ffbce2 /><rect x=1452 y=534 fill=#ffa7cb /><rect x=1460 y=534 fill=#ff95b6 /><rect x=1468 y=534 fill=#ff86a5 /><rect x=1476 y=534 fill=#ff7996 /><rect x=1484 y=534 fill=#ff6e89 /><rect x=1492 y=534 fill=#ff637d /><rect x=1500 y=534 fill=#ff5a72 /><rect x=1508 y=534 fill=#ff5269 /><rect x=1516 y=534 fill=#ff4b61 /><rect x=1524 y=534 fill=#ff4459 /><rect x=1532 y=534 fill=#ff3e52 /><rect x=1540 y=534 fill=#ff384b /><rect x=1548 y=534 fill=#ff3346 /><rect x=1556 y=534 fill=#ff2e40 /><rect x=1564 y=534 fill=#ff2a3b /><rect x=1572 y=534 fill=#ff2636 /><rect x=1580 y=534 fill=#ff2232 /><rect x=1588 y=534 fill=#ff1f2e /><rect x=1596 y=534 fill=#ff1b2a /><rect x=1604 y=534 fill=#ff1827 /><rect x=1612 y=534 fill=#ff1624 /><rect x=1620 y=534 fill=#ff1320 /><rect x=1628 y=534 fill=#ff101e /><rect x=1636 y=534 fill=#ff0e1b /><rect x=1644 y=534 fill=#ff0c18 /><rect x=1652 y=534 fill=#ff0916 /><rect x=1660 y=534 fill=#ff0713 /><rect x=1668 y=534 fill=#ff0511 /><rect x=1676 y=534 fill=#ff040f /><rect x=1684 y=534 fill=#ff020d /><rect x=1692 y=534 fill=#ff000b /><rect x=1700 y=534 fill=#ff0009 /><rect x=1708 y=534 fill=#ff0008 /><rect x=1716 y=534 fill=#ff0006 /><rect x=1724 y=534 fill=#ff0004 /><rect x=1732 y=534 fill=#ff0003 /><rect x=1740 y=534 fill=#ff0001 /><rect x=1748 y=534 fill=#ff0000 /><rect x=1756 y=534 fill=#ff0000 /><rect x=1764 y=534 fill=#ff0000 /><rect x=1772 y=534 fill=#ff0000 /><rect x=1780 y=534 fill=#ff0000 /><rect x=1788 y=534 fill=#ff0000 /><rect x=1796 y=534 fill=#ff0000 /><rect x=1180 y=542 fill=#00dcff /><rect x=1188 y=542 fill=#00dcff /><rect x=1196 y=542 fill=#00dbff /><rect x=1204 y=542 fill=#00dbff /><rect x=1212 y=542 fill=#00daff /><rect x=1220 y=542 fill=#00daff /><rect x=1228 y=542 fill=#00d9ff /><rect x=1236 y=542 fill=#00d8ff /><rect x=1244 y=542 fill=#00d8ff /><rect x=1252 y=542 fill=#00d7ff /><rect x=1260 y=542 fill=#00d7ff /><rect x=1268 y=542 fill=#00d6ff /><rect x=1276 y=542 fill=#00d5ff /><rect x=1284 y=542 fill=#00d4ff /><rect x=1292 y=542 fill=#00d4ff /><rect x=1300 y=542 fill=#00d3ff /><rect x=1308 y=542 fill=#00d2ff /><rect x=1316 y=542 fill=#00d1ff /><rect x=1324 y=542 fill=#00d0ff /><rect x=1332 y=542 fill=#00cfff /><rect x=1340 y=542 fill=#00ceff /><rect x=1348 y=542 fill=#00cdff /><rect x=1356 y=542 fill=#0eccff /><rect x=1364 y=542 fill=#22cbff /><rect x=1372 y=542 fill=#36caff /><rect x=1380 y=542 fill=#4cc9ff /><rect x=1388 y=542 fill=#62c8ff /><rect x=1396 y=542 fill=#79c6ff /><rect x=1404 y=542 fill=#91c5ff /><rect x=1412 y=542 fill=#aac4ff /><rect x=1420 y=542 fill=#c5c2ff /><rect x=1428 y=542 fill=#e1c1ff /><rect x=1436 y=542 fill=#febfff /><rect x=1444 y=542 fill=#ffaae5 /><rect x=1452 y=542 fill=#ff97cd /><rect x=1460 y=542 fill=#ff87b9 /><rect x=1468 y=542 fill=#ff79a8 /><rect x=1476 y=542 fill=#ff6d99 /><rect x=1484 y=542 fill=#ff638c /><rect x=1492 y=542 fill=#ff5980 /><rect x=1500 y=542 fill=#ff5176 /><rect x=1508 y=542 fill=#ff496c /><rect x=1516 y=542 fill=#ff4264 /><rect x=1524 y=542 fill=#ff3c5c /><rect x=1532 y=542 fill=#ff3655 /><rect x=1540 y=542 fill=#ff314f /><rect x=1548 y=542 fill=#ff2d49 /><rect x=1556 y=542 fill=#ff2843 /><rect x=1564 y=542 fill=#ff243e /><rect x=1572 y=542 fill=#ff203a /><rect x=1580 y=542 fill=#ff1d35 /><rect x=1588 y=542 fill=#ff1931 /><rect x=1596 y=542 fill=#ff162d /><rect x=1604 y=542 fill=#ff142a /><rect x=1612 y=542 fill=#ff1126 /><rect x=1620 y=542 fill=#ff0e23 /><rect x=1628 y=542 fill=#ff0c20 /><rect x=1636 y=542 fill=#ff0a1d /><rect x=1644 y=542 fill=#ff071b /><rect x=1652 y=542 fill=#ff0518 /><rect x=1660 y=542 fill=#ff0416 /><rect x=1668 y=542 fill=#ff0214 /><rect x=1676 y=542 fill=#ff0011 /><rect x=1684 y=542 fill=#ff000f /><rect x=1692 y=542 fill=#ff000d /><rect x=1700 y=542 fill=#ff000c /><rect x=1708 y=542 fill=#ff000a /><rect x=1716 y=542 fill=#ff0008 /><rect x=1724 y=542 fill=#ff0006 /><rect x=1732 y=542 fill=#ff0005 /><rect x=1740 y=542 fill=#ff0003 /><rect x=1748 y=542 fill=#ff0002 /><rect x=1756 y=542 fill=#ff0001 /><rect x=1764 y=542 fill=#ff0000 /><rect x=1772 y=542 fill=#ff0000 /><rect x=1780 y=542 fill=#ff0000 /><rect x=1788 y=542 fill=#ff0000 /><rect x=1796 y=542 fill=#ff0000 /><rect x=1804 y=542 fill=#ff0000 /><rect x=1188 y=550 fill=#00d0ff /><rect x=1196 y=550 fill=#00cfff /><rect x=1204 y=550 fill=#00ceff /><rect x=1212 y=550 fill=#00ceff /><rect x=1220 y=550 fill=#00cdff /><rect x=1228 y=550 fill=#00ccff /><rect x=1236 y=550 fill=#00cbff /><rect x=1244 y=550 fill=#00cbff /><rect x=1252 y=550 fill=#00caff /><rect x=1260 y=550 fill=#00c9ff /><rect x=1268 y=550 fill=#00c8ff /><rect x=1276 y=550 fill=#00c7ff /><rect x=1284 y=550 fill=#00c6ff /><rect x=1292 y=550 fill=#00c5ff /><rect x=1300 y=550 fill=#00c4ff /><rect x=1308 y=550 fill=#00c3ff /><rect x=1316 y=550 fill=#00c2ff /><rect x=1324 y=550 fill=#00c1ff /><rect x=1332 y=550 fill=#00c0ff /><rect x=1340 y=550 fill=#00beff /><rect x=1348 y=550 fill=#02bdff /><rect x=1356 y=550 fill=#14bcff /><rect x=1364 y=550 fill=#27baff /><rect x=1372 y=550 fill=#3bb9ff /><rect x=1380 y=550 fill=#50b8ff /><rect x=1388 y=550 fill=#65b6ff /><rect x=1396 y=550 fill=#7cb4ff /><rect x=1404 y=550 fill=#93b3ff /><rect x=1412 y=550 fill=#acb1ff /><rect x=1420 y=550 fill=#c5afff /><rect x=1428 y=550 fill=#e0adff /><rect x=1436 y=550 fill=#fcabff /><rect x=1444 y=550 fill=#ff99e7 /><rect x=1452 y=550 fill=#ff88d0 /><rect x=1460 y=550 fill=#ff7abc /><rect x=1468 y=550 fill=#ff6dab /><rect x=1476 y=550 fill=#ff629c /><rect x=1484 y=550 fill=#ff588f /><rect x=1492 y=550 fill=#ff4f84 /><rect x=1500 y=550 fill=#ff4879 /><rect x=1508 y=550 fill=#ff4170 /><rect x=1516 y=550 fill=#ff3a67 /><rect x=1524 y=550 fill=#ff355f /><rect x=1532 y=550 fill=#ff2f58 /><rect x=1540 y=550 fill=#ff2b52 /><rect x=1548 y=550 fill=#ff264c /><rect x=1556 y=550 fill=#ff2246 /><rect x=1564 y=550 fill=#ff1e41 /><rect x=1572 y=550 fill=#ff1b3c /><rect x=1580 y=550 fill=#ff1738 /><rect x=1588 y=550 fill=#ff1434 /><rect x=1596 y=550 fill=#ff1130 /><rect x=1604 y=550 fill=#ff0f2c /><rect x=1612 y=550 fill=#ff0c29 /><rect x=1620 y=550 fill=#ff0a26 /><rect x=1628 y=550 fill=#ff0823 /><rect x=1636 y=550 fill=#ff0520 /><rect x=1644 y=550 fill=#ff031d /><rect x=1652 y=550 fill=#ff021b /><rect x=1660 y=550 fill=#ff0018 /><rect x=1668 y=550 fill=#ff0016 /><rect x=1676 y=550 fill=#ff0014 /><rect x=1684 y=550 fill=#ff0012 /><rect x=1692 y=550 fill=#ff0010 /><rect x=1700 y=550 fill=#ff000e /><rect x=1708 y=550 fill=#ff000c /><rect x=1716 y=550 fill=#ff000a /><rect x=1724 y=550 fill=#ff0008 /><rect x=1732 y=550 fill=#ff0007 /><rect x=1740 y=550 fill=#ff0005 /><rect x=1748 y=550 fill=#ff0004 /><rect x=1756 y=550 fill=#ff0002 /><rect x=1764 y=550 fill=#ff0001 /><rect x=1772 y=550 fill=#ff0000 /><rect x=1780 y=550 fill=#ff0000 /><rect x=1788 y=550 fill=#ff0000 /><rect x=1796 y=550 fill=#ff0000 /><rect x=1804 y=550 fill=#ff0000 /><rect x=1812 y=550 fill=#ff0000 /><rect x=1820 y=550 fill=#ff0000 /><rect x=1188 y=558 fill=#00c4ff /><rect x=1196 y=558 fill=#00c3ff /><rect x=1204 y=558 fill=#00c3ff /><rect x=1212 y=558 fill=#00c2ff /><rect x=1220 y=558 fill=#00c1ff /><rect x=1228 y=558 fill=#00c0ff /><rect x=1236 y=558 fill=#00bfff /><rect x=1244 y=558 fill=#00beff /><rect x=1252 y=558 fill=#00bdff /><rect x=1260 y=558 fill=#00bcff /><rect x=1268 y=558 fill=#00bbff /><rect x=1276 y=558 fill=#00baff /><rect x=1284 y=558 fill=#00b9ff /><rect x=1292 y=558 fill=#00b7ff /><rect x=1300 y=558 fill=#00b6ff /><rect x=1308 y=558 fill=#00b5ff /><rect x=1316 y=558 fill=#00b4ff /><rect x=1324 y=558 fill=#00b2ff /><rect x=1332 y=558 fill=#00b1ff /><rect x=1340 y=558 fill=#00afff /><rect x=1348 y=558 fill=#07aeff /><rect x=1356 y=558 fill=#19acff /><rect x=1364 y=558 fill=#2cabff /><rect x=1372 y=558 fill=#3fa9ff /><rect x=1380 y=558 fill=#53a7ff /><rect x=1388 y=558 fill=#68a5ff /><rect x=1396 y=558 fill=#7ea3ff /><rect x=1404 y=558 fill=#95a2ff /><rect x=1412 y=558 fill=#ad9fff /><rect x=1420 y=558 fill=#c69dff /><rect x=1428 y=558 fill=#e09bff /><rect x=1436 y=558 fill=#fb99ff /><rect x=1444 y=558 fill=#ff89e9 /><rect x=1452 y=558 fill=#ff7ad2 /><rect x=1460 y=558 fill=#ff6dbf /><rect x=1468 y=558 fill=#ff61ae /><rect x=1476 y=558 fill=#ff57a0 /><rect x=1484 y=558 fill=#ff4e92 /><rect x=1492 y=558 fill=#ff4687 /><rect x=1500 y=558 fill=#ff3f7c /><rect x=1508 y=558 fill=#ff3873 /><rect x=1516 y=558 fill=#ff336a /><rect x=1524 y=558 fill=#ff2d63 /><rect x=1532 y=558 fill=#ff285b /><rect x=1540 y=558 fill=#ff2455 /><rect x=1548 y=558 fill=#ff204f /><rect x=1556 y=558 fill=#ff1c49 /><rect x=1564 y=558 fill=#ff1844 /><rect x=1572 y=558 fill=#ff153f /><rect x=1580 y=558 fill=#ff123b /><rect x=1588 y=558 fill=#ff0f37 /><rect x=1596 y=558 fill=#ff0d33 /><rect x=1604 y=558 fill=#ff0a2f /><rect x=1612 y=558 fill=#ff082c /><rect x=1620 y=558 fill=#ff0528 /><rect x=1628 y=558 fill=#ff0325 /><rect x=1636 y=558 fill=#ff0122 /><rect x=1644 y=558 fill=#ff0020 /><rect x=1652 y=558 fill=#ff001d /><rect x=1660 y=558 fill=#ff001b /><rect x=1668 y=558 fill=#ff0018 /><rect x=1676 y=558 fill=#ff0016 /><rect x=1684 y=558 fill=#ff0014 /><rect x=1692 y=558 fill=#ff0012 /><rect x=1700 y=558 fill=#ff0010 /><rect x=1708 y=558 fill=#ff000e /><rect x=1716 y=558 fill=#ff000c /><rect x=1724 y=558 fill=#ff000b /><rect x=1732 y=558 fill=#ff0009 /><rect x=1740 y=558 fill=#ff0007 /><rect x=1748 y=558 fill=#ff0006 /><rect x=1756 y=558 fill=#ff0004 /><rect x=1764 y=558 fill=#ff0003 /><rect x=1772 y=558 fill=#ff0002 /><rect x=1780 y=558 fill=#ff0000 /><rect x=1788 y=558 fill=#ff0000 /><rect x=1796 y=558 fill=#ff0000 /><rect x=1804 y=558 fill=#ff0000 /><rect x=1812 y=558 fill=#ff0000 /><rect x=1820 y=558 fill=#ff0000 /><rect x=1188 y=566 fill=#00b9ff /><rect x=1196 y=566 fill=#00b8ff /><rect x=1204 y=566 fill=#00b7ff /><rect x=1212 y=566 fill=#00b6ff /><rect x=1220 y=566 fill=#00b5ff /><rect x=1228 y=566 fill=#00b4ff /><rect x=1236 y=566 fill=#00b3ff /><rect x=1244 y=566 fill=#00b2ff /><rect x=1252 y=566 fill=#00b1ff /><rect x=1260 y=566 fill=#00afff /><rect x=1268 y=566 fill=#00aeff /><rect x=1276 y=566 fill=#00adff /><rect x=1284 y=566 fill=#00acff /><rect x=1292 y=566 fill=#00aaff /><rect x=1300 y=566 fill=#00a9ff /><rect x=1308 y=566 fill=#00a7ff /><rect x=1316 y=566 fill=#00a6ff /><rect x=1324 y=566 fill=#00a4ff /><rect x=1332 y=566 fill=#00a3ff /><rect x=1340 y=566 fill=#00a1ff /><rect x=1348 y=566 fill=#0d9fff /><rect x=1356 y=566 fill=#1e9eff /><rect x=1364 y=566 fill=#309cff /><rect x=1372 y=566 fill=#439aff /><rect x=1380 y=566 fill=#5798ff /><rect x=1388 y=566 fill=#6c96ff /><rect x=1396 y=566 fill=#8194ff /><rect x=1404 y=566 fill=#9791ff /><rect x=1412 y=566 fill=#ae8fff /><rect x=1420 y=566 fill=#c68dff /><rect x=1428 y=566 fill=#df8aff /><rect x=1436 y=566 fill=#f987ff /><rect x=1444 y=566 fill=#ff7aeb /><rect x=1452 y=566 fill=#ff6cd5 /><rect x=1460 y=566 fill=#ff60c2 /><rect x=1468 y=566 fill=#ff56b1 /><rect x=1476 y=566 fill=#ff4ca2 /><rect x=1484 y=566 fill=#ff4495 /><rect x=1492 y=566 fill=#ff3d8a /><rect x=1500 y=566 fill=#ff367f /><rect x=1508 y=566 fill=#ff3076 /><rect x=1516 y=566 fill=#ff2b6d /><rect x=1524 y=566 fill=#ff2666 /><rect x=1532 y=566 fill=#ff225e /><rect x=1540 y=566 fill=#ff1d58 /><rect x=1548 y=566 fill=#ff1a52 /><rect x=1556 y=566 fill=#ff164c /><rect x=1564 y=566 fill=#ff1347 /><rect x=1572 y=566 fill=#ff1042 /><rect x=1580 y=566 fill=#ff0d3e /><rect x=1588 y=566 fill=#ff0a39 /><rect x=1596 y=566 fill=#ff0835 /><rect x=1604 y=566 fill=#ff0532 /><rect x=1612 y=566 fill=#ff032e /><rect x=1620 y=566 fill=#ff012b /><rect x=1628 y=566 fill=#ff0028 /><rect x=1636 y=566 fill=#ff0025 /><rect x=1644 y=566 fill=#ff0022 /><rect x=1652 y=566 fill=#ff001f /><rect x=1660 y=566 fill=#ff001d /><rect x=1668 y=566 fill=#ff001b /><rect x=1676 y=566 fill=#ff0018 /><rect x=1684 y=566 fill=#ff0016 /><rect x=1692 y=566 fill=#ff0014 /><rect x=1700 y=566 fill=#ff0012 /><rect x=1708 y=566 fill=#ff0010 /><rect x=1716 y=566 fill=#ff000e /><rect x=1724 y=566 fill=#ff000d /><rect x=1732 y=566 fill=#ff000b /><rect x=1740 y=566 fill=#ff0009 /><rect x=1748 y=566 fill=#ff0008 /><rect x=1756 y=566 fill=#ff0006 /><rect x=1764 y=566 fill=#ff0005 /><rect x=1772 y=566 fill=#ff0004 /><rect x=1780 y=566 fill=#ff0002 /><rect x=1788 y=566 fill=#ff0001 /><rect x=1796 y=566 fill=#ff0000 /><rect x=1804 y=566 fill=#ff0000 /><rect x=1812 y=566 fill=#ff0000 /><rect x=1820 y=566 fill=#ff0000 /><rect x=1188 y=574 fill=#00afff /><rect x=1196 y=574 fill=#00adff /><rect x=1204 y=574 fill=#00acff /><rect x=1212 y=574 fill=#00abff /><rect x=1220 y=574 fill=#00aaff /><rect x=1228 y=574 fill=#00a9ff /><rect x=1236 y=574 fill=#00a8ff /><rect x=1244 y=574 fill=#00a6ff /><rect x=1252 y=574 fill=#00a5ff /><rect x=1260 y=574 fill=#00a4ff /><rect x=1268 y=574 fill=#00a2ff /><rect x=1276 y=574 fill=#00a1ff /><rect x=1284 y=574 fill=#009fff /><rect x=1292 y=574 fill=#009eff /><rect x=1300 y=574 fill=#009cff /><rect x=1308 y=574 fill=#009bff /><rect x=1316 y=574 fill=#0099ff /><rect x=1324 y=574 fill=#0097ff /><rect x=1332 y=574 fill=#0095ff /><rect x=1340 y=574 fill=#0194ff /><rect x=1348 y=574 fill=#1292ff /><rect x=1356 y=574 fill=#2390ff /><rect x=1364 y=574 fill=#358eff /><rect x=1372 y=574 fill=#478bff /><rect x=1380 y=574 fill=#5b89ff /><rect x=1388 y=574 fill=#6e87ff /><rect x=1396 y=574 fill=#8385ff /><rect x=1404 y=574 fill=#9982ff /><rect x=1412 y=574 fill=#af7fff /><rect x=1420 y=574 fill=#c67dff /><rect x=1428 y=574 fill=#df7aff /><rect x=1436 y=574 fill=#f877ff /><rect x=1444 y=574 fill=#ff6ced /><rect x=1452 y=574 fill=#ff5fd7 /><rect x=1460 y=574 fill=#ff54c4 /><rect x=1468 y=574 fill=#ff4bb4 /><rect x=1476 y=574 fill=#ff42a5 /><rect x=1484 y=574 fill=#ff3b98 /><rect x=1492 y=574 fill=#ff348d /><rect x=1500 y=574 fill=#ff2e82 /><rect x=1508 y=574 fill=#ff2979 /><rect x=1516 y=574 fill=#ff2470 /><rect x=1524 y=574 fill=#ff1f69 /><rect x=1532 y=574 fill=#ff1b61 /><rect x=1540 y=574 fill=#ff175b /><rect x=1548 y=574 fill=#ff1455 /><rect x=1556 y=574 fill=#ff104f /><rect x=1564 y=574 fill=#ff0d4a /><rect x=1572 y=574 fill=#ff0b45 /><rect x=1580 y=574 fill=#ff0840 /><rect x=1588 y=574 fill=#ff053c /><rect x=1596 y=574 fill=#ff0338 /><rect x=1604 y=574 fill=#ff0134 /><rect x=1612 y=574 fill=#ff0031 /><rect x=1620 y=574 fill=#ff002d /><rect x=1628 y=574 fill=#ff002a /><rect x=1636 y=574 fill=#ff0027 /><rect x=1644 y=574 fill=#ff0024 /><rect x=1652 y=574 fill=#ff0022 /><rect x=1660 y=574 fill=#ff001f /><rect x=1668 y=574 fill=#ff001d /><rect x=1676 y=574 fill=#ff001a /><rect x=1684 y=574 fill=#ff0018 /><rect x=1692 y=574 fill=#ff0016 /><rect x=1700 y=574 fill=#ff0014 /><rect x=1708 y=574 fill=#ff0012 /><rect x=1716 y=574 fill=#ff0010 /><rect x=1724 y=574 fill=#ff000f /><rect x=1732 y=574 fill=#ff000d /><rect x=1740 y=574 fill=#ff000b /><rect x=1748 y=574 fill=#ff000a /><rect x=1756 y=574 fill=#ff0008 /><rect x=1764 y=574 fill=#ff0007 /><rect x=1772 y=574 fill=#ff0005 /><rect x=1780 y=574 fill=#ff0004 /><rect x=1788 y=574 fill=#ff0003 /><rect x=1796 y=574 fill=#ff0002 /><rect x=1804 y=574 fill=#ff0000 /><rect x=1812 y=574 fill=#ff0000 /><rect x=1820 y=574 fill=#ff0000 /><rect x=1196 y=582 fill=#00a3ff /><rect x=1204 y=582 fill=#00a2ff /><rect x=1212 y=582 fill=#00a1ff /><rect x=1220 y=582 fill=#009fff /><rect x=1228 y=582 fill=#009eff /><rect x=1236 y=582 fill=#009dff /><rect x=1244 y=582 fill=#009bff /><rect x=1252 y=582 fill=#009aff /><rect x=1260 y=582 fill=#0098ff /><rect x=1268 y=582 fill=#0097ff /><rect x=1276 y=582 fill=#0095ff /><rect x=1284 y=582 fill=#0094ff /><rect x=1292 y=582 fill=#0092ff /><rect x=1300 y=582 fill=#0090ff /><rect x=1308 y=582 fill=#008eff /><rect x=1316 y=582 fill=#008dff /><rect x=1324 y=582 fill=#008bff /><rect x=1332 y=582 fill=#0089ff /><rect x=1340 y=582 fill=#0687ff /><rect x=1348 y=582 fill=#1785ff /><rect x=1356 y=582 fill=#2782ff /><rect x=1364 y=582 fill=#3980ff /><rect x=1372 y=582 fill=#4b7eff /><rect x=1380 y=582 fill=#5e7bff /><rect x=1388 y=582 fill=#7179ff /><rect x=1396 y=582 fill=#8576ff /><rect x=1404 y=582 fill=#9a74ff /><rect x=1412 y=582 fill=#b071ff /><rect x=1420 y=582 fill=#c76eff /><rect x=1428 y=582 fill=#de6bff /><rect x=1436 y=582 fill=#f768ff /><rect x=1444 y=582 fill=#ff5eef /><rect x=1452 y=582 fill=#ff53d9 /><rect x=1460 y=582 fill=#ff49c7 /><rect x=1468 y=582 fill=#ff40b6 /><rect x=1476 y=582 fill=#ff39a8 /><rect x=1484 y=582 fill=#ff329b /><rect x=1492 y=582 fill=#ff2c90 /><rect x=1500 y=582 fill=#ff2685 /><rect x=1508 y=582 fill=#ff217c /><rect x=1516 y=582 fill=#ff1d73 /><rect x=1524 y=582 fill=#ff186b /><rect x=1532 y=582 fill=#ff1564 /><rect x=1540 y=582 fill=#ff115e /><rect x=1548 y=582 fill=#ff0e57 /><rect x=1556 y=582 fill=#ff0b52 /><rect x=1564 y=582 fill=#ff084c /><rect x=1572 y=582 fill=#ff0548 /><rect x=1580 y=582 fill=#ff0343 /><rect x=1588 y=582 fill=#ff013f /><rect x=1596 y=582 fill=#ff003b /><rect x=1604 y=582 fill=#ff0037 /><rect x=1612 y=582 fill=#ff0033 /><rect x=1620 y=582 fill=#ff0030 /><rect x=1628 y=582 fill=#ff002d /><rect x=1636 y=582 fill=#ff002a /><rect x=1644 y=582 fill=#ff0027 /><rect x=1652 y=582 fill=#ff0024 /><rect x=1660 y=582 fill=#ff0021 /><rect x=1668 y=582 fill=#ff001f /><rect x=1676 y=582 fill=#ff001d /><rect x=1684 y=582 fill=#ff001a /><rect x=1692 y=582 fill=#ff0018 /><rect x=1700 y=582 fill=#ff0016 /><rect x=1708 y=582 fill=#ff0014 /><rect x=1716 y=582 fill=#ff0012 /><rect x=1724 y=582 fill=#ff0011 /><rect x=1732 y=582 fill=#ff000f /><rect x=1740 y=582 fill=#ff000d /><rect x=1748 y=582 fill=#ff000c /><rect x=1756 y=582 fill=#ff000a /><rect x=1764 y=582 fill=#ff0009 /><rect x=1772 y=582 fill=#ff0007 /><rect x=1780 y=582 fill=#ff0006 /><rect x=1788 y=582 fill=#ff0005 /><rect x=1796 y=582 fill=#ff0003 /><rect x=1804 y=582 fill=#ff0002 /><rect x=1812 y=582 fill=#ff0001 /><rect x=1196 y=590 fill=#0099ff /><rect x=1204 y=590 fill=#0098ff /><rect x=1212 y=590 fill=#0096ff /><rect x=1220 y=590 fill=#0095ff /><rect x=1228 y=590 fill=#0093ff /><rect x=1236 y=590 fill=#0092ff /><rect x=1244 y=590 fill=#0091ff /><rect x=1252 y=590 fill=#008fff /><rect x=1260 y=590 fill=#008dff /><rect x=1268 y=590 fill=#008cff /><rect x=1276 y=590 fill=#008aff /><rect x=1284 y=590 fill=#0088ff /><rect x=1292 y=590 fill=#0086ff /><rect x=1300 y=590 fill=#0085ff /><rect x=1308 y=590 fill=#0083ff /><rect x=1316 y=590 fill=#0081ff /><rect x=1324 y=590 fill=#007fff /><rect x=1332 y=590 fill=#007dff /><rect x=1340 y=590 fill=#0b7aff /><rect x=1348 y=590 fill=#1b78ff /><rect x=1356 y=590 fill=#2c76ff /><rect x=1364 y=590 fill=#3d73ff /><rect x=1372 y=590 fill=#4f71ff /><rect x=1380 y=590 fill=#616eff /><rect x=1388 y=590 fill=#746cff /><rect x=1396 y=590 fill=#8769ff /><rect x=1404 y=590 fill=#9c66ff /><rect x=1412 y=590 fill=#b163ff /><rect x=1420 y=590 fill=#c760ff /><rect x=1428 y=590 fill=#de5dff /><rect x=1436 y=590 fill=#f65aff /><rect x=1444 y=590 fill=#ff51f0 /><rect x=1452 y=590 fill=#ff47db /><rect x=1460 y=590 fill=#ff3ec9 /><rect x=1468 y=590 fill=#ff36b9 /><rect x=1476 y=590 fill=#ff2fab /><rect x=1484 y=590 fill=#ff299e /><rect x=1492 y=590 fill=#ff2392 /><rect x=1500 y=590 fill=#ff1e88 /><rect x=1508 y=590 fill=#ff1a7f /><rect x=1516 y=590 fill=#ff1676 /><rect x=1524 y=590 fill=#ff126e /><rect x=1532 y=590 fill=#ff0e67 /><rect x=1540 y=590 fill=#ff0b60 /><rect x=1548 y=590 fill=#ff085a /><rect x=1556 y=590 fill=#ff0554 /><rect x=1564 y=590 fill=#ff034f /><rect x=1572 y=590 fill=#ff004a /><rect x=1580 y=590 fill=#ff0046 /><rect x=1588 y=590 fill=#ff0041 /><rect x=1596 y=590 fill=#ff003d /><rect x=1604 y=590 fill=#ff0039 /><rect x=1612 y=590 fill=#ff0036 /><rect x=1620 y=590 fill=#ff0032 /><rect x=1628 y=590 fill=#ff002f /><rect x=1636 y=590 fill=#ff002c /><rect x=1644 y=590 fill=#ff0029 /><rect x=1652 y=590 fill=#ff0026 /><rect x=1660 y=590 fill=#ff0024 /><rect x=1668 y=590 fill=#ff0021 /><rect x=1676 y=590 fill=#ff001f /><rect x=1684 y=590 fill=#ff001d /><rect x=1692 y=590 fill=#ff001a /><rect x=1700 y=590 fill=#ff0018 /><rect x=1708 y=590 fill=#ff0016 /><rect x=1716 y=590 fill=#ff0014 /><rect x=1724 y=590 fill=#ff0013 /><rect x=1732 y=590 fill=#ff0011 /><rect x=1740 y=590 fill=#ff000f /><rect x=1748 y=590 fill=#ff000e /><rect x=1756 y=590 fill=#ff000c /><rect x=1764 y=590 fill=#ff000b /><rect x=1772 y=590 fill=#ff0009 /><rect x=1780 y=590 fill=#ff0008 /><rect x=1788 y=590 fill=#ff0006 /><rect x=1796 y=590 fill=#ff0005 /><rect x=1196 y=598 fill=#008fff /><rect x=1204 y=598 fill=#008eff /><rect x=1212 y=598 fill=#008dff /><rect x=1220 y=598 fill=#008bff /><rect x=1228 y=598 fill=#0089ff /><rect x=1236 y=598 fill=#0088ff /><rect x=1244 y=598 fill=#0086ff /><rect x=1252 y=598 fill=#0085ff /><rect x=1260 y=598 fill=#0083ff /><rect x=1268 y=598 fill=#0081ff /><rect x=1276 y=598 fill=#007fff /><rect x=1284 y=598 fill=#007dff /><rect x=1292 y=598 fill=#007cff /><rect x=1300 y=598 fill=#007aff /><rect x=1308 y=598 fill=#0078ff /><rect x=1316 y=598 fill=#0075ff /><rect x=1324 y=598 fill=#0073ff /><rect x=1332 y=598 fill=#0171ff /><rect x=1340 y=598 fill=#106fff /><rect x=1348 y=598 fill=#206cff /><rect x=1356 y=598 fill=#306aff /><rect x=1364 y=598 fill=#4167ff /><rect x=1372 y=598 fill=#5265ff /><rect x=1380 y=598 fill=#6462ff /><rect x=1388 y=598 fill=#765fff /><rect x=1396 y=598 fill=#895cff /><rect x=1404 y=598 fill=#9d59ff /><rect x=1412 y=598 fill=#b256ff /><rect x=1420 y=598 fill=#c753ff /><rect x=1428 y=598 fill=#de50ff /><rect x=1436 y=598 fill=#f54cff /><rect x=1444 y=598 fill=#ff45f2 /><rect x=1452 y=598 fill=#ff3cdd /><rect x=1460 y=598 fill=#ff34cb /><rect x=1468 y=598 fill=#ff2dbb /><rect x=1476 y=598 fill=#ff26ad /><rect x=1484 y=598 fill=#ff21a0 /><rect x=1492 y=598 fill=#ff1c95 /><rect x=1500 y=598 fill=#ff178b /><rect x=1508 y=598 fill=#ff1381 /><rect x=1516 y=598 fill=#ff0f79 /><rect x=1524 y=598 fill=#ff0b71 /><rect x=1532 y=598 fill=#ff086a /><rect x=1540 y=598 fill=#ff0563 /><rect x=1548 y=598 fill=#ff035d /><rect x=1556 y=598 fill=#ff0057 /><rect x=1564 y=598 fill=#ff0052 /><rect x=1572 y=598 fill=#ff004d /><rect x=1580 y=598 fill=#ff0048 /><rect x=1588 y=598 fill=#ff0044 /><rect x=1596 y=598 fill=#ff0040 /><rect x=1604 y=598 fill=#ff003c /><rect x=1612 y=598 fill=#ff0038 /><rect x=1620 y=598 fill=#ff0035 /><rect x=1628 y=598 fill=#ff0031 /><rect x=1636 y=598 fill=#ff002e /><rect x=1644 y=598 fill=#ff002b /><rect x=1652 y=598 fill=#ff0029 /><rect x=1660 y=598 fill=#ff0026 /><rect x=1668 y=598 fill=#ff0023 /><rect x=1676 y=598 fill=#ff0021 /><rect x=1684 y=598 fill=#ff001f /><rect x=1692 y=598 fill=#ff001c /><rect x=1700 y=598 fill=#ff001a /><rect x=1708 y=598 fill=#ff0018 /><rect x=1716 y=598 fill=#ff0016 /><rect x=1724 y=598 fill=#ff0015 /><rect x=1732 y=598 fill=#ff0013 /><rect x=1740 y=598 fill=#ff0011 /><rect x=1748 y=598 fill=#ff000f /><rect x=1756 y=598 fill=#ff000e /><rect x=1764 y=598 fill=#ff000c /><rect x=1772 y=598 fill=#ff000b /><rect x=1196 y=606 fill=#0086ff /><rect x=1204 y=606 fill=#0085ff /><rect x=1212 y=606 fill=#0083ff /><rect x=1220 y=606 fill=#0081ff /><rect x=1228 y=606 fill=#0080ff /><rect x=1236 y=606 fill=#007eff /><rect x=1244 y=606 fill=#007cff /><rect x=1252 y=606 fill=#007bff /><rect x=1260 y=606 fill=#0079ff /><rect x=1268 y=606 fill=#0077ff /><rect x=1276 y=606 fill=#0075ff /><rect x=1284 y=606 fill=#0073ff /><rect x=1292 y=606 fill=#0071ff /><rect x=1300 y=606 fill=#006fff /><rect x=1308 y=606 fill=#006dff /><rect x=1316 y=606 fill=#006bff /><rect x=1324 y=606 fill=#0068ff /><rect x=1332 y=606 fill=#0666ff /><rect x=1340 y=606 fill=#1464ff /><rect x=1348 y=606 fill=#2461ff /><rect x=1356 y=606 fill=#345fff /><rect x=1364 y=606 fill=#445cff /><rect x=1372 y=606 fill=#5559ff /><rect x=1380 y=606 fill=#6756ff /><rect x=1388 y=606 fill=#7953ff /><rect x=1396 y=606 fill=#8b50ff /><rect x=1404 y=606 fill=#9f4dff /><rect x=1412 y=606 fill=#b34aff /><rect x=1420 y=606 fill=#c847ff /><rect x=1428 y=606 fill=#dd43ff /><rect x=1436 y=606 fill=#f43fff /><rect x=1444 y=606 fill=#ff39f3 /><rect x=1452 y=606 fill=#ff31df /><rect x=1460 y=606 fill=#ff2acd /><rect x=1468 y=606 fill=#ff23be /><rect x=1476 y=606 fill=#ff1eb0 /><rect x=1484 y=606 fill=#ff18a3 /><rect x=1492 y=606 fill=#ff1498 /><rect x=1500 y=606 fill=#ff108d /><rect x=1508 y=606 fill=#ff0c84 /><rect x=1516 y=606 fill=#ff087b /><rect x=1524 y=606 fill=#ff0574 /><rect x=1532 y=606 fill=#ff026c /><rect x=1540 y=606 fill=#ff0066 /><rect x=1548 y=606 fill=#ff005f /><rect x=1556 y=606 fill=#ff005a /><rect x=1564 y=606 fill=#ff0054 /><rect x=1572 y=606 fill=#ff004f /><rect x=1580 y=606 fill=#ff004b /><rect x=1588 y=606 fill=#ff0046 /><rect x=1596 y=606 fill=#ff0042 /><rect x=1604 y=606 fill=#ff003e /><rect x=1612 y=606 fill=#ff003a /><rect x=1620 y=606 fill=#ff0037 /><rect x=1628 y=606 fill=#ff0034 /><rect x=1636 y=606 fill=#ff0030 /><rect x=1644 y=606 fill=#ff002e /><rect x=1652 y=606 fill=#ff002b /><rect x=1660 y=606 fill=#ff0028 /><rect x=1668 y=606 fill=#ff0025 /><rect x=1676 y=606 fill=#ff0023 /><rect x=1684 y=606 fill=#ff0021 /><rect x=1692 y=606 fill=#ff001e /><rect x=1700 y=606 fill=#ff001c /><rect x=1708 y=606 fill=#ff001a /><rect x=1716 y=606 fill=#ff0018 /><rect x=1724 y=606 fill=#ff0016 /><rect x=1732 y=606 fill=#ff0015 /><rect x=1740 y=606 fill=#ff0013 /><rect x=1748 y=606 fill=#ff0011 /><rect x=1756 y=606 fill=#ff0010 /><rect x=1204 y=614 fill=#007cff /><rect x=1212 y=614 fill=#007aff /><rect x=1220 y=614 fill=#0078ff /><rect x=1228 y=614 fill=#0077ff /><rect x=1236 y=614 fill=#0075ff /><rect x=1244 y=614 fill=#0073ff /><rect x=1252 y=614 fill=#0071ff /><rect x=1260 y=614 fill=#006fff /><rect x=1268 y=614 fill=#006dff /><rect x=1276 y=614 fill=#006bff /><rect x=1284 y=614 fill=#0069ff /><rect x=1292 y=614 fill=#0067ff /><rect x=1300 y=614 fill=#0065ff /><rect x=1308 y=614 fill=#0063ff /><rect x=1316 y=614 fill=#0060ff /><rect x=1324 y=614 fill=#005eff /><rect x=1332 y=614 fill=#0a5cff /><rect x=1340 y=614 fill=#1959ff /><rect x=1348 y=614 fill=#2856ff /><rect x=1356 y=614 fill=#3754ff /><rect x=1364 y=614 fill=#4751ff /><rect x=1372 y=614 fill=#584eff /><rect x=1380 y=614 fill=#694bff /><rect x=1388 y=614 fill=#7b48ff /><rect x=1396 y=614 fill=#8d45ff /><rect x=1404 y=614 fill=#a042ff /><rect x=1412 y=614 fill=#b43eff /><rect x=1420 y=614 fill=#c83bff /><rect x=1428 y=614 fill=#dd37ff /><rect x=1436 y=614 fill=#f333ff /><rect x=1444 y=614 fill=#ff2ef5 /><rect x=1452 y=614 fill=#ff26e1 /><rect x=1460 y=614 fill=#ff20cf /><rect x=1468 y=614 fill=#ff1ac0 /><rect x=1476 y=614 fill=#ff15b2 /><rect x=1484 y=614 fill=#ff11a5 /><rect x=1492 y=614 fill=#ff0c9a /><rect x=1500 y=614 fill=#ff0990 /><rect x=1508 y=614 fill=#ff0587 /><rect x=1516 y=614 fill=#ff027e /><rect x=1524 y=614 fill=#ff0076 /><rect x=1532 y=614 fill=#ff006f /><rect x=1540 y=614 fill=#ff0068 /><rect x=1548 y=614 fill=#ff0062 /><rect x=1556 y=614 fill=#ff005c /><rect x=1564 y=614 fill=#ff0057 /><rect x=1572 y=614 fill=#ff0052 /><rect x=1580 y=614 fill=#ff004d /><rect x=1588 y=614 fill=#ff0049 /><rect x=1596 y=614 fill=#ff0044 /><rect x=1604 y=614 fill=#ff0040 /><rect x=1612 y=614 fill=#ff003d /><rect x=1620 y=614 fill=#ff0039 /><rect x=1628 y=614 fill=#ff0036 /><rect x=1636 y=614 fill=#ff0033 /><rect x=1644 y=614 fill=#ff0030 /><rect x=1652 y=614 fill=#ff002d /><rect x=1660 y=614 fill=#ff002a /><rect x=1668 y=614 fill=#ff0028 /><rect x=1676 y=614 fill=#ff0025 /><rect x=1684 y=614 fill=#ff0023 /><rect x=1692 y=614 fill=#ff0020 /><rect x=1700 y=614 fill=#ff001e /><rect x=1708 y=614 fill=#ff001c /><rect x=1716 y=614 fill=#ff001a /><rect x=1724 y=614 fill=#ff0018 /><rect x=1732 y=614 fill=#ff0017 /><rect x=1204 y=622 fill=#0073ff /><rect x=1212 y=622 fill=#0071ff /><rect x=1220 y=622 fill=#006fff /><rect x=1228 y=622 fill=#006eff /><rect x=1236 y=622 fill=#006cff /><rect x=1244 y=622 fill=#006aff /><rect x=1252 y=622 fill=#0068ff /><rect x=1260 y=622 fill=#0066ff /><rect x=1268 y=622 fill=#0064ff /><rect x=1276 y=622 fill=#0062ff /><rect x=1284 y=622 fill=#0060ff /><rect x=1292 y=622 fill=#005dff /><rect x=1300 y=622 fill=#005bff /><rect x=1308 y=622 fill=#0059ff /><rect x=1316 y=622 fill=#0056ff /><rect x=1324 y=622 fill=#0054ff /><rect x=1332 y=622 fill=#0e51ff /><rect x=1340 y=622 fill=#1d4fff /><rect x=1348 y=622 fill=#2c4cff /><rect x=1356 y=622 fill=#3b49ff /><rect x=1364 y=622 fill=#4b46ff /><rect x=1372 y=622 fill=#5b44ff /><rect x=1380 y=622 fill=#6c40ff /><rect x=1388 y=622 fill=#7d3dff /><rect x=1396 y=622 fill=#8f3aff /><rect x=1404 y=622 fill=#a137ff /><rect x=1412 y=622 fill=#b433ff /><rect x=1420 y=622 fill=#c830ff /><rect x=1428 y=622 fill=#dd2cff /><rect x=1436 y=622 fill=#f228ff /><rect x=1444 y=622 fill=#ff23f6 /><rect x=1452 y=622 fill=#ff1ce3 /><rect x=1460 y=622 fill=#ff17d1 /><rect x=1468 y=622 fill=#ff12c2 /><rect x=1476 y=622 fill=#ff0db4 /><rect x=1484 y=622 fill=#ff09a8 /><rect x=1492 y=622 fill=#ff059d /><rect x=1500 y=622 fill=#ff0292 /><rect x=1508 y=622 fill=#ff0089 /><rect x=1516 y=622 fill=#ff0080 /><rect x=1524 y=622 fill=#ff0079 /><rect x=1532 y=622 fill=#ff0071 /><rect x=1540 y=622 fill=#ff006b /><rect x=1548 y=622 fill=#ff0064 /><rect x=1556 y=622 fill=#ff005f /><rect x=1564 y=622 fill=#ff0059 /><rect x=1572 y=622 fill=#ff0054 /><rect x=1580 y=622 fill=#ff004f /><rect x=1588 y=622 fill=#ff004b /><rect x=1596 y=622 fill=#ff0047 /><rect x=1604 y=622 fill=#ff0043 /><rect x=1612 y=622 fill=#ff003f /><rect x=1620 y=622 fill=#ff003b /><rect x=1628 y=622 fill=#ff0038 /><rect x=1636 y=622 fill=#ff0035 /><rect x=1644 y=622 fill=#ff0032 /><rect x=1652 y=622 fill=#ff002f /><rect x=1660 y=622 fill=#ff002c /><rect x=1668 y=622 fill=#ff002a /><rect x=1676 y=622 fill=#ff0027 /><rect x=1684 y=622 fill=#ff0025 /><rect x=1692 y=622 fill=#ff0022 /><rect x=1700 y=622 fill=#ff0020 /><rect x=1708 y=622 fill=#ff001e /><rect x=1716 y=622 fill=#ff001c /><rect x=1204 y=630 fill=#006aff /><rect x=1212 y=630 fill=#0069ff /><rect x=1220 y=630 fill=#0067ff /><rect x=1228 y=630 fill=#0065ff /><rect x=1236 y=630 fill=#0063ff /><rect x=1244 y=630 fill=#0061ff /><rect x=1252 y=630 fill=#005fff /><rect x=1260 y=630 fill=#005dff /><rect x=1268 y=630 fill=#005bff /><rect x=1276 y=630 fill=#0059ff /><rect x=1284 y=630 fill=#0057ff /><rect x=1292 y=630 fill=#0054ff /><rect x=1300 y=630 fill=#0052ff /><rect x=1308 y=630 fill=#004fff /><rect x=1316 y=630 fill=#004dff /><rect x=1324 y=630 fill=#054aff /><rect x=1332 y=630 fill=#1348ff /><rect x=1340 y=630 fill=#2145ff /><rect x=1348 y=630 fill=#2f42ff /><rect x=1356 y=630 fill=#3e3fff /><rect x=1364 y=630 fill=#4e3dff /><rect x=1372 y=630 fill=#5e39ff /><rect x=1380 y=630 fill=#6e36ff /><rect x=1388 y=630 fill=#7f33ff /><rect x=1396 y=630 fill=#9030ff /><rect x=1404 y=630 fill=#a32cff /><rect x=1412 y=630 fill=#b529ff /><rect x=1420 y=630 fill=#c825ff /><rect x=1428 y=630 fill=#dc21ff /><rect x=1436 y=630 fill=#f11dff /><rect x=1444 y=630 fill=#ff18f8 /><rect x=1452 y=630 fill=#ff13e4 /><rect x=1460 y=630 fill=#ff0ed3 /><rect x=1468 y=630 fill=#ff09c4 /><rect x=1476 y=630 fill=#ff05b6 /><rect x=1484 y=630 fill=#ff02aa /><rect x=1492 y=630 fill=#ff009f /><rect x=1500 y=630 fill=#ff0095 /><rect x=1508 y=630 fill=#ff008b /><rect x=1516 y=630 fill=#ff0083 /><rect x=1524 y=630 fill=#ff007b /><rect x=1532 y=630 fill=#ff0074 /><rect x=1540 y=630 fill=#ff006d /><rect x=1548 y=630 fill=#ff0067 /><rect x=1556 y=630 fill=#ff0061 /><rect x=1564 y=630 fill=#ff005c /><rect x=1572 y=630 fill=#ff0056 /><rect x=1580 y=630 fill=#ff0052 /><rect x=1588 y=630 fill=#ff004d /><rect x=1596 y=630 fill=#ff0049 /><rect x=1604 y=630 fill=#ff0045 /><rect x=1612 y=630 fill=#ff0041 /><rect x=1620 y=630 fill=#ff003e /><rect x=1628 y=630 fill=#ff003a /><rect x=1636 y=630 fill=#ff0037 /><rect x=1644 y=630 fill=#ff0034 /><rect x=1652 y=630 fill=#ff0031 /><rect x=1660 y=630 fill=#ff002e /><rect x=1668 y=630 fill=#ff002c /><rect x=1676 y=630 fill=#ff0029 /><rect x=1684 y=630 fill=#ff0027 /><rect x=1692 y=630 fill=#ff0024 /><rect x=1212 y=638 fill=#0060ff /><rect x=1220 y=638 fill=#005fff /><rect x=1228 y=638 fill=#005dff /><rect x=1236 y=638 fill=#005bff /><rect x=1244 y=638 fill=#0059ff /><rect x=1252 y=638 fill=#0057ff /><rect x=1260 y=638 fill=#0054ff /><rect x=1268 y=638 fill=#0052ff /><rect x=1276 y=638 fill=#0050ff /><rect x=1284 y=638 fill=#004eff /><rect x=1292 y=638 fill=#004bff /><rect x=1300 y=638 fill=#0049ff /><rect x=1308 y=638 fill=#0046ff /><rect x=1316 y=638 fill=#0044ff /><rect x=1324 y=638 fill=#0941ff /><rect x=1332 y=638 fill=#173fff /><rect x=1340 y=638 fill=#243cff /><rect x=1348 y=638 fill=#3339ff /><rect x=1356 y=638 fill=#4136ff /><rect x=1364 y=638 fill=#5133ff /><rect x=1372 y=638 fill=#6030ff /><rect x=1380 y=638 fill=#702dff /><rect x=1388 y=638 fill=#8129ff /><rect x=1396 y=638 fill=#9226ff /><rect x=1404 y=638 fill=#a422ff /><rect x=1412 y=638 fill=#b61fff /><rect x=1420 y=638 fill=#c91bff /><rect x=1428 y=638 fill=#dc17ff /><rect x=1436 y=638 fill=#f013ff /><rect x=1444 y=638 fill=#ff0ff9 /><rect x=1452 y=638 fill=#ff0ae6 /><rect x=1460 y=638 fill=#ff05d5 /><rect x=1468 y=638 fill=#ff01c6 /><rect x=1476 y=638 fill=#ff00b8 /><rect x=1484 y=638 fill=#ff00ac /><rect x=1492 y=638 fill=#ff00a1 /><rect x=1500 y=638 fill=#ff0097 /><rect x=1508 y=638 fill=#ff008e /><rect x=1516 y=638 fill=#ff0085 /><rect x=1524 y=638 fill=#ff007d /><rect x=1532 y=638 fill=#ff0076 /><rect x=1540 y=638 fill=#ff006f /><rect x=1548 y=638 fill=#ff0069 /><rect x=1556 y=638 fill=#ff0063 /><rect x=1564 y=638 fill=#ff005e /><rect x=1572 y=638 fill=#ff0059 /><rect x=1580 y=638 fill=#ff0054 /><rect x=1588 y=638 fill=#ff004f /><rect x=1596 y=638 fill=#ff004b /><rect x=1604 y=638 fill=#ff0047 /><rect x=1612 y=638 fill=#ff0043 /><rect x=1620 y=638 fill=#ff0040 /><rect x=1628 y=638 fill=#ff003c /><rect x=1636 y=638 fill=#ff0039 /><rect x=1644 y=638 fill=#ff0036 /><rect x=1652 y=638 fill=#ff0033 /><rect x=1660 y=638 fill=#ff0030 /><rect x=1668 y=638 fill=#ff002e /><rect x=1676 y=638 fill=#ff002b /><rect x=1212 y=646 fill=#0059ff /><rect x=1220 y=646 fill=#0057ff /><rect x=1228 y=646 fill=#0055ff /><rect x=1236 y=646 fill=#0053ff /><rect x=1244 y=646 fill=#0050ff /><rect x=1252 y=646 fill=#004eff /><rect x=1260 y=646 fill=#004cff /><rect x=1268 y=646 fill=#004aff /><rect x=1276 y=646 fill=#0048ff /><rect x=1284 y=646 fill=#0045ff /><rect x=1292 y=646 fill=#0043ff /><rect x=1300 y=646 fill=#0040ff /><rect x=1308 y=646 fill=#003eff /><rect x=1316 y=646 fill=#003bff /><rect x=1324 y=646 fill=#0d38ff /><rect x=1332 y=646 fill=#1a36ff /><rect x=1340 y=646 fill=#2833ff /><rect x=1348 y=646 fill=#3630ff /><rect x=1356 y=646 fill=#452dff /><rect x=1364 y=646 fill=#532aff /><rect x=1372 y=646 fill=#6327ff /><rect x=1380 y=646 fill=#7223ff /><rect x=1388 y=646 fill=#8320ff /><rect x=1396 y=646 fill=#931dff /><rect x=1404 y=646 fill=#a519ff /><rect x=1412 y=646 fill=#b715ff /><rect x=1420 y=646 fill=#c911ff /><rect x=1428 y=646 fill=#dc0dff /><rect x=1436 y=646 fill=#f009ff /><rect x=1444 y=646 fill=#ff05fa /><rect x=1452 y=646 fill=#ff01e7 /><rect x=1460 y=646 fill=#ff00d7 /><rect x=1468 y=646 fill=#ff00c8 /><rect x=1476 y=646 fill=#ff00bb /><rect x=1484 y=646 fill=#ff00ae /><rect x=1492 y=646 fill=#ff00a3 /><rect x=1500 y=646 fill=#ff0099 /><rect x=1508 y=646 fill=#ff0090 /><rect x=1516 y=646 fill=#ff0088 /><rect x=1524 y=646 fill=#ff0080 /><rect x=1532 y=646 fill=#ff0079 /><rect x=1540 y=646 fill=#ff0072 /><rect x=1548 y=646 fill=#ff006b /><rect x=1556 y=646 fill=#ff0066 /><rect x=1564 y=646 fill=#ff0060 /><rect x=1572 y=646 fill=#ff005b /><rect x=1580 y=646 fill=#ff0056 /><rect x=1588 y=646 fill=#ff0052 /><rect x=1596 y=646 fill=#ff004d /><rect x=1604 y=646 fill=#ff0049 /><rect x=1612 y=646 fill=#ff0046 /><rect x=1620 y=646 fill=#ff0042 /><rect x=1628 y=646 fill=#ff003e /><rect x=1636 y=646 fill=#ff003b /><rect x=1644 y=646 fill=#ff0038 /><rect x=1652 y=646 fill=#ff0035 /><rect x=1212 y=654 fill=#0051ff /><rect x=1220 y=654 fill=#004fff /><rect x=1228 y=654 fill=#004dff /><rect x=1236 y=654 fill=#004bff /><rect x=1244 y=654 fill=#0049ff /><rect x=1252 y=654 fill=#0046ff /><rect x=1260 y=654 fill=#0044ff /><rect x=1268 y=654 fill=#0042ff /><rect x=1276 y=654 fill=#0040ff /><rect x=1284 y=654 fill=#003dff /><rect x=1292 y=654 fill=#003bff /><rect x=1300 y=654 fill=#0038ff /><rect x=1308 y=654 fill=#0035ff /><rect x=1316 y=654 fill=#0433ff /><rect x=1324 y=654 fill=#1130ff /><rect x=1332 y=654 fill=#1e2dff /><rect x=1340 y=654 fill=#2c2aff /><rect x=1348 y=654 fill=#3927ff /><rect x=1356 y=654 fill=#4824ff /><rect x=1364 y=654 fill=#5621ff /><rect x=1372 y=654 fill=#651eff /><rect x=1380 y=654 fill=#751bff /><rect x=1388 y=654 fill=#8417ff /><rect x=1396 y=654 fill=#9514ff /><rect x=1404 y=654 fill=#a610ff /><rect x=1412 y=654 fill=#b70cff /><rect x=1420 y=654 fill=#c908ff /><rect x=1428 y=654 fill=#dc04ff /><rect x=1436 y=654 fill=#ef00ff /><rect x=1444 y=654 fill=#ff00fb /><rect x=1452 y=654 fill=#ff00e9 /><rect x=1460 y=654 fill=#ff00d9 /><rect x=1468 y=654 fill=#ff00ca /><rect x=1476 y=654 fill=#ff00bd /><rect x=1484 y=654 fill=#ff00b0 /><rect x=1492 y=654 fill=#ff00a6 /><rect x=1500 y=654 fill=#ff009c /><rect x=1508 y=654 fill=#ff0092 /><rect x=1516 y=654 fill=#ff008a /><rect x=1524 y=654 fill=#ff0082 /><rect x=1532 y=654 fill=#ff007b /><rect x=1540 y=654 fill=#ff0074 /><rect x=1548 y=654 fill=#ff006e /><rect x=1556 y=654 fill=#ff0068 /><rect x=1564 y=654 fill=#ff0062 /><rect x=1572 y=654 fill=#ff005d /><rect x=1580 y=654 fill=#ff0058 /><rect x=1588 y=654 fill=#ff0054 /><rect x=1596 y=654 fill=#ff0050 /><rect x=1604 y=654 fill=#ff004b /><rect x=1612 y=654 fill=#ff0048 /><rect x=1620 y=654 fill=#ff0044 /><rect x=1628 y=654 fill=#ff0041 /><rect x=1636 y=654 fill=#ff003d /><rect x=1220 y=662 fill=#0047ff /><rect x=1228 y=662 fill=#0045ff /><rect x=1236 y=662 fill=#0043ff /><rect x=1244 y=662 fill=#0041ff /><rect x=1252 y=662 fill=#003fff /><rect x=1260 y=662 fill=#003cff /><rect x=1268 y=662 fill=#003aff /><rect x=1276 y=662 fill=#0038ff /><rect x=1284 y=662 fill=#0035ff /><rect x=1292 y=662 fill=#0033ff /><rect x=1300 y=662 fill=#0030ff /><rect x=1308 y=662 fill=#002dff /><rect x=1316 y=662 fill=#082bff /><rect x=1324 y=662 fill=#1528ff /><rect x=1332 y=662 fill=#2225ff /><rect x=1340 y=662 fill=#2f22ff /><rect x=1348 y=662 fill=#3c1fff /><rect x=1356 y=662 fill=#4a1cff /><rect x=1364 y=662 fill=#5919ff /><rect x=1372 y=662 fill=#6715ff /><rect x=1380 y=662 fill=#7712ff /><rect x=1388 y=662 fill=#860fff /><rect x=1396 y=662 fill=#960bff /><rect x=1404 y=662 fill=#a707ff /><rect x=1412 y=662 fill=#b803ff /><rect x=1420 y=662 fill=#c900ff /><rect x=1428 y=662 fill=#db00ff /><rect x=1436 y=662 fill=#ee00ff /><rect x=1444 y=662 fill=#ff00fd /><rect x=1452 y=662 fill=#ff00ea /><rect x=1460 y=662 fill=#ff00da /><rect x=1468 y=662 fill=#ff00cc /><rect x=1476 y=662 fill=#ff00be /><rect x=1484 y=662 fill=#ff00b2 /><rect x=1492 y=662 fill=#ff00a8 /><rect x=1500 y=662 fill=#ff009e /><rect x=1508 y=662 fill=#ff0094 /><rect x=1516 y=662 fill=#ff008c /><rect x=1524 y=662 fill=#ff0084 /><rect x=1532 y=662 fill=#ff007d /><rect x=1540 y=662 fill=#ff0076 /><rect x=1548 y=662 fill=#ff0070 /><rect x=1556 y=662 fill=#ff006a /><rect x=1564 y=662 fill=#ff0065 /><rect x=1572 y=662 fill=#ff005f /><rect x=1580 y=662 fill=#ff005b /><rect x=1588 y=662 fill=#ff0056 /><rect x=1596 y=662 fill=#ff0052 /><rect x=1604 y=662 fill=#ff004e /><rect x=1612 y=662 fill=#ff004a /><rect x=1220 y=670 fill=#0040ff /><rect x=1228 y=670 fill=#003eff /><rect x=1236 y=670 fill=#003cff /><rect x=1244 y=670 fill=#003aff /><rect x=1252 y=670 fill=#0037ff /><rect x=1260 y=670 fill=#0035ff /><rect x=1268 y=670 fill=#0033ff /><rect x=1276 y=670 fill=#0030ff /><rect x=1284 y=670 fill=#002eff /><rect x=1292 y=670 fill=#002bff /><rect x=1300 y=670 fill=#0028ff /><rect x=1308 y=670 fill=#0026ff /><rect x=1316 y=670 fill=#0c23ff /><rect x=1324 y=670 fill=#1820ff /><rect x=1332 y=670 fill=#251dff /><rect x=1340 y=670 fill=#321aff /><rect x=1348 y=670 fill=#3f17ff /><rect x=1356 y=670 fill=#4d14ff /><rect x=1364 y=670 fill=#5b11ff /><rect x=1372 y=670 fill=#6a0dff /><rect x=1380 y=670 fill=#780aff /><rect x=1388 y=670 fill=#8806ff /><rect x=1396 y=670 fill=#9703ff /><rect x=1404 y=670 fill=#a800ff /><rect x=1412 y=670 fill=#b800ff /><rect x=1420 y=670 fill=#ca00ff /><rect x=1428 y=670 fill=#db00ff /><rect x=1436 y=670 fill=#ee00ff /><rect x=1444 y=670 fill=#ff00fe /><rect x=1452 y=670 fill=#ff00ec /><rect x=1460 y=670 fill=#ff00dc /><rect x=1468 y=670 fill=#ff00cd /><rect x=1476 y=670 fill=#ff00c0 /><rect x=1484 y=670 fill=#ff00b4 /><rect x=1492 y=670 fill=#ff00aa /><rect x=1500 y=670 fill=#ff00a0 /><rect x=1508 y=670 fill=#ff0097 /><rect x=1516 y=670 fill=#ff008e /><rect x=1524 y=670 fill=#ff0086 /><rect x=1532 y=670 fill=#ff007f /><rect x=1540 y=670 fill=#ff0078 /><rect x=1548 y=670 fill=#ff0072 /><rect x=1556 y=670 fill=#ff006c /><rect x=1564 y=670 fill=#ff0067 /><rect x=1572 y=670 fill=#ff0062 /><rect x=1580 y=670 fill=#ff005d /><rect x=1588 y=670 fill=#ff0058 /><rect x=1596 y=670 fill=#ff0054 /><rect x=1228 y=678 fill=#0037ff /><rect x=1236 y=678 fill=#0035ff /><rect x=1244 y=678 fill=#0033ff /><rect x=1252 y=678 fill=#0030ff /><rect x=1260 y=678 fill=#002eff /><rect x=1268 y=678 fill=#002bff /><rect x=1276 y=678 fill=#0029ff /><rect x=1284 y=678 fill=#0026ff /><rect x=1292 y=678 fill=#0024ff /><rect x=1300 y=678 fill=#0021ff /><rect x=1308 y=678 fill=#041eff /><rect x=1316 y=678 fill=#101bff /><rect x=1324 y=678 fill=#1c19ff /><rect x=1332 y=678 fill=#2816ff /><rect x=1340 y=678 fill=#3513ff /><rect x=1348 y=678 fill=#420fff /><rect x=1356 y=678 fill=#500cff /><rect x=1364 y=678 fill=#5d09ff /><rect x=1372 y=678 fill=#6c06ff /><rect x=1380 y=678 fill=#7a02ff /><rect x=1388 y=678 fill=#8900ff /><rect x=1396 y=678 fill=#9900ff /><rect x=1404 y=678 fill=#a900ff /><rect x=1412 y=678 fill=#b900ff /><rect x=1420 y=678 fill=#ca00ff /><rect x=1428 y=678 fill=#db00ff /><rect x=1436 y=678 fill=#ed00ff /><rect x=1444 y=678 fill=#ff00ff /><rect x=1452 y=678 fill=#ff00ed /><rect x=1460 y=678 fill=#ff00dd /><rect x=1468 y=678 fill=#ff00cf /><rect x=1476 y=678 fill=#ff00c2 /><rect x=1484 y=678 fill=#ff00b6 /><rect x=1492 y=678 fill=#ff00ac /><rect x=1500 y=678 fill=#ff00a2 /><rect x=1508 y=678 fill=#ff0099 /><rect x=1516 y=678 fill=#ff0090 /><rect x=1524 y=678 fill=#ff0088 /><rect x=1532 y=678 fill=#ff0081 /><rect x=1540 y=678 fill=#ff007b /><rect x=1548 y=678 fill=#ff0074 /><rect x=1556 y=678 fill=#ff006e /><rect x=1564 y=678 fill=#ff0069 /><rect x=1572 y=678 fill=#ff0064 /><rect x=1228 y=686 fill=#0030ff /><rect x=1236 y=686 fill=#002eff /><rect x=1244 y=686 fill=#002cff /><rect x=1252 y=686 fill=#0029ff /><rect x=1260 y=686 fill=#0027ff /><rect x=1268 y=686 fill=#0024ff /><rect x=1276 y=686 fill=#0022ff /><rect x=1284 y=686 fill=#001fff /><rect x=1292 y=686 fill=#001dff /><rect x=1300 y=686 fill=#001aff /><rect x=1308 y=686 fill=#0717ff /><rect x=1316 y=686 fill=#1314ff /><rect x=1324 y=686 fill=#1f11ff /><rect x=1332 y=686 fill=#2b0eff /><rect x=1340 y=686 fill=#380bff /><rect x=1348 y=686 fill=#4508ff /><rect x=1356 y=686 fill=#5205ff /><rect x=1364 y=686 fill=#6002ff /><rect x=1372 y=686 fill=#6e00ff /><rect x=1380 y=686 fill=#7c00ff /><rect x=1388 y=686 fill=#8b00ff /><rect x=1396 y=686 fill=#9a00ff /><rect x=1404 y=686 fill=#a900ff /><rect x=1412 y=686 fill=#b900ff /><rect x=1420 y=686 fill=#ca00ff /><rect x=1428 y=686 fill=#db00ff /><rect x=1436 y=686 fill=#ec00ff /><rect x=1444 y=686 fill=#fe00ff /><rect x=1452 y=686 fill=#ff00ee /><rect x=1460 y=686 fill=#ff00df /><rect x=1468 y=686 fill=#ff00d1 /><rect x=1476 y=686 fill=#ff00c4 /><rect x=1484 y=686 fill=#ff00b8 /><rect x=1492 y=686 fill=#ff00ae /><rect x=1500 y=686 fill=#ff00a4 /><rect x=1508 y=686 fill=#ff009b /><rect x=1516 y=686 fill=#ff0092 /><rect x=1524 y=686 fill=#ff008b /><rect x=1532 y=686 fill=#ff0083 /><rect x=1540 y=686 fill=#ff007d /><rect x=1548 y=686 fill=#ff0076 /><rect x=1556 y=686 fill=#ff0070 /><rect x=1236 y=694 fill=#0027ff /><rect x=1244 y=694 fill=#0025ff /><rect x=1252 y=694 fill=#0023ff /><rect x=1260 y=694 fill=#0020ff /><rect x=1268 y=694 fill=#001eff /><rect x=1276 y=694 fill=#001bff /><rect x=1284 y=694 fill=#0018ff /><rect x=1292 y=694 fill=#0016ff /><rect x=1300 y=694 fill=#0013ff /><rect x=1308 y=694 fill=#0b10ff /><rect x=1316 y=694 fill=#170dff /><rect x=1324 y=694 fill=#220aff /><rect x=1332 y=694 fill=#2e07ff /><rect x=1340 y=694 fill=#3b04ff /><rect x=1348 y=694 fill=#4801ff /><rect x=1356 y=694 fill=#5500ff /><rect x=1364 y=694 fill=#6200ff /><rect x=1372 y=694 fill=#7000ff /><rect x=1380 y=694 fill=#7e00ff /><rect x=1388 y=694 fill=#8c00ff /><rect x=1396 y=694 fill=#9b00ff /><rect x=1404 y=694 fill=#aa00ff /><rect x=1412 y=694 fill=#ba00ff /><rect x=1420 y=694 fill=#ca00ff /><rect x=1428 y=694 fill=#db00ff /><rect x=1436 y=694 fill=#ec00ff /><rect x=1444 y=694 fill=#fd00ff /><rect x=1452 y=694 fill=#ff00f0 /><rect x=1460 y=694 fill=#ff00e0 /><rect x=1468 y=694 fill=#ff00d2 /><rect x=1476 y=694 fill=#ff00c6 /><rect x=1484 y=694 fill=#ff00ba /><rect x=1492 y=694 fill=#ff00af /><rect x=1500 y=694 fill=#ff00a6 /><rect x=1508 y=694 fill=#ff009d /><rect x=1516 y=694 fill=#ff0094 /><rect x=1524 y=694 fill=#ff008d /><rect x=1532 y=694 fill=#ff0085 /><rect x=1236 y=702 fill=#0021ff /><rect x=1244 y=702 fill=#001fff /><rect x=1252 y=702 fill=#001cff /><rect x=1260 y=702 fill=#001aff /><rect x=1268 y=702 fill=#0017ff /><rect x=1276 y=702 fill=#0015ff /><rect x=1284 y=702 fill=#0012ff /><rect x=1292 y=702 fill=#000fff /><rect x=1300 y=702 fill=#030cff /><rect x=1308 y=702 fill=#0e0aff /><rect x=1316 y=702 fill=#1a07ff /><rect x=1324 y=702 fill=#2504ff /><rect x=1332 y=702 fill=#3101ff /><rect x=1340 y=702 fill=#3e00ff /><rect x=1348 y=702 fill=#4a00ff /><rect x=1356 y=702 fill=#5700ff /><rect x=1364 y=702 fill=#6400ff /><rect x=1372 y=702 fill=#7200ff /><rect x=1380 y=702 fill=#7f00ff /><rect x=1388 y=702 fill=#8e00ff /><rect x=1396 y=702 fill=#9c00ff /><rect x=1404 y=702 fill=#ab00ff /><rect x=1412 y=702 fill=#ba00ff /><rect x=1420 y=702 fill=#ca00ff /><rect x=1428 y=702 fill=#db00ff /><rect x=1436 y=702 fill=#eb00ff /><rect x=1444 y=702 fill=#fc00ff /><rect x=1452 y=702 fill=#ff00f1 /><rect x=1460 y=702 fill=#ff00e2 /><rect x=1468 y=702 fill=#ff00d4 /><rect x=1476 y=702 fill=#ff00c7 /><rect x=1484 y=702 fill=#ff00bc /><rect x=1492 y=702 fill=#ff00b1 /><rect x=1500 y=702 fill=#ff00a7 /><rect x=1508 y=702 fill=#ff009f /><rect x=1516 y=702 fill=#ff0096 /><rect x=1244 y=710 fill=#0018ff /><rect x=1252 y=710 fill=#0016ff /><rect x=1260 y=710 fill=#0013ff /><rect x=1268 y=710 fill=#0011ff /><rect x=1276 y=710 fill=#000eff /><rect x=1284 y=710 fill=#000bff /><rect x=1292 y=710 fill=#0009ff /><rect x=1300 y=710 fill=#0706ff /><rect x=1308 y=710 fill=#1203ff /><rect x=1316 y=710 fill=#1d00ff /><rect x=1324 y=710 fill=#2800ff /><rect x=1332 y=710 fill=#3400ff /><rect x=1340 y=710 fill=#4000ff /><rect x=1348 y=710 fill=#4d00ff /><rect x=1356 y=710 fill=#5900ff /><rect x=1364 y=710 fill=#6600ff /><rect x=1372 y=710 fill=#7300ff /><rect x=1380 y=710 fill=#8100ff /><rect x=1388 y=710 fill=#8f00ff /><rect x=1396 y=710 fill=#9d00ff /><rect x=1404 y=710 fill=#ac00ff /><rect x=1412 y=710 fill=#bb00ff /><rect x=1420 y=710 fill=#ca00ff /><rect x=1428 y=710 fill=#da00ff /><rect x=1436 y=710 fill=#eb00ff /><rect x=1444 y=710 fill=#fc00ff /><rect x=1452 y=710 fill=#ff00f2 /><rect x=1460 y=710 fill=#ff00e3 /><rect x=1468 y=710 fill=#ff00d5 /><rect x=1476 y=710 fill=#ff00c9 /><rect x=1484 y=710 fill=#ff00bd /><rect x=1492 y=710 fill=#ff00b3 /><rect x=1244 y=718 fill=#0012ff /><rect x=1252 y=718 fill=#0010ff /><rect x=1260 y=718 fill=#000dff /><rect x=1268 y=718 fill=#000bff /><rect x=1276 y=718 fill=#0008ff /><rect x=1284 y=718 fill=#0005ff /><rect x=1292 y=718 fill=#0003ff /><rect x=1300 y=718 fill=#0a00ff /><rect x=1308 y=718 fill=#1500ff /><rect x=1316 y=718 fill=#2000ff /><rect x=1324 y=718 fill=#2b00ff /><rect x=1332 y=718 fill=#3700ff /><rect x=1340 y=718 fill=#4300ff /><rect x=1348 y=718 fill=#4f00ff /><rect x=1356 y=718 fill=#5b00ff /><rect x=1364 y=718 fill=#6800ff /><rect x=1372 y=718 fill=#7500ff /><rect x=1380 y=718 fill=#8200ff /><rect x=1388 y=718 fill=#9000ff /><rect x=1396 y=718 fill=#9e00ff /><rect x=1404 y=718 fill=#ad00ff /><rect x=1412 y=718 fill=#bb00ff /><rect x=1420 y=718 fill=#cb00ff /><rect x=1428 y=718 fill=#da00ff /><rect x=1436 y=718 fill=#ea00ff /><rect x=1444 y=718 fill=#fb00ff /><rect x=1452 y=718 fill=#ff00f3 /><rect x=1460 y=718 fill=#ff00e4 /><rect x=1468 y=718 fill=#ff00d7 /><rect x=1476 y=718 fill=#ff00ca /><rect x=1252 y=726 fill=#000aff /><rect x=1260 y=726 fill=#0007ff /><rect x=1268 y=726 fill=#0005ff /><rect x=1276 y=726 fill=#0002ff /><rect x=1284 y=726 fill=#0000ff /><rect x=1292 y=726 fill=#0300ff /><rect x=1300 y=726 fill=#0d00ff /><rect x=1308 y=726 fill=#1800ff /><rect x=1316 y=726 fill=#2300ff /><rect x=1324 y=726 fill=#2e00ff /><rect x=1332 y=726 fill=#3a00ff /><rect x=1340 y=726 fill=#4500ff /><rect x=1348 y=726 fill=#5100ff /><rect x=1356 y=726 fill=#5d00ff /><rect x=1364 y=726 fill=#6a00ff /><rect x=1372 y=726 fill=#7700ff /><rect x=1380 y=726 fill=#8400ff /><rect x=1388 y=726 fill=#9100ff /><rect x=1396 y=726 fill=#9f00ff /><rect x=1404 y=726 fill=#ad00ff /><rect x=1412 y=726 fill=#bc00ff /><rect x=1420 y=726 fill=#cb00ff /><rect x=1428 y=726 fill=#da00ff /><rect x=1436 y=726 fill=#ea00ff /><rect x=1444 y=726 fill=#fa00ff /><rect x=1452 y=726 fill=#ff00f4 /><rect x=1252 y=734 fill=#0004ff /><rect x=1260 y=734 fill=#0002ff /><rect x=1268 y=734 fill=#0000ff /><rect x=1276 y=734 fill=#0000ff /><rect x=1284 y=734 fill=#0000ff /><rect x=1292 y=734 fill=#0600ff /><rect x=1300 y=734 fill=#1100ff /><rect x=1308 y=734 fill=#1b00ff /><rect x=1316 y=734 fill=#2600ff /><rect x=1324 y=734 fill=#3100ff /><rect x=1332 y=734 fill=#3c00ff /><rect x=1340 y=734 fill=#4800ff /><rect x=1348 y=734 fill=#5300ff /><rect x=1356 y=734 fill=#5f00ff /><rect x=1364 y=734 fill=#6c00ff /><rect x=1372 y=734 fill=#7800ff /><rect x=1380 y=734 fill=#8500ff /><rect x=1388 y=734 fill=#9300ff /><rect x=1396 y=734 fill=#a000ff /><rect x=1404 y=734 fill=#ae00ff /><rect x=1412 y=734 fill=#bc00ff /><rect x=1420 y=734 fill=#cb00ff /><rect x=1428 y=734 fill=#da00ff /><rect x=1436 y=734 fill=#e900ff /><rect x=1260 y=742 fill=#0000ff /><rect x=1268 y=742 fill=#0000ff /><rect x=1276 y=742 fill=#0000ff /><rect x=1284 y=742 fill=#0000ff /><rect x=1292 y=742 fill=#0900ff /><rect x=1300 y=742 fill=#1400ff /><rect x=1308 y=742 fill=#1e00ff /><rect x=1316 y=742 fill=#2900ff /><rect x=1324 y=742 fill=#3300ff /><rect x=1332 y=742 fill=#3f00ff /><rect x=1340 y=742 fill=#4a00ff /><rect x=1348 y=742 fill=#5600ff /><rect x=1356 y=742 fill=#6100ff /><rect x=1364 y=742 fill=#6d00ff /><rect x=1372 y=742 fill=#7a00ff /><rect x=1380 y=742 fill=#8700ff /><rect x=1388 y=742 fill=#9400ff /><rect x=1396 y=742 fill=#a100ff /><rect x=1404 y=742 fill=#af00ff /><rect x=1412 y=742 fill=#bd00ff /><rect x=1268 y=750 fill=#0000ff /><rect x=1276 y=750 fill=#0000ff /><rect x=1284 y=750 fill=#0300ff /><rect x=1292 y=750 fill=#0d00ff /><rect x=1300 y=750 fill=#1700ff /><rect x=1308 y=750 fill=#2100ff /><rect x=1316 y=750 fill=#2b00ff /><rect x=1324 y=750 fill=#3600ff /><rect x=1332 y=750 fill=#4100ff /><rect x=1340 y=750 fill=#4c00ff /><rect x=1348 y=750 fill=#5800ff /><rect x=1356 y=750 fill=#6300ff /><rect x=1364 y=750 fill=#6f00ff /><rect x=1372 y=750 fill=#7b00ff /><rect x=1380 y=750 fill=#8800ff /><rect x=1388 y=750 fill=#9500ff /><rect x=1396 y=750 fill=#a200ff /><rect x=1276 y=758 fill=#0000ff /><rect x=1284 y=758 fill=#0600ff /><rect x=1292 y=758 fill=#0f00ff /><rect x=1300 y=758 fill=#1900ff /><rect x=1308 y=758 fill=#2400ff /><rect x=1316 y=758 fill=#2e00ff /><rect x=1324 y=758 fill=#3800ff /><rect x=1332 y=758 fill=#4300ff /><rect x=1340 y=758 fill=#4e00ff /><rect x=1348 y=758 fill=#5a00ff /><rect x=1356 y=758 fill=#6500ff /><rect x=1364 y=758 fill=#7100ff /><rect x=1372 y=758 fill=#7d00ff /><rect x=1284 y=766 fill=#0900ff /><rect x=1292 y=766 fill=#1200ff /><rect x=1300 y=766 fill=#1c00ff /><rect x=1308 y=766 fill=#2600ff /><rect x=1316 y=766 fill=#3000ff /><rect x=1324 y=766 fill=#3b00ff /><rect x=1332 y=766 fill=#4500ff /><rect x=1340 y=766 fill=#5000ff /><rect x=1348 y=766 fill=#5b00ff /><rect x=1356 y=766 fill=#6700ff /><rect x=1292 y=774 fill=#1300ff /><rect x=1300 y=774 fill=#1c00ff /><rect x=1308 y=774 fill=#2600ff /><rect x=1316 y=774 fill=#3100ff /><rect x=1324 y=774 fill=#3b00ff /><rect x=1332 y=774 fill=#4600ff /></g>
<path d="M1316.72 768.29 L1316.68 768.3 L1316.61 768.33 L1316.49 768.36 L1316.37 768.39 L1316.25 768.41 L1316.12 768.44 L1315.94 768.47 L1315.77 768.49 L1315.61 768.5 L1315.41 768.51 L1315.16 768.51 L1314.89 768.49 L1314.61 768.45 L1314.3 768.39 L1313.94 768.31 L1313.57 768.2 L1313.22 768.05 L1312.91 767.89 L1312.64 767.73 L1312.37 767.56 L1312.07 767.38 L1311.76 767.18 L1311.44 766.95 L1311.07 766.7 L1310.67 766.42 L1310.24 766.11 L1309.77 765.77 L1309.27 765.4 L1308.75 765 L1308.21 764.58 L1307.65 764.13 L1307.05 763.67 L1306.4 763.18 L1305.71 762.66 L1304.96 762.11 L1304.14 761.5 L1303.25 760.84 L1302.28 760.14 L1301.25 759.38 L1300.15 758.57 L1299.01 757.73 L1297.81 756.84 L1296.53 755.87 L1295.16 754.79 L1293.72 753.63 L1292.2 752.39 L1290.59 751.01 L1288.9 749.48 L1287.16 747.86 L1285.35 746.13 L1283.4 744.13 L1281.27 741.71 L1278.97 738.93 L1276.52 735.82 L1273.89 732.27 L1271.09 728.15 L1268.14 723.57 L1265.02 718.53 L1261.71 712.83 L1258.19 706.27 L1254.45 698.91 L1250.51 690.82 L1246.35 681.82 L1241.94 671.72 L1237.22 660.57 L1232.2 648.43 L1227.04 635.14 L1221.9 620.56 L1216.75 604.63 L1211.53 587.43 L1206.33 569.07 L1201.24 549.65 L1196.16 528.91 L1191.09 506.89 L1186.24 484.13 L1181.83 461.18 L1177.8 437.82 L1174.07 413.87 L1170.84 389.96 L1168.27 366.68 L1166.33 343.93 L1164.96 321.49 L1164.29 299.74 L1164.45 279.11 L1165.47 259.45 L1167.27 240.62 L1169.88 223.05 L1173.35 207.2 L1177.76 193.01 L1183.09 180.32 L1189.14 169.35 L1195.74 160.3 L1203.01 153.41 L1210.97 148.57 L1219.32 145.4 L1227.84 143.53 L1236.59 143.17 L1245.6 144.42 L1254.67 146.65 L1263.69 149.28 L1272.73 152.37 L1281.83 156.16 L1290.86 160.34 L1299.71 164.59 L1308.37 168.9 L1316.88 173.41 L1325.29 178.08 L1333.62 182.88 L1341.87 187.81 L1350.01 192.89 L1358.1 198.09 L1366.18 203.42 L1374.24 208.89 L1382.28 214.48 L1390.29 220.19 L1398.27 225.98 L1406.24 231.87 L1414.17 237.85 L1422.09 243.91 L1430 250.04 L1437.92 256.22 L1445.82 262.47 L1453.72 268.78 L1461.63 275.13 L1469.56 281.53 L1477.49 287.98 L1485.43 294.47 L1493.34 300.97 L1501.24 307.5 L1509.13 314.06 L1517.01 320.63 L1524.87 327.19 L1532.74 333.75 L1540.6 340.31 L1548.43 346.87 L1556.22 353.4 L1563.97 359.92 L1571.68 366.42 L1579.35 372.89 L1586.95 379.31 L1594.5 385.69 L1602.01 392.04 L1609.44 398.33 L1616.79 404.55 L1624.07 410.7 L1631.28 416.8 L1638.39 422.81 L1645.39 428.73 L1652.3 434.55 L1659.11 440.28 L1665.79 445.91 L1672.31 451.41 L1678.69 456.81 L1684.93 462.1 L1690.99 467.25 L1696.84 472.21 L1702.46 476.96 L1707.87 481.53 L1713.1 485.95 L1718.18 490.24 L1723.13 494.42 L1727.93 498.47 L1732.55 502.37 L1736.95 506.08 L1741.14 509.6 L1745.13 512.93 L1748.92 516.11 L1752.54 519.15 L1755.97 522.05 L1759.22 524.8 L1762.29 527.41 L1765.21 529.89 L1767.96 532.23 L1770.54 534.42 L1772.98 536.49 L1775.3 538.45 L1777.49 540.29 L1779.55 542.02 L1781.5 543.65 L1783.35 545.21 L1785.11 546.69 L1786.76 548.09 L1788.32 549.42 L1789.82 550.69 L1791.27 551.92 L1792.65 553.09 L1793.97 554.21 L1795.22 555.27 L1796.42 556.29 L1797.55 557.26 L1798.63 558.17 L1799.65 559.02 L1800.61 559.83 L1801.52 560.58 L1802.38 561.28 L1803.19 561.95 L1803.93 562.58 L1804.62 563.16 L1805.25 563.7 L1805.85 564.21 L1806.41 564.69 L1806.94 565.14 L1807.43 565.55 L1807.89 565.94 L1808.29 566.28 L1808.66 566.59 L1809.01 566.89 L1809.39 567.21 L1809.83 567.59 L1810.29 567.98 L1810.75 568.37 L1811.16 568.72 L1811.52 569.02 L1811.84 569.29 L1812.13 569.54 L1812.4 569.77 L1812.66 569.99 L1812.91 570.2 L1813.12 570.38 L1813.29 570.52 L1813.4 570.62 L1813.48 570.68 L1813.52 570.72 L1813.55 570.74Z M1728.92 523.07 L1427.85 320.3 L1295.03 725.84Z" fill="#000" fill-opacity=".4" fill-rule="evenodd"/></g>
<rect x="1162.2" y="138.2" width="744.1" height="632.7" fill="none" stroke="#a0a0a0" stroke-width="1.7"/>
<line x1="1162.2" y1="770.9" x2="1162.2" y2="779" stroke="#dcdcdc" stroke-width="1.8"/>
<line x1="1155.3" y1="770.9" x2="1162.2" y2="770.9" stroke="#dcdcdc" stroke-width="1.8"/>
<text x="1162.2" y="798.7" font-size="18" fill="#d8d8d8" text-anchor="middle" textLength="8.8" lengthAdjust="spacingAndGlyphs" stroke="#d8d8d8" stroke-width="0.25">0</text>
<text x="1154.2" y="778.9" font-size="18" fill="#d8d8d8" text-anchor="end" textLength="8.8" lengthAdjust="spacingAndGlyphs" stroke="#d8d8d8" stroke-width="0.25">0</text>
<line x1="1250.75" y1="770.9" x2="1250.75" y2="779" stroke="#dcdcdc" stroke-width="1.8"/>
<line x1="1155.3" y1="695.8" x2="1162.2" y2="695.8" stroke="#dcdcdc" stroke-width="1.8"/>
<text x="1250.75" y="798.7" font-size="18" fill="#d8d8d8" text-anchor="middle" textLength="23" lengthAdjust="spacingAndGlyphs" stroke="#d8d8d8" stroke-width="0.25">0,1</text>
<text x="1154.2" y="703.8" font-size="18" fill="#d8d8d8" text-anchor="end" textLength="23" lengthAdjust="spacingAndGlyphs" stroke="#d8d8d8" stroke-width="0.25">0,1</text>
<line x1="1339.3" y1="770.9" x2="1339.3" y2="779" stroke="#dcdcdc" stroke-width="1.8"/>
<line x1="1155.3" y1="620.7" x2="1162.2" y2="620.7" stroke="#dcdcdc" stroke-width="1.8"/>
<text x="1339.3" y="798.7" font-size="18" fill="#d8d8d8" text-anchor="middle" textLength="23" lengthAdjust="spacingAndGlyphs" stroke="#d8d8d8" stroke-width="0.25">0,2</text>
<text x="1154.2" y="628.7" font-size="18" fill="#d8d8d8" text-anchor="end" textLength="23" lengthAdjust="spacingAndGlyphs" stroke="#d8d8d8" stroke-width="0.25">0,2</text>
<line x1="1427.85" y1="770.9" x2="1427.85" y2="779" stroke="#dcdcdc" stroke-width="1.8"/>
<line x1="1155.3" y1="545.6" x2="1162.2" y2="545.6" stroke="#dcdcdc" stroke-width="1.8"/>
<text x="1427.85" y="798.7" font-size="18" fill="#d8d8d8" text-anchor="middle" textLength="23" lengthAdjust="spacingAndGlyphs" stroke="#d8d8d8" stroke-width="0.25">0,3</text>
<text x="1154.2" y="553.6" font-size="18" fill="#d8d8d8" text-anchor="end" textLength="23" lengthAdjust="spacingAndGlyphs" stroke="#d8d8d8" stroke-width="0.25">0,3</text>
<line x1="1516.4" y1="770.9" x2="1516.4" y2="779" stroke="#dcdcdc" stroke-width="1.8"/>
<line x1="1155.3" y1="470.5" x2="1162.2" y2="470.5" stroke="#dcdcdc" stroke-width="1.8"/>
<text x="1516.4" y="798.7" font-size="18" fill="#d8d8d8" text-anchor="middle" textLength="23" lengthAdjust="spacingAndGlyphs" stroke="#d8d8d8" stroke-width="0.25">0,4</text>
<text x="1154.2" y="478.5" font-size="18" fill="#d8d8d8" text-anchor="end" textLength="23" lengthAdjust="spacingAndGlyphs" stroke="#d8d8d8" stroke-width="0.25">0,4</text>
<line x1="1604.95" y1="770.9" x2="1604.95" y2="779" stroke="#dcdcdc" stroke-width="1.8"/>
<line x1="1155.3" y1="395.4" x2="1162.2" y2="395.4" stroke="#dcdcdc" stroke-width="1.8"/>
<text x="1604.95" y="798.7" font-size="18" fill="#d8d8d8" text-anchor="middle" textLength="23" lengthAdjust="spacingAndGlyphs" stroke="#d8d8d8" stroke-width="0.25">0,5</text>
<text x="1154.2" y="403.4" font-size="18" fill="#d8d8d8" text-anchor="end" textLength="23" lengthAdjust="spacingAndGlyphs" stroke="#d8d8d8" stroke-width="0.25">0,5</text>
<line x1="1693.5" y1="770.9" x2="1693.5" y2="779" stroke="#dcdcdc" stroke-width="1.8"/>
<line x1="1155.3" y1="320.3" x2="1162.2" y2="320.3" stroke="#dcdcdc" stroke-width="1.8"/>
<text x="1693.5" y="798.7" font-size="18" fill="#d8d8d8" text-anchor="middle" textLength="23" lengthAdjust="spacingAndGlyphs" stroke="#d8d8d8" stroke-width="0.25">0,6</text>
<text x="1154.2" y="328.3" font-size="18" fill="#d8d8d8" text-anchor="end" textLength="23" lengthAdjust="spacingAndGlyphs" stroke="#d8d8d8" stroke-width="0.25">0,6</text>
<line x1="1782.05" y1="770.9" x2="1782.05" y2="779" stroke="#dcdcdc" stroke-width="1.8"/>
<line x1="1155.3" y1="245.2" x2="1162.2" y2="245.2" stroke="#dcdcdc" stroke-width="1.8"/>
<text x="1782.05" y="798.7" font-size="18" fill="#d8d8d8" text-anchor="middle" textLength="23" lengthAdjust="spacingAndGlyphs" stroke="#d8d8d8" stroke-width="0.25">0,7</text>
<text x="1154.2" y="253.2" font-size="18" fill="#d8d8d8" text-anchor="end" textLength="23" lengthAdjust="spacingAndGlyphs" stroke="#d8d8d8" stroke-width="0.25">0,7</text>
<line x1="1870.6" y1="770.9" x2="1870.6" y2="779" stroke="#dcdcdc" stroke-width="1.8"/>
<line x1="1155.3" y1="170.1" x2="1162.2" y2="170.1" stroke="#dcdcdc" stroke-width="1.8"/>
<text x="1870.6" y="798.7" font-size="18" fill="#d8d8d8" text-anchor="middle" textLength="23" lengthAdjust="spacingAndGlyphs" stroke="#d8d8d8" stroke-width="0.25">0,8</text>
<text x="1154.2" y="178.1" font-size="18" fill="#d8d8d8" text-anchor="end" textLength="23" lengthAdjust="spacingAndGlyphs" stroke="#d8d8d8" stroke-width="0.25">0,8</text>
<rect x="1430.96" y="514.42" width="14.8" height="17.6" fill="none" stroke="#fff" stroke-width="1.8"/>
<rect x="1430.96" y="514.42" width="14.8" height="17.6" fill="none" stroke="#fff" stroke-width="1.8"/>
<rect x="1430.96" y="514.42" width="14.8" height="17.6" fill="none" stroke="#fff" stroke-width="1.8"/>
<rect x="1430.96" y="514.42" width="14.8" height="17.6" fill="none" stroke="#fff" stroke-width="1.8"/>
<rect x="1430.96" y="514.42" width="14.8" height="17.6" fill="none" stroke="#fff" stroke-width="1.8"/>
<rect x="1430.96" y="514.42" width="14.8" height="17.6" fill="none" stroke="#000" stroke-width="1.8"/>
<rect x="1508" y="488.14" width="14.8" height="17.6" fill="none" stroke="#fff" stroke-width="1.8"/>
<rect x="1490.29" y="494.14" width="14.8" height="17.6" fill="none" stroke="#fff" stroke-width="1.8"/>
<rect x="1375.17" y="561.73" width="14.8" height="17.6" fill="none" stroke="#fff" stroke-width="1.8"/>
<rect x="1454.87" y="440.82" width="14.8" height="17.6" fill="none" stroke="#fff" stroke-width="1.8"/>
<rect x="1391.11" y="571.5" width="14.8" height="17.6" fill="none" stroke="#fff" stroke-width="1.8"/>
<rect x="1386.69" y="489.64" width="14.8" height="17.6" fill="none" stroke="#fff" stroke-width="1.8"/>
<rect x="1607.18" y="456.59" width="14.8" height="17.6" fill="none" stroke="#fff" stroke-width="1.8"/>
<rect x="1345.95" y="617.31" width="14.8" height="17.6" fill="none" stroke="#fff" stroke-width="1.8"/>
<rect x="1562.9" y="526.44" width="14.8" height="17.6" fill="none" stroke="#fff" stroke-width="1.8"/>
<rect x="1410.59" y="595.53" width="14.8" height="17.6" fill="none" stroke="#fff" stroke-width="1.8"/>
<rect x="1486.75" y="391.26" width="14.8" height="17.6" fill="none" stroke="#fff" stroke-width="1.8"/>
<rect x="1573.53" y="431.81" width="14.8" height="17.6" fill="none" stroke="#fff" stroke-width="1.8"/>
<rect x="1323.82" y="655.61" width="14.8" height="17.6" fill="none" stroke="#fff" stroke-width="1.8"/>
<rect x="1423.88" y="394.26" width="14.8" height="17.6" fill="none" stroke="#fff" stroke-width="1.8"/>
<rect x="1629.31" y="523.43" width="14.8" height="17.6" fill="none" stroke="#fff" stroke-width="1.8"/>
<rect x="1549.62" y="405.53" width="14.8" height="17.6" fill="none" stroke="#fff" stroke-width="1.8"/>
<rect x="1484.98" y="576" width="14.8" height="17.6" fill="none" stroke="#fff" stroke-width="1.8"/>
<rect x="1337.98" y="558.73" width="14.8" height="17.6" fill="none" stroke="#fff" stroke-width="1.8"/>
<rect x="1720.52" y="513.67" width="14.8" height="17.6" fill="none" stroke="#fff" stroke-width="1.8"/>
<rect x="1419.45" y="310.9" width="14.8" height="17.6" fill="none" stroke="#fff" stroke-width="1.8"/>
<rect x="1286.62" y="716.44" width="14.8" height="17.6" fill="none" stroke="#fff" stroke-width="1.8"/>
<rect x="1353.04" y="514.42" width="14.8" height="17.6" fill="none" stroke="#fff" stroke-width="1.8"/>
<rect x="1438.05" y="645.85" width="14.8" height="17.6" fill="none" stroke="#fff" stroke-width="1.8"/>
<rect x="1524.82" y="382.24" width="14.8" height="17.6" fill="none" stroke="#fff" stroke-width="1.8"/>
<ellipse cx="1431.58" cy="526.18" rx="4.7" ry="5.2" fill="#ffffff" stroke="#000" stroke-width="1.5"/>
<ellipse cx="1431.58" cy="526.18" rx="4.7" ry="5.2" fill="#e6e6e6" stroke="#000" stroke-width="1.5"/>
<ellipse cx="1431.58" cy="526.18" rx="4.7" ry="5.2" fill="#d2d2d2" stroke="#000" stroke-width="1.5"/>
<ellipse cx="1431.58" cy="525.42" rx="4.7" ry="5.2" fill="#bababa" stroke="#000" stroke-width="1.5"/>
<ellipse cx="1430.69" cy="525.42" rx="4.7" ry="5.2" fill="#9e9e9e" stroke="#000" stroke-width="1.5"/>
<ellipse cx="1389.96" cy="568.23" rx="4.7" ry="5.2" fill="#000000" stroke="#000" stroke-width="1.5"/>
<ellipse cx="1512.16" cy="493.88" rx="4.7" ry="5.2" fill="#735244" stroke="#000" stroke-width="1.5"/>
<ellipse cx="1488.25" cy="503.65" rx="4.7" ry="5.2" fill="#c29682" stroke="#000" stroke-width="1.5"/>
<ellipse cx="1376.68" cy="574.24" rx="4.7" ry="5.2" fill="#627a9d" stroke="#000" stroke-width="1.5"/>
<ellipse cx="1457.26" cy="444.32" rx="4.7" ry="5.2" fill="#576c43" stroke="#000" stroke-width="1.5"/>
<ellipse cx="1392.62" cy="583.25" rx="4.7" ry="5.2" fill="#8580b1" stroke="#000" stroke-width="1.5"/>
<ellipse cx="1389.07" cy="502.14" rx="4.7" ry="5.2" fill="#67bdaa" stroke="#000" stroke-width="1.5"/>
<ellipse cx="1611.33" cy="459.34" rx="4.7" ry="5.2" fill="#d67e2c" stroke="#000" stroke-width="1.5"/>
<ellipse cx="1346.57" cy="631.32" rx="4.7" ry="5.2" fill="#505ba6" stroke="#000" stroke-width="1.5"/>
<ellipse cx="1562.63" cy="536.69" rx="4.7" ry="5.2" fill="#c15a63" stroke="#000" stroke-width="1.5"/>
<ellipse cx="1408.55" cy="612.54" rx="4.7" ry="5.2" fill="#5e3c6c" stroke="#000" stroke-width="1.5"/>
<ellipse cx="1490.02" cy="396.25" rx="4.7" ry="5.2" fill="#9dbc40" stroke="#000" stroke-width="1.5"/>
<ellipse cx="1575.03" cy="433.8" rx="4.7" ry="5.2" fill="#e0a32e" stroke="#000" stroke-width="1.5"/>
<ellipse cx="1324.43" cy="671.87" rx="4.7" ry="5.2" fill="#383d96" stroke="#000" stroke-width="1.5"/>
<ellipse cx="1428.04" cy="398.51" rx="4.7" ry="5.2" fill="#469449" stroke="#000" stroke-width="1.5"/>
<ellipse cx="1637.9" cy="531.43" rx="4.7" ry="5.2" fill="#af363c" stroke="#000" stroke-width="1.5"/>
<ellipse cx="1552.01" cy="409.02" rx="4.7" ry="5.2" fill="#e7c71f" stroke="#000" stroke-width="1.5"/>
<ellipse cx="1481.17" cy="589.26" rx="4.7" ry="5.2" fill="#bb5695" stroke="#000" stroke-width="1.5"/>
<ellipse cx="1342.14" cy="571.99" rx="4.7" ry="5.2" fill="#0885a1" stroke="#000" stroke-width="1.5"/>
<ellipse cx="1732.65" cy="520.17" rx="4.7" ry="5.2" fill="#ff0000" stroke="#000" stroke-width="1.5"/>
<ellipse cx="1426.26" cy="317.4" rx="4.7" ry="5.2" fill="#00ff00" stroke="#000" stroke-width="1.5"/>
<ellipse cx="1295.21" cy="725.19" rx="4.7" ry="5.2" fill="#0000ff" stroke="#000" stroke-width="1.5"/>
<ellipse cx="1358.08" cy="527.68" rx="4.7" ry="5.2" fill="#00ffff" stroke="#000" stroke-width="1.5"/>
<ellipse cx="1434.23" cy="658.35" rx="4.7" ry="5.2" fill="#ff00ff" stroke="#000" stroke-width="1.5"/>
<ellipse cx="1528.1" cy="386.49" rx="4.7" ry="5.2" fill="#ffff00" stroke="#000" stroke-width="1.5"/>
<g clip-path="url(#ins)"><g filter="url(#bl2)" class="ci"><rect x=1623 y=122 fill=#a6ff00 /><rect x=1635 y=122 fill=#aaff00 /><rect x=1647 y=122 fill=#aeff00 /><rect x=1659 y=122 fill=#b3ff00 /><rect x=1671 y=122 fill=#b7ff00 /><rect x=1683 y=122 fill=#bbff00 /><rect x=1695 y=122 fill=#c0ff00 /><rect x=1707 y=122 fill=#c4ff00 /><rect x=1719 y=122 fill=#c9ff00 /><rect x=1731 y=122 fill=#cdff00 /><rect x=1743 y=122 fill=#d2ff00 /><rect x=1755 y=122 fill=#d6ff00 /><rect x=1767 y=122 fill=#dbff00 /><rect x=1779 y=122 fill=#e0ff00 /><rect x=1791 y=122 fill=#e5ff00 /><rect x=1803 y=122 fill=#e9ff00 /><rect x=1815 y=122 fill=#eeff00 /><rect x=1827 y=122 fill=#f3ff00 /><rect x=1839 y=122 fill=#f8ff00 /><rect x=1851 y=122 fill=#fdff00 /><rect x=1863 y=122 fill=#fffc00 /><rect x=1875 y=122 fill=#fff700 /><rect x=1887 y=122 fill=#fff300 /><rect x=1899 y=122 fill=#ffee00 /><rect x=1911 y=122 fill=#ffea00 /><rect x=1923 y=122 fill=#ffe600 /><rect x=1623 y=134 fill=#a8ff00 /><rect x=1635 y=134 fill=#acff00 /><rect x=1647 y=134 fill=#b1ff00 /><rect x=1659 y=134 fill=#b5ff00 /><rect x=1671 y=134 fill=#b9ff00 /><rect x=1683 y=134 fill=#beff00 /><rect x=1695 y=134 fill=#c2ff00 /><rect x=1707 y=134 fill=#c7ff00 /><rect x=1719 y=134 fill=#cbff00 /><rect x=1731 y=134 fill=#d0ff00 /><rect x=1743 y=134 fill=#d5ff00 /><rect x=1755 y=134 fill=#d9ff00 /><rect x=1767 y=134 fill=#deff00 /><rect x=1779 y=134 fill=#e3ff00 /><rect x=1791 y=134 fill=#e7ff00 /><rect x=1803 y=134 fill=#ecff00 /><rect x=1815 y=134 fill=#f1ff00 /><rect x=1827 y=134 fill=#f6ff00 /><rect x=1839 y=134 fill=#fbff00 /><rect x=1851 y=134 fill=#fffe00 /><rect x=1863 y=134 fill=#fff900 /><rect x=1875 y=134 fill=#fff400 /><rect x=1887 y=134 fill=#fff000 /><rect x=1899 y=134 fill=#ffeb00 /><rect x=1911 y=134 fill=#ffe700 /><rect x=1923 y=134 fill=#ffe300 /><rect x=1623 y=146 fill=#aaff00 /><rect x=1635 y=146 fill=#afff00 /><rect x=1647 y=146 fill=#b3ff00 /><rect x=1659 y=146 fill=#b7ff00 /><rect x=1671 y=146 fill=#bcff00 /><rect x=1683 y=146 fill=#c0ff00 /><rect x=1695 y=146 fill=#c5ff00 /><rect x=1707 y=146 fill=#c9ff00 /><rect x=1719 y=146 fill=#ceff00 /><rect x=1731 y=146 fill=#d3ff00 /><rect x=1743 y=146 fill=#d7ff00 /><rect x=1755 y=146 fill=#dcff00 /><rect x=1767 y=146 fill=#e1ff00 /><rect x=1779 y=146 fill=#e6ff00 /><rect x=1791 y=146 fill=#eaff00 /><rect x=1803 y=146 fill=#efff00 /><rect x=1815 y=146 fill=#f4ff00 /><rect x=1827 y=146 fill=#f9ff00 /><rect x=1839 y=146 fill=#feff00 /><rect x=1851 y=146 fill=#fffb00 /><rect x=1863 y=146 fill=#fff600 /><rect x=1875 y=146 fill=#fff100 /><rect x=1887 y=146 fill=#ffed00 /><rect x=1899 y=146 fill=#ffe800 /><rect x=1911 y=146 fill=#ffe400 /><rect x=1923 y=146 fill=#ffe000 /><rect x=1623 y=158 fill=#adff01 /><rect x=1635 y=158 fill=#b1ff00 /><rect x=1647 y=158 fill=#b6ff00 /><rect x=1659 y=158 fill=#baff00 /><rect x=1671 y=158 fill=#beff00 /><rect x=1683 y=158 fill=#c3ff00 /><rect x=1695 y=158 fill=#c8ff00 /><rect x=1707 y=158 fill=#ccff00 /><rect x=1719 y=158 fill=#d1ff00 /><rect x=1731 y=158 fill=#d6ff00 /><rect x=1743 y=158 fill=#daff00 /><rect x=1755 y=158 fill=#dfff00 /><rect x=1767 y=158 fill=#e4ff00 /><rect x=1779 y=158 fill=#e9ff00 /><rect x=1791 y=158 fill=#edff00 /><rect x=1803 y=158 fill=#f2ff00 /><rect x=1815 y=158 fill=#f7ff00 /><rect x=1827 y=158 fill=#fcff00 /><rect x=1839 y=158 fill=#fffd00 /><rect x=1851 y=158 fill=#fff800 /><rect x=1863 y=158 fill=#fff300 /><rect x=1875 y=158 fill=#ffee00 /><rect x=1887 y=158 fill=#ffea00 /><rect x=1899 y=158 fill=#ffe600 /><rect x=1911 y=158 fill=#ffe100 /><rect x=1923 y=158 fill=#ffdd00 /><rect x=1623 y=170 fill=#afff02 /><rect x=1635 y=170 fill=#b4ff01 /><rect x=1647 y=170 fill=#b8ff00 /><rect x=1659 y=170 fill=#bdff00 /><rect x=1671 y=170 fill=#c1ff00 /><rect x=1683 y=170 fill=#c6ff00 /><rect x=1695 y=170 fill=#caff00 /><rect x=1707 y=170 fill=#cfff00 /><rect x=1719 y=170 fill=#d4ff00 /><rect x=1731 y=170 fill=#d8ff00 /><rect x=1743 y=170 fill=#ddff00 /><rect x=1755 y=170 fill=#e2ff00 /><rect x=1767 y=170 fill=#e7ff00 /><rect x=1779 y=170 fill=#ecff00 /><rect x=1791 y=170 fill=#f1ff00 /><rect x=1803 y=170 fill=#f6ff00 /><rect x=1815 y=170 fill=#fbff00 /><rect x=1827 y=170 fill=#fffe00 /><rect x=1839 y=170 fill=#fff900 /><rect x=1851 y=170 fill=#fff500 /><rect x=1863 y=170 fill=#fff000 /><rect x=1875 y=170 fill=#ffeb00 /><rect x=1887 y=170 fill=#ffe700 /><rect x=1899 y=170 fill=#ffe300 /><rect x=1911 y=170 fill=#ffdf00 /><rect x=1923 y=170 fill=#ffda00 /><rect x=1623 y=182 fill=#b2ff03 /><rect x=1635 y=182 fill=#b6ff02 /><rect x=1647 y=182 fill=#bbff01 /><rect x=1659 y=182 fill=#bfff00 /><rect x=1671 y=182 fill=#c4ff00 /><rect x=1683 y=182 fill=#c8ff00 /><rect x=1695 y=182 fill=#cdff00 /><rect x=1707 y=182 fill=#d2ff00 /><rect x=1719 y=182 fill=#d6ff00 /><rect x=1731 y=182 fill=#dbff00 /><rect x=1743 y=182 fill=#e0ff00 /><rect x=1755 y=182 fill=#e5ff00 /><rect x=1767 y=182 fill=#eaff00 /><rect x=1779 y=182 fill=#efff00 /><rect x=1791 y=182 fill=#f4ff00 /><rect x=1803 y=182 fill=#f9ff00 /><rect x=1815 y=182 fill=#feff00 /><rect x=1827 y=182 fill=#fffb00 /><rect x=1839 y=182 fill=#fff600 /><rect x=1851 y=182 fill=#fff100 /><rect x=1863 y=182 fill=#ffed00 /><rect x=1875 y=182 fill=#ffe800 /><rect x=1887 y=182 fill=#ffe400 /><rect x=1899 y=182 fill=#ffe000 /><rect x=1911 y=182 fill=#ffdc00 /><rect x=1923 y=182 fill=#ffd800 /><rect x=1623 y=194 fill=#b4ff05 /><rect x=1635 y=194 fill=#b9ff04 /><rect x=1647 y=194 fill=#bdff03 /><rect x=1659 y=194 fill=#c2ff02 /><rect x=1671 y=194 fill=#c6ff01 /><rect x=1683 y=194 fill=#cbff00 /><rect x=1695 y=194 fill=#d0ff00 /><rect x=1707 y=194 fill=#d4ff00 /><rect x=1719 y=194 fill=#d9ff00 /><rect x=1731 y=194 fill=#deff00 /><rect x=1743 y=194 fill=#e3ff00 /><rect x=1755 y=194 fill=#e8ff00 /><rect x=1767 y=194 fill=#edff00 /><rect x=1779 y=194 fill=#f2ff00 /><rect x=1791 y=194 fill=#f7ff00 /><rect x=1803 y=194 fill=#fcff00 /><rect x=1815 y=194 fill=#fffd00 /><rect x=1827 y=194 fill=#fff800 /><rect x=1839 y=194 fill=#fff300 /><rect x=1851 y=194 fill=#ffee00 /><rect x=1863 y=194 fill=#ffea00 /><rect x=1875 y=194 fill=#ffe500 /><rect x=1887 y=194 fill=#ffe100 /><rect x=1899 y=194 fill=#ffdd00 /><rect x=1911 y=194 fill=#ffd900 /><rect x=1923 y=194 fill=#ffd500 /><rect x=1623 y=206 fill=#b7ff06 /><rect x=1635 y=206 fill=#bbff05 /><rect x=1647 y=206 fill=#c0ff04 /><rect x=1659 y=206 fill=#c4ff03 /><rect x=1671 y=206 fill=#c9ff02 /><rect x=1683 y=206 fill=#ceff01 /><rect x=1695 y=206 fill=#d3ff00 /><rect x=1707 y=206 fill=#d7ff00 /><rect x=1719 y=206 fill=#dcff00 /><rect x=1731 y=206 fill=#e1ff00 /><rect x=1743 y=206 fill=#e6ff00 /><rect x=1755 y=206 fill=#ebff00 /><rect x=1767 y=206 fill=#f0ff00 /><rect x=1779 y=206 fill=#f5ff00 /><rect x=1791 y=206 fill=#faff00 /><rect x=1803 y=206 fill=#ffff00 /><rect x=1815 y=206 fill=#fffa00 /><rect x=1827 y=206 fill=#fff500 /><rect x=1839 y=206 fill=#fff000 /><rect x=1851 y=206 fill=#ffeb00 /><rect x=1863 y=206 fill=#ffe700 /><rect x=1875 y=206 fill=#ffe300 /><rect x=1887 y=206 fill=#ffde00 /><rect x=1899 y=206 fill=#ffda00 /><rect x=1911 y=206 fill=#ffd600 /><rect x=1923 y=206 fill=#ffd200 /><rect x=1623 y=218 fill=#b9ff08 /><rect x=1635 y=218 fill=#beff07 /><rect x=1647 y=218 fill=#c2ff06 /><rect x=1659 y=218 fill=#c7ff05 /><rect x=1671 y=218 fill=#ccff04 /><rect x=1683 y=218 fill=#d1ff03 /><rect x=1695 y=218 fill=#d5ff02 /><rect x=1707 y=218 fill=#daff00 /><rect x=1719 y=218 fill=#dfff00 /><rect x=1731 y=218 fill=#e4ff00 /><rect x=1743 y=218 fill=#e9ff00 /><rect x=1755 y=218 fill=#eeff00 /><rect x=1767 y=218 fill=#f3ff00 /><rect x=1779 y=218 fill=#f8ff00 /><rect x=1791 y=218 fill=#fdff00 /><rect x=1803 y=218 fill=#fffb00 /><rect x=1815 y=218 fill=#fff600 /><rect x=1827 y=218 fill=#fff200 /><rect x=1839 y=218 fill=#ffed00 /><rect x=1851 y=218 fill=#ffe800 /><rect x=1863 y=218 fill=#ffe400 /><rect x=1875 y=218 fill=#ffe000 /><rect x=1887 y=218 fill=#ffdc00 /><rect x=1899 y=218 fill=#ffd700 /><rect x=1911 y=218 fill=#ffd400 /><rect x=1923 y=218 fill=#ffd000 /><rect x=1623 y=230 fill=#bcff09 /><rect x=1635 y=230 fill=#c0ff08 /><rect x=1647 y=230 fill=#c5ff07 /><rect x=1659 y=230 fill=#caff06 /><rect x=1671 y=230 fill=#cfff05 /><rect x=1683 y=230 fill=#d3ff04 /><rect x=1695 y=230 fill=#d8ff03 /><rect x=1707 y=230 fill=#ddff02 /><rect x=1719 y=230 fill=#e2ff01 /><rect x=1731 y=230 fill=#e7ff00 /><rect x=1743 y=230 fill=#ecff00 /><rect x=1755 y=230 fill=#f1ff00 /><rect x=1767 y=230 fill=#f6ff00 /><rect x=1779 y=230 fill=#fcff00 /><rect x=1791 y=230 fill=#fffd00 /><rect x=1803 y=230 fill=#fff800 /><rect x=1815 y=230 fill=#fff300 /><rect x=1827 y=230 fill=#ffef00 /><rect x=1839 y=230 fill=#ffea00 /><rect x=1851 y=230 fill=#ffe500 /><rect x=1863 y=230 fill=#ffe100 /><rect x=1875 y=230 fill=#ffdd00 /><rect x=1887 y=230 fill=#ffd900 /><rect x=1899 y=230 fill=#ffd500 /><rect x=1911 y=230 fill=#ffd100 /><rect x=1923 y=230 fill=#ffcd00 /><rect x=1623 y=242 fill=#beff0b /><rect x=1635 y=242 fill=#c3ff0a /><rect x=1647 y=242 fill=#c8ff09 /><rect x=1659 y=242 fill=#cdff08 /><rect x=1671 y=242 fill=#d1ff06 /><rect x=1683 y=242 fill=#d6ff05 /><rect x=1695 y=242 fill=#dbff04 /><rect x=1707 y=242 fill=#e0ff03 /><rect x=1719 y=242 fill=#e5ff02 /><rect x=1731 y=242 fill=#eaff01 /><rect x=1743 y=242 fill=#efff00 /><rect x=1755 y=242 fill=#f4ff00 /><rect x=1767 y=242 fill=#faff00 /><rect x=1779 y=242 fill=#ffff00 /><rect x=1791 y=242 fill=#fffa00 /><rect x=1803 y=242 fill=#fff500 /><rect x=1815 y=242 fill=#fff000 /><rect x=1827 y=242 fill=#ffeb00 /><rect x=1839 y=242 fill=#ffe700 /><rect x=1851 y=242 fill=#ffe200 /><rect x=1863 y=242 fill=#ffde00 /><rect x=1875 y=242 fill=#ffda00 /><rect x=1887 y=242 fill=#ffd600 /><rect x=1899 y=242 fill=#ffd200 /><rect x=1911 y=242 fill=#ffce00 /><rect x=1923 y=242 fill=#ffca00 /><rect x=1623 y=254 fill=#c1ff0c /><rect x=1635 y=254 fill=#c6ff0b /><rect x=1647 y=254 fill=#cbff0a /><rect x=1659 y=254 fill=#cfff09 /><rect x=1671 y=254 fill=#d4ff08 /><rect x=1683 y=254 fill=#d9ff07 /><rect x=1695 y=254 fill=#deff06 /><rect x=1707 y=254 fill=#e3ff05 /><rect x=1719 y=254 fill=#e8ff04 /><rect x=1731 y=254 fill=#edff03 /><rect x=1743 y=254 fill=#f3ff02 /><rect x=1755 y=254 fill=#f8ff00 /><rect x=1767 y=254 fill=#fdff00 /><rect x=1779 y=254 fill=#fffc00 /><rect x=1791 y=254 fill=#fff700 /><rect x=1803 y=254 fill=#fff200 /><rect x=1815 y=254 fill=#ffed00 /><rect x=1827 y=254 fill=#ffe800 /><rect x=1839 y=254 fill=#ffe400 /><rect x=1851 y=254 fill=#ffe000 /><rect x=1863 y=254 fill=#ffdb00 /><rect x=1875 y=254 fill=#ffd700 /><rect x=1887 y=254 fill=#ffd300 /><rect x=1899 y=254 fill=#ffcf00 /><rect x=1911 y=254 fill=#ffcb00 /><rect x=1923 y=254 fill=#ffc800 /><rect x=1623 y=266 fill=#c4ff0e /><rect x=1635 y=266 fill=#c9ff0d /><rect x=1647 y=266 fill=#cdff0c /><rect x=1659 y=266 fill=#d2ff0b /><rect x=1671 y=266 fill=#d7ff09 /><rect x=1683 y=266 fill=#dcff08 /><rect x=1695 y=266 fill=#e1ff07 /><rect x=1707 y=266 fill=#e6ff06 /><rect x=1719 y=266 fill=#ebff05 /><rect x=1731 y=266 fill=#f1ff04 /><rect x=1743 y=266 fill=#f6ff03 /><rect x=1755 y=266 fill=#fbff02 /><rect x=1767 y=266 fill=#fffe01 /><rect x=1779 y=266 fill=#fff800 /><rect x=1791 y=266 fill=#fff300 /><rect x=1803 y=266 fill=#ffef00 /><rect x=1815 y=266 fill=#ffea00 /><rect x=1827 y=266 fill=#ffe500 /><rect x=1839 y=266 fill=#ffe100 /><rect x=1851 y=266 fill=#ffdd00 /><rect x=1863 y=266 fill=#ffd800 /><rect x=1875 y=266 fill=#ffd400 /><rect x=1887 y=266 fill=#ffd000 /><rect x=1899 y=266 fill=#ffcd00 /><rect x=1911 y=266 fill=#ffc900 /><rect x=1923 y=266 fill=#ffc500 /><rect x=1623 y=278 fill=#c7ff0f /><rect x=1635 y=278 fill=#cbff0e /><rect x=1647 y=278 fill=#d0ff0d /><rect x=1659 y=278 fill=#d5ff0c /><rect x=1671 y=278 fill=#daff0b /><rect x=1683 y=278 fill=#dfff0a /><rect x=1695 y=278 fill=#e4ff09 /><rect x=1707 y=278 fill=#eaff08 /><rect x=1719 y=278 fill=#efff07 /><rect x=1731 y=278 fill=#f4ff06 /><rect x=1743 y=278 fill=#f9ff05 /><rect x=1755 y=278 fill=#feff04 /><rect x=1767 y=278 fill=#fffa02 /><rect x=1779 y=278 fill=#fff501 /><rect x=1791 y=278 fill=#fff000 /><rect x=1803 y=278 fill=#ffeb00 /><rect x=1815 y=278 fill=#ffe700 /><rect x=1827 y=278 fill=#ffe200 /><rect x=1839 y=278 fill=#ffde00 /><rect x=1851 y=278 fill=#ffda00 /><rect x=1863 y=278 fill=#ffd600 /><rect x=1875 y=278 fill=#ffd200 /><rect x=1887 y=278 fill=#ffce00 /><rect x=1899 y=278 fill=#ffca00 /><rect x=1911 y=278 fill=#ffc600 /><rect x=1923 y=278 fill=#ffc300 /><rect x=1623 y=290 fill=#c9ff11 /><rect x=1635 y=290 fill=#ceff10 /><rect x=1647 y=290 fill=#d3ff0f /><rect x=1659 y=290 fill=#d8ff0e /><rect x=1671 y=290 fill=#ddff0d /><rect x=1683 y=290 fill=#e2ff0c /><rect x=1695 y=290 fill=#e8ff0a /><rect x=1707 y=290 fill=#edff09 /><rect x=1719 y=290 fill=#f2ff08 /><rect x=1731 y=290 fill=#f7ff07 /><rect x=1743 y=290 fill=#fdff06 /><rect x=1755 y=290 fill=#fffc05 /><rect x=1767 y=290 fill=#fff704 /><rect x=1779 y=290 fill=#fff203 /><rect x=1791 y=290 fill=#ffed02 /><rect x=1803 y=290 fill=#ffe800 /><rect x=1815 y=290 fill=#ffe400 /><rect x=1827 y=290 fill=#ffdf00 /><rect x=1839 y=290 fill=#ffdb00 /><rect x=1851 y=290 fill=#ffd700 /><rect x=1863 y=290 fill=#ffd300 /><rect x=1875 y=290 fill=#ffcf00 /><rect x=1887 y=290 fill=#ffcb00 /><rect x=1899 y=290 fill=#ffc700 /><rect x=1911 y=290 fill=#ffc400 /><rect x=1923 y=290 fill=#ffc000 /><rect x=1623 y=302 fill=#ccff12 /><rect x=1635 y=302 fill=#d1ff11 /><rect x=1647 y=302 fill=#d6ff10 /><rect x=1659 y=302 fill=#dbff0f /><rect x=1671 y=302 fill=#e0ff0e /><rect x=1683 y=302 fill=#e6ff0d /><rect x=1695 y=302 fill=#ebff0c /><rect x=1707 y=302 fill=#f0ff0b /><rect x=1719 y=302 fill=#f5ff0a /><rect x=1731 y=302 fill=#fbff09 /><rect x=1743 y=302 fill=#fffe08 /><rect x=1755 y=302 fill=#fff906 /><rect x=1767 y=302 fill=#fff405 /><rect x=1779 y=302 fill=#ffef04 /><rect x=1791 y=302 fill=#ffea03 /><rect x=1803 y=302 fill=#ffe502 /><rect x=1815 y=302 fill=#ffe101 /><rect x=1827 y=302 fill=#ffdc00 /><rect x=1839 y=302 fill=#ffd800 /><rect x=1851 y=302 fill=#ffd400 /><rect x=1863 y=302 fill=#ffd000 /><rect x=1875 y=302 fill=#ffcc00 /><rect x=1887 y=302 fill=#ffc800 /><rect x=1899 y=302 fill=#ffc500 /><rect x=1911 y=302 fill=#ffc100 /><rect x=1923 y=302 fill=#ffbe00 /><rect x=1623 y=314 fill=#cfff14 /><rect x=1635 y=314 fill=#d4ff13 /><rect x=1647 y=314 fill=#d9ff12 /><rect x=1659 y=314 fill=#deff11 /><rect x=1671 y=314 fill=#e4ff10 /><rect x=1683 y=314 fill=#e9ff0f /><rect x=1695 y=314 fill=#eeff0e /><rect x=1707 y=314 fill=#f3ff0d /><rect x=1719 y=314 fill=#f9ff0c /><rect x=1731 y=314 fill=#feff0a /><rect x=1743 y=314 fill=#fffb09 /><rect x=1755 y=314 fill=#fff508 /><rect x=1767 y=314 fill=#fff007 /><rect x=1779 y=314 fill=#ffeb06 /><rect x=1791 y=314 fill=#ffe704 /><rect x=1803 y=314 fill=#ffe203 /><rect x=1815 y=314 fill=#ffde02 /><rect x=1827 y=314 fill=#ffd901 /><rect x=1839 y=314 fill=#ffd500 /><rect x=1851 y=314 fill=#ffd100 /><rect x=1863 y=314 fill=#ffcd00 /><rect x=1875 y=314 fill=#ffc900 /><rect x=1887 y=314 fill=#ffc600 /><rect x=1899 y=314 fill=#ffc200 /><rect x=1911 y=314 fill=#ffbf00 /><rect x=1923 y=314 fill=#ffbb00 /><rect x=1623 y=326 fill=#d2ff16 /><rect x=1635 y=326 fill=#d7ff15 /><rect x=1647 y=326 fill=#dcff14 /><rect x=1659 y=326 fill=#e2ff12 /><rect x=1671 y=326 fill=#e7ff11 /><rect x=1683 y=326 fill=#ecff10 /><rect x=1695 y=326 fill=#f1ff0f /><rect x=1707 y=326 fill=#f7ff0e /><rect x=1719 y=326 fill=#fcff0d /><rect x=1731 y=326 fill=#fffc0c /><rect x=1743 y=326 fill=#fff70b /><rect x=1755 y=326 fill=#fff209 /><rect x=1767 y=326 fill=#ffed08 /><rect x=1779 y=326 fill=#ffe807 /><rect x=1791 y=326 fill=#ffe406 /><rect x=1803 y=326 fill=#ffdf05 /><rect x=1815 y=326 fill=#ffdb04 /><rect x=1827 y=326 fill=#ffd702 /><rect x=1839 y=326 fill=#ffd201 /><rect x=1851 y=326 fill=#ffce00 /><rect x=1863 y=326 fill=#ffcb00 /><rect x=1875 y=326 fill=#ffc700 /><rect x=1887 y=326 fill=#ffc300 /><rect x=1899 y=326 fill=#ffc000 /><rect x=1911 y=326 fill=#ffbc00 /><rect x=1923 y=326 fill=#ffb900 /><rect x=1623 y=338 fill=#d5ff17 /><rect x=1635 y=338 fill=#daff16 /><rect x=1647 y=338 fill=#e0ff15 /><rect x=1659 y=338 fill=#e5ff14 /><rect x=1671 y=338 fill=#eaff13 /><rect x=1683 y=338 fill=#efff12 /><rect x=1695 y=338 fill=#f5ff11 /><rect x=1707 y=338 fill=#faff10 /><rect x=1719 y=338 fill=#fffe0f /><rect x=1731 y=338 fill=#fff90d /><rect x=1743 y=338 fill=#fff40c /><rect x=1755 y=338 fill=#ffef0b /><rect x=1767 y=338 fill=#ffea0a /><rect x=1779 y=338 fill=#ffe508 /><rect x=1791 y=338 fill=#ffe107 /><rect x=1803 y=338 fill=#ffdc06 /><rect x=1815 y=338 fill=#ffd805 /><rect x=1827 y=338 fill=#ffd404 /><rect x=1839 y=338 fill=#ffd003 /><rect x=1851 y=338 fill=#ffcc02 /><rect x=1863 y=338 fill=#ffc801 /><rect x=1875 y=338 fill=#ffc400 /><rect x=1887 y=338 fill=#ffc000 /><rect x=1899 y=338 fill=#ffbd00 /><rect x=1911 y=338 fill=#ffba00 /><rect x=1923 y=338 fill=#ffb600 /><rect x=1623 y=350 fill=#d8ff19 /><rect x=1635 y=350 fill=#ddff18 /><rect x=1647 y=350 fill=#e3ff17 /><rect x=1659 y=350 fill=#e8ff16 /><rect x=1671 y=350 fill=#edff15 /><rect x=1683 y=350 fill=#f3ff14 /><rect x=1695 y=350 fill=#f8ff13 /><rect x=1707 y=350 fill=#feff12 /><rect x=1719 y=350 fill=#fffb10 /><rect x=1731 y=350 fill=#fff60f /><rect x=1743 y=350 fill=#fff00d /><rect x=1755 y=350 fill=#ffec0c /><rect x=1767 y=350 fill=#ffe70b /><rect x=1779 y=350 fill=#ffe20a /><rect x=1791 y=350 fill=#ffde08 /><rect x=1803 y=350 fill=#ffd907 /><rect x=1815 y=350 fill=#ffd506 /><rect x=1827 y=350 fill=#ffd105 /><rect x=1839 y=350 fill=#ffcd04 /><rect x=1851 y=350 fill=#ffc903 /><rect x=1863 y=350 fill=#ffc502 /><rect x=1875 y=350 fill=#ffc101 /><rect x=1887 y=350 fill=#ffbe00 /><rect x=1899 y=350 fill=#ffba00 /><rect x=1911 y=350 fill=#ffb700 /><rect x=1923 y=350 fill=#ffb400 /><rect x=1623 y=362 fill=#dbff1b /><rect x=1635 y=362 fill=#e1ff1a /><rect x=1647 y=362 fill=#e6ff19 /><rect x=1659 y=362 fill=#ebff18 /><rect x=1671 y=362 fill=#f1ff17 /><rect x=1683 y=362 fill=#f6ff15 /><rect x=1695 y=362 fill=#fcff14 /><rect x=1707 y=362 fill=#fffd13 /><rect x=1719 y=362 fill=#fff712 /><rect x=1731 y=362 fill=#fff210 /><rect x=1743 y=362 fill=#ffed0f /><rect x=1755 y=362 fill=#ffe80e /><rect x=1767 y=362 fill=#ffe40c /><rect x=1779 y=362 fill=#ffdf0b /><rect x=1791 y=362 fill=#ffdb0a /><rect x=1803 y=362 fill=#ffd609 /><rect x=1815 y=362 fill=#ffd208 /><rect x=1827 y=362 fill=#ffce06 /><rect x=1839 y=362 fill=#ffca05 /><rect x=1851 y=362 fill=#ffc604 /><rect x=1863 y=362 fill=#ffc203 /><rect x=1875 y=362 fill=#ffbf02 /><rect x=1887 y=362 fill=#ffbb01 /><rect x=1899 y=362 fill=#ffb800 /><rect x=1911 y=362 fill=#ffb500 /><rect x=1923 y=362 fill=#ffb100 /><rect x=1623 y=374 fill=#dfff1c /><rect x=1635 y=374 fill=#e4ff1b /><rect x=1647 y=374 fill=#e9ff1a /><rect x=1659 y=374 fill=#efff19 /><rect x=1671 y=374 fill=#f4ff18 /><rect x=1683 y=374 fill=#faff17 /><rect x=1695 y=374 fill=#ffff16 /><rect x=1707 y=374 fill=#fff915 /><rect x=1719 y=374 fill=#fff413 /><rect x=1731 y=374 fill=#ffef12 /><rect x=1743 y=374 fill=#ffea10 /><rect x=1755 y=374 fill=#ffe50f /><rect x=1767 y=374 fill=#ffe00e /><rect x=1779 y=374 fill=#ffdc0c /><rect x=1791 y=374 fill=#ffd80b /><rect x=1803 y=374 fill=#ffd30a /><rect x=1815 y=374 fill=#ffcf09 /><rect x=1827 y=374 fill=#ffcb08 /><rect x=1839 y=374 fill=#ffc707 /><rect x=1851 y=374 fill=#ffc406 /><rect x=1863 y=374 fill=#ffc005 /><rect x=1875 y=374 fill=#ffbc04 /><rect x=1887 y=374 fill=#ffb903 /><rect x=1899 y=374 fill=#ffb502 /><rect x=1911 y=374 fill=#ffb201 /><rect x=1923 y=374 fill=#ffaf00 /><rect x=1623 y=386 fill=#e2ff1e /><rect x=1635 y=386 fill=#e7ff1d /><rect x=1647 y=386 fill=#edff1c /><rect x=1659 y=386 fill=#f2ff1b /><rect x=1671 y=386 fill=#f8ff1a /><rect x=1683 y=386 fill=#fdff19 /><rect x=1695 y=386 fill=#fffb18 /><rect x=1707 y=386 fill=#fff616 /><rect x=1719 y=386 fill=#fff115 /><rect x=1731 y=386 fill=#ffec13 /><rect x=1743 y=386 fill=#ffe712 /><rect x=1755 y=386 fill=#ffe210 /><rect x=1767 y=386 fill=#ffdd0f /><rect x=1779 y=386 fill=#ffd90e /><rect x=1791 y=386 fill=#ffd50d /><rect x=1803 y=386 fill=#ffd00b /><rect x=1815 y=386 fill=#ffcc0a /><rect x=1827 y=386 fill=#ffc809 /><rect x=1839 y=386 fill=#ffc508 /><rect x=1851 y=386 fill=#ffc107 /><rect x=1863 y=386 fill=#ffbd06 /><rect x=1875 y=386 fill=#ffba05 /><rect x=1887 y=386 fill=#ffb604 /><rect x=1899 y=386 fill=#ffb303 /><rect x=1911 y=386 fill=#ffb002 /><rect x=1923 y=386 fill=#ffad01 /><rect x=1623 y=398 fill=#e5ff20 /><rect x=1635 y=398 fill=#ebff1f /><rect x=1647 y=398 fill=#f0ff1e /><rect x=1659 y=398 fill=#f6ff1d /><rect x=1671 y=398 fill=#fbff1c /><rect x=1683 y=398 fill=#fffd1b /><rect x=1695 y=398 fill=#fff819 /><rect x=1707 y=398 fill=#fff217 /><rect x=1719 y=398 fill=#ffed16 /><rect x=1731 y=398 fill=#ffe814 /><rect x=1743 y=398 fill=#ffe313 /><rect x=1755 y=398 fill=#ffdf12 /><rect x=1767 y=398 fill=#ffda10 /><rect x=1779 y=398 fill=#ffd60f /><rect x=1791 y=398 fill=#ffd20e /><rect x=1803 y=398 fill=#ffce0d /><rect x=1815 y=398 fill=#ffca0b /><rect x=1827 y=398 fill=#ffc60a /><rect x=1839 y=398 fill=#ffc209 /><rect x=1851 y=398 fill=#ffbe08 /><rect x=1863 y=398 fill=#ffbb07 /><rect x=1875 y=398 fill=#ffb706 /><rect x=1887 y=398 fill=#ffb405 /><rect x=1899 y=398 fill=#ffb004 /><rect x=1911 y=398 fill=#ffad03 /><rect x=1923 y=398 fill=#ffaa02 /></g>
<path d="M1521.4 76.84 L2026.2 454.52 L2026.2 96.6 L1521.4 96.6 Z" fill="#000" fill-opacity=".4"/>
<ellipse cx="1883.34" cy="385.83" rx="4.6" ry="4.6" fill="#ffe61e" stroke="#000" stroke-width="1.5"/>
<ellipse cx="1747.55" cy="242.67" rx="4.6" ry="4.6" fill="#ffff00" stroke="#000" stroke-width="1.5"/>
<rect x="1765.2" y="256.8" width="14.6" height="16.4" fill="none" stroke="#fff" stroke-width="1.6"/>
</g>
<rect x="1645.8" y="144.8" width="256" height="241.4" fill="none" stroke="#1a1a1a" stroke-width="1.2"/>
<rect x="1647.2" y="146.2" width="253.2" height="238.6" fill="none" stroke="#a8a8b0" stroke-width="1.6"/>
<rect x="1613" y="729.2" width="290.3" height="35" fill="#323232"/>
<text x="1614" y="757" font-size="26" fill="#f4f4f4" textLength="242.7" lengthAdjust="spacingAndGlyphs" stroke="#f4f4f4" stroke-width="0.4">RGB Triplet: 255, 255, 0</text>
</g>
<g id="sec_table">
<defs><linearGradient id="th" x1="0" x2="0" y1="0" y2="1"><stop offset="0" stop-color="#2b2b2b"/><stop offset="0.48" stop-color="#272727"/><stop offset="0.52" stop-color="#101010"/><stop offset="1" stop-color="#1e1e1e"/></linearGradient><linearGradient id="tl" x1="0" x2="0" y1="0" y2="1"><stop offset="0" stop-color="#8c8c8c"/><stop offset="0.07" stop-color="#828282"/><stop offset="0.92" stop-color="#808080"/><stop offset="1" stop-color="#6e6e6e"/></linearGradient><linearGradient id="tlx" x1="0" x2="1" y1="0" y2="0"><stop offset="0" stop-color="#000" stop-opacity=".12"/><stop offset="0.5" stop-color="#000" stop-opacity="0"/><stop offset="1" stop-color="#000" stop-opacity=".1"/></linearGradient></defs>
<rect x="370.1" y="836.2" width="1491.7" height="35.4" fill="url(#th)"/>
<rect x="370.1" y="836.2" width="8.1" height="35.4" fill="#000"/>
<rect x="378.2" y="871.6" width="1483.6" height="33.7" fill="#414141"/>
<rect x="370.1" y="871.6" width="8.1" height="33.7" fill="#2c2c2c"/>
<rect x="378.2" y="905.3" width="1483.6" height="33.3" fill="url(#tl)"/>
<rect x="370.1" y="905.3" width="8.1" height="33.3" fill="#343434"/>
<rect x="378.2" y="938.6" width="1483.6" height="33.2" fill="#414141"/>
<rect x="370.1" y="938.6" width="8.1" height="33.2" fill="#2c2c2c"/>
<rect x="378.2" y="971.8" width="1483.6" height="33.3" fill="url(#tl)"/>
<rect x="370.1" y="971.8" width="8.1" height="33.3" fill="#343434"/>
<rect x="378.2" y="1005.1" width="1483.6" height="32.7" fill="#414141"/>
<rect x="370.1" y="1005.1" width="8.1" height="32.7" fill="#2c2c2c"/>
<rect x="378.2" y="1037.8" width="1483.6" height="34" fill="url(#tl)"/>
<rect x="370.1" y="1037.8" width="8.1" height="34" fill="#343434"/>
<rect x="378.2" y="1071.8" width="1483.6" height="32.1" fill="#414141"/>
<rect x="370.1" y="1071.8" width="8.1" height="32.1" fill="#2c2c2c"/>
<g fill="#ececec" stroke="#ececec" stroke-width=".3">
<text x="451.3" y="861" font-size="19.8" textLength="25.3" lengthAdjust="spacingAndGlyphs">White</text>
<text x="492.4" y="861" font-size="19.8" textLength="32.7" lengthAdjust="spacingAndGlyphs">Gray 80</text>
<text x="534.4" y="861" font-size="19.8" textLength="32.3" lengthAdjust="spacingAndGlyphs">Gray 65</text>
<text x="576" y="861" font-size="19.8" textLength="32.2" lengthAdjust="spacingAndGlyphs">Gray 50</text>
<text x="617.5" y="861" font-size="19.8" textLength="32.3" lengthAdjust="spacingAndGlyphs">Gray 35</text>
<text x="659.3" y="861" font-size="19.8" textLength="22.5" lengthAdjust="spacingAndGlyphs">Black</text>
<text x="689.8" y="861" font-size="19.8" textLength="39.1" lengthAdjust="spacingAndGlyphs">Dark Skin</text>
<text x="734.3" y="861" font-size="19.8" textLength="39.8" lengthAdjust="spacingAndGlyphs">Light Skin</text>
<text x="779.4" y="861" font-size="19.8" textLength="35.2" lengthAdjust="spacingAndGlyphs">Blue Sky</text>
<text x="819.5" y="861" font-size="19.8" textLength="29.5" lengthAdjust="spacingAndGlyphs">Foliage</text>
<text x="855.9" y="861" font-size="19.8" textLength="49.1" lengthAdjust="spacingAndGlyphs">Blue Flower</text>
<text x="910.3" y="861" font-size="19.8" textLength="53.1" lengthAdjust="spacingAndGlyphs">Bluish Green</text>
<text x="968.9" y="861" font-size="19.8" textLength="30.1" lengthAdjust="spacingAndGlyphs">Orange</text>
<text x="1010.5" y="861" font-size="19.8" textLength="54.4" lengthAdjust="spacingAndGlyphs">Purplish Blue</text>
<text x="1070.6" y="861" font-size="19.8" textLength="59.4" lengthAdjust="spacingAndGlyphs">Moderate Red</text>
<text x="1135.9" y="861" font-size="19.8" textLength="26.4" lengthAdjust="spacingAndGlyphs">Purple</text>
<text x="1171.3" y="861" font-size="19.8" textLength="55" lengthAdjust="spacingAndGlyphs">Yellow Green</text>
<text x="1231.2" y="861" font-size="19.8" textLength="60" lengthAdjust="spacingAndGlyphs">Orange Yellow</text>
<text x="1296.6" y="861" font-size="19.8" textLength="18.4" lengthAdjust="spacingAndGlyphs">Blue</text>
<text x="1332.6" y="861" font-size="19.8" textLength="25.7" lengthAdjust="spacingAndGlyphs">Green</text>
<text x="1374.5" y="861" font-size="19.8" textLength="15.7" lengthAdjust="spacingAndGlyphs">Red</text>
<text x="1410.3" y="861" font-size="19.8" textLength="27.2" lengthAdjust="spacingAndGlyphs">Yellow</text>
<text x="1452.3" y="861" font-size="19.8" textLength="36.8" lengthAdjust="spacingAndGlyphs">Magenta</text>
<text x="1494.5" y="861" font-size="19.8" textLength="20.7" lengthAdjust="spacingAndGlyphs">Cyan</text>
<text x="1536.4" y="861" font-size="19.8" textLength="41" lengthAdjust="spacingAndGlyphs">100% Red</text>
<text x="1582.9" y="861" font-size="19.8" textLength="51.3" lengthAdjust="spacingAndGlyphs">100% Green</text>
<text x="1639.3" y="861" font-size="19.8" textLength="43.6" lengthAdjust="spacingAndGlyphs">100% Blue</text>
<text x="1688.2" y="861" font-size="19.8" textLength="45.5" lengthAdjust="spacingAndGlyphs">100% Cyan</text>
<text x="1739.3" y="861" font-size="19.8" textLength="62.1" lengthAdjust="spacingAndGlyphs">100% Magenta</text>
<text x="1807" y="861" font-size="19.8" textLength="52.4" lengthAdjust="spacingAndGlyphs">100% Yellow</text>
<text x="381" y="895.9" font-size="22.5" textLength="35.4" lengthAdjust="spacingAndGlyphs">x: CIE31</text>
<text x="451" y="895.9" font-size="22.5" textLength="24.74" lengthAdjust="spacingAndGlyphs">0,305</text>
<text x="492.5" y="895.9" font-size="22.5" textLength="24.74" lengthAdjust="spacingAndGlyphs">0,305</text>
<text x="534" y="895.9" font-size="22.5" textLength="24.74" lengthAdjust="spacingAndGlyphs">0,305</text>
<text x="575.5" y="895.9" font-size="22.5" textLength="24.74" lengthAdjust="spacingAndGlyphs">0,305</text>
<text x="617.5" y="895.9" font-size="22.5" textLength="24.74" lengthAdjust="spacingAndGlyphs">0,304</text>
<text x="659" y="895.9" font-size="22.5" textLength="24.74" lengthAdjust="spacingAndGlyphs">0,258</text>
<text x="690" y="895.9" font-size="22.5" textLength="24.74" lengthAdjust="spacingAndGlyphs">0,396</text>
<text x="734" y="895.9" font-size="22.5" textLength="24.74" lengthAdjust="spacingAndGlyphs">0,369</text>
<text x="779" y="895.9" font-size="22.5" textLength="24.74" lengthAdjust="spacingAndGlyphs">0,243</text>
<text x="819" y="895.9" font-size="22.5" textLength="24.74" lengthAdjust="spacingAndGlyphs">0,334</text>
<text x="855.5" y="895.9" font-size="22.5" textLength="24.74" lengthAdjust="spacingAndGlyphs">0,261</text>
<text x="910" y="895.9" font-size="22.5" textLength="24.74" lengthAdjust="spacingAndGlyphs">0,257</text>
<text x="968.5" y="895.9" font-size="22.5" textLength="24.74" lengthAdjust="spacingAndGlyphs">0,508</text>
<text x="1010" y="895.9" font-size="22.5" textLength="24.74" lengthAdjust="spacingAndGlyphs">0,209</text>
<text x="1070" y="895.9" font-size="22.5" textLength="24.74" lengthAdjust="spacingAndGlyphs">0,453</text>
<text x="1135" y="895.9" font-size="22.5" textLength="24.74" lengthAdjust="spacingAndGlyphs">0,279</text>
<text x="1171" y="895.9" font-size="22.5" textLength="24.74" lengthAdjust="spacingAndGlyphs">0,371</text>
<text x="1231.5" y="895.9" font-size="22.5" textLength="24.74" lengthAdjust="spacingAndGlyphs">0,467</text>
<text x="1296.5" y="895.9" font-size="22.5" textLength="24.74" lengthAdjust="spacingAndGlyphs">0,184</text>
<text x="1332.5" y="895.9" font-size="22.5" textLength="24.74" lengthAdjust="spacingAndGlyphs">0,301</text>
<text x="1374" y="895.9" font-size="22.5" textLength="24.74" lengthAdjust="spacingAndGlyphs">0,538</text>
<text x="1410" y="895.9" font-size="22.5" textLength="24.74" lengthAdjust="spacingAndGlyphs">0,441</text>
<text x="1452" y="895.9" font-size="22.5" textLength="24.74" lengthAdjust="spacingAndGlyphs">0,361</text>
<text x="1494" y="895.9" font-size="22.5" textLength="24.74" lengthAdjust="spacingAndGlyphs">0,204</text>
<text x="1536" y="895.9" font-size="22.5" textLength="24.74" lengthAdjust="spacingAndGlyphs">0,645</text>
<text x="1582.5" y="895.9" font-size="22.5" textLength="24.74" lengthAdjust="spacingAndGlyphs">0,299</text>
<text x="1638.5" y="895.9" font-size="22.5" textLength="24.74" lengthAdjust="spacingAndGlyphs">0,151</text>
<text x="1688" y="895.9" font-size="22.5" textLength="24.74" lengthAdjust="spacingAndGlyphs">0,222</text>
<text x="1739" y="895.9" font-size="22.5" textLength="24.74" lengthAdjust="spacingAndGlyphs">0,308</text>
<text x="1806.5" y="895.9" font-size="22.5" textLength="24.74" lengthAdjust="spacingAndGlyphs">0,414</text>
<text x="381" y="929.6" font-size="22.5" textLength="35.4" lengthAdjust="spacingAndGlyphs">y: CIE31</text>
<text x="451" y="929.6" font-size="22.5" textLength="24.74" lengthAdjust="spacingAndGlyphs">0,324</text>
<text x="492.5" y="929.6" font-size="22.5" textLength="24.74" lengthAdjust="spacingAndGlyphs">0,324</text>
<text x="534" y="929.6" font-size="22.5" textLength="24.74" lengthAdjust="spacingAndGlyphs">0,324</text>
<text x="575.5" y="929.6" font-size="22.5" textLength="24.74" lengthAdjust="spacingAndGlyphs">0,325</text>
<text x="617.5" y="929.6" font-size="22.5" textLength="24.74" lengthAdjust="spacingAndGlyphs">0,325</text>
<text x="659" y="929.6" font-size="22.5" textLength="24.74" lengthAdjust="spacingAndGlyphs">0,268</text>
<text x="690" y="929.6" font-size="22.5" textLength="24.74" lengthAdjust="spacingAndGlyphs">0,367</text>
<text x="734" y="929.6" font-size="22.5" textLength="24.74" lengthAdjust="spacingAndGlyphs">0,354</text>
<text x="779" y="929.6" font-size="22.5" textLength="24.74" lengthAdjust="spacingAndGlyphs">0,260</text>
<text x="819" y="929.6" font-size="22.5" textLength="24.74" lengthAdjust="spacingAndGlyphs">0,433</text>
<text x="855.5" y="929.6" font-size="22.5" textLength="24.74" lengthAdjust="spacingAndGlyphs">0,248</text>
<text x="910" y="929.6" font-size="22.5" textLength="24.74" lengthAdjust="spacingAndGlyphs">0,356</text>
<text x="968.5" y="929.6" font-size="22.5" textLength="24.74" lengthAdjust="spacingAndGlyphs">0,413</text>
<text x="1010" y="929.6" font-size="22.5" textLength="24.74" lengthAdjust="spacingAndGlyphs">0,184</text>
<text x="1070" y="929.6" font-size="22.5" textLength="24.74" lengthAdjust="spacingAndGlyphs">0,310</text>
<text x="1135" y="929.6" font-size="22.5" textLength="24.74" lengthAdjust="spacingAndGlyphs">0,209</text>
<text x="1171" y="929.6" font-size="22.5" textLength="24.74" lengthAdjust="spacingAndGlyphs">0,497</text>
<text x="1231.5" y="929.6" font-size="22.5" textLength="24.74" lengthAdjust="spacingAndGlyphs">0,447</text>
<text x="1296.5" y="929.6" font-size="22.5" textLength="24.74" lengthAdjust="spacingAndGlyphs">0,130</text>
<text x="1332.5" y="929.6" font-size="22.5" textLength="24.74" lengthAdjust="spacingAndGlyphs">0,494</text>
<text x="1374" y="929.6" font-size="22.5" textLength="24.74" lengthAdjust="spacingAndGlyphs">0,317</text>
<text x="1410" y="929.6" font-size="22.5" textLength="24.74" lengthAdjust="spacingAndGlyphs">0,480</text>
<text x="1452" y="929.6" font-size="22.5" textLength="24.74" lengthAdjust="spacingAndGlyphs">0,240</text>
<text x="1494" y="929.6" font-size="22.5" textLength="24.74" lengthAdjust="spacingAndGlyphs">0,263</text>
<text x="1536" y="929.6" font-size="22.5" textLength="24.74" lengthAdjust="spacingAndGlyphs">0,332</text>
<text x="1582.5" y="929.6" font-size="22.5" textLength="24.74" lengthAdjust="spacingAndGlyphs">0,602</text>
<text x="1638.5" y="929.6" font-size="22.5" textLength="24.74" lengthAdjust="spacingAndGlyphs">0,059</text>
<text x="1688" y="929.6" font-size="22.5" textLength="24.74" lengthAdjust="spacingAndGlyphs">0,322</text>
<text x="1739" y="929.6" font-size="22.5" textLength="24.74" lengthAdjust="spacingAndGlyphs">0,148</text>
<text x="1806.5" y="929.6" font-size="22.5" textLength="24.74" lengthAdjust="spacingAndGlyphs">0,510</text>
<text x="381" y="962.9" font-size="22.5" textLength="6" lengthAdjust="spacingAndGlyphs">Y</text>
<text x="451" y="962.9" font-size="22.5" textLength="35.73" lengthAdjust="spacingAndGlyphs">530,202</text>
<text x="492.5" y="962.9" font-size="22.5" textLength="35.73" lengthAdjust="spacingAndGlyphs">415,665</text>
<text x="534" y="962.9" font-size="22.5" textLength="35.73" lengthAdjust="spacingAndGlyphs">335,288</text>
<text x="575.5" y="962.9" font-size="22.5" textLength="35.73" lengthAdjust="spacingAndGlyphs">258,786</text>
<text x="617.5" y="962.9" font-size="22.5" textLength="35.73" lengthAdjust="spacingAndGlyphs">182,268</text>
<text x="659" y="962.9" font-size="22.5" textLength="24.74" lengthAdjust="spacingAndGlyphs">0,424</text>
<text x="690" y="962.9" font-size="22.5" textLength="30.24" lengthAdjust="spacingAndGlyphs">51,032</text>
<text x="734" y="962.9" font-size="22.5" textLength="35.73" lengthAdjust="spacingAndGlyphs">182,889</text>
<text x="779" y="962.9" font-size="22.5" textLength="30.24" lengthAdjust="spacingAndGlyphs">98,956</text>
<text x="819" y="962.9" font-size="22.5" textLength="30.24" lengthAdjust="spacingAndGlyphs">67,388</text>
<text x="855.5" y="962.9" font-size="22.5" textLength="35.73" lengthAdjust="spacingAndGlyphs">122,952</text>
<text x="910" y="962.9" font-size="22.5" textLength="35" lengthAdjust="spacingAndGlyphs">222,117</text>
<text x="968.5" y="962.9" font-size="22.5" textLength="35.73" lengthAdjust="spacingAndGlyphs">146,182</text>
<text x="1010" y="962.9" font-size="22.5" textLength="30.24" lengthAdjust="spacingAndGlyphs">61,023</text>
<text x="1070" y="962.9" font-size="22.5" textLength="30.24" lengthAdjust="spacingAndGlyphs">94,737</text>
<text x="1135" y="962.9" font-size="22.5" textLength="30.24" lengthAdjust="spacingAndGlyphs">32,696</text>
<text x="1171" y="962.9" font-size="22.5" textLength="35.73" lengthAdjust="spacingAndGlyphs">224,962</text>
<text x="1231.5" y="962.9" font-size="22.5" textLength="35.73" lengthAdjust="spacingAndGlyphs">222,486</text>
<text x="1296.5" y="962.9" font-size="22.5" textLength="30.24" lengthAdjust="spacingAndGlyphs">30,952</text>
<text x="1332.5" y="962.9" font-size="22.5" textLength="35.73" lengthAdjust="spacingAndGlyphs">120,998</text>
<text x="1374" y="962.9" font-size="22.5" textLength="30.24" lengthAdjust="spacingAndGlyphs">57,068</text>
<text x="1410" y="962.9" font-size="22.5" textLength="35.73" lengthAdjust="spacingAndGlyphs">307,042</text>
<text x="1452" y="962.9" font-size="22.5" textLength="30.24" lengthAdjust="spacingAndGlyphs">96,277</text>
<text x="1494" y="962.9" font-size="22.5" textLength="35.73" lengthAdjust="spacingAndGlyphs">103,097</text>
<text x="1536" y="962.9" font-size="22.5" textLength="35.73" lengthAdjust="spacingAndGlyphs">105,714</text>
<text x="1582.5" y="962.9" font-size="22.5" textLength="35.73" lengthAdjust="spacingAndGlyphs">376,383</text>
<text x="1638.5" y="962.9" font-size="22.5" textLength="30.24" lengthAdjust="spacingAndGlyphs">39,381</text>
<text x="1688" y="962.9" font-size="22.5" textLength="35.73" lengthAdjust="spacingAndGlyphs">419,600</text>
<text x="1739" y="962.9" font-size="22.5" textLength="35.73" lengthAdjust="spacingAndGlyphs">146,725</text>
<text x="1806.5" y="962.9" font-size="22.5" textLength="35.73" lengthAdjust="spacingAndGlyphs">488,019</text>
<text x="381" y="996.1" font-size="22.5" textLength="63" lengthAdjust="spacingAndGlyphs">Target x:CIE31</text>
<text x="451" y="996.1" font-size="22.5" textLength="24.74" lengthAdjust="spacingAndGlyphs">0,313</text>
<text x="492.5" y="996.1" font-size="22.5" textLength="24.74" lengthAdjust="spacingAndGlyphs">0,313</text>
<text x="534" y="996.1" font-size="22.5" textLength="24.74" lengthAdjust="spacingAndGlyphs">0,313</text>
<text x="575.5" y="996.1" font-size="22.5" textLength="24.74" lengthAdjust="spacingAndGlyphs">0,313</text>
<text x="617.5" y="996.1" font-size="22.5" textLength="24.74" lengthAdjust="spacingAndGlyphs">0,313</text>
<text x="659" y="996.1" font-size="22.5" textLength="24.74" lengthAdjust="spacingAndGlyphs">0,313</text>
<text x="690" y="996.1" font-size="22.5" textLength="24.74" lengthAdjust="spacingAndGlyphs">0,400</text>
<text x="734" y="996.1" font-size="22.5" textLength="24.74" lengthAdjust="spacingAndGlyphs">0,380</text>
<text x="779" y="996.1" font-size="22.5" textLength="24.74" lengthAdjust="spacingAndGlyphs">0,250</text>
<text x="819" y="996.1" font-size="22.5" textLength="24.74" lengthAdjust="spacingAndGlyphs">0,340</text>
<text x="855.5" y="996.1" font-size="22.5" textLength="24.74" lengthAdjust="spacingAndGlyphs">0,268</text>
<text x="910" y="996.1" font-size="22.5" textLength="24.74" lengthAdjust="spacingAndGlyphs">0,263</text>
<text x="968.5" y="996.1" font-size="22.5" textLength="24.74" lengthAdjust="spacingAndGlyphs">0,512</text>
<text x="1010" y="996.1" font-size="22.5" textLength="24.74" lengthAdjust="spacingAndGlyphs">0,217</text>
<text x="1070" y="996.1" font-size="22.5" textLength="24.74" lengthAdjust="spacingAndGlyphs">0,462</text>
<text x="1135" y="996.1" font-size="22.5" textLength="24.74" lengthAdjust="spacingAndGlyphs">0,290</text>
<text x="1171" y="996.1" font-size="22.5" textLength="24.74" lengthAdjust="spacingAndGlyphs">0,376</text>
<text x="1231.5" y="996.1" font-size="22.5" textLength="24.74" lengthAdjust="spacingAndGlyphs">0,474</text>
<text x="1296.5" y="996.1" font-size="22.5" textLength="24.74" lengthAdjust="spacingAndGlyphs">0,192</text>
<text x="1332.5" y="996.1" font-size="22.5" textLength="24.74" lengthAdjust="spacingAndGlyphs">0,305</text>
<text x="1374" y="996.1" font-size="22.5" textLength="24.74" lengthAdjust="spacingAndGlyphs">0,537</text>
<text x="1410" y="996.1" font-size="22.5" textLength="24.74" lengthAdjust="spacingAndGlyphs">0,447</text>
<text x="1452" y="996.1" font-size="22.5" textLength="24.74" lengthAdjust="spacingAndGlyphs">0,374</text>
<text x="1494" y="996.1" font-size="22.5" textLength="24.74" lengthAdjust="spacingAndGlyphs">0,208</text>
<text x="1536" y="996.1" font-size="22.5" textLength="24.74" lengthAdjust="spacingAndGlyphs">0,640</text>
<text x="1582.5" y="996.1" font-size="22.5" textLength="24.74" lengthAdjust="spacingAndGlyphs">0,300</text>
<text x="1638.5" y="996.1" font-size="22.5" textLength="24.74" lengthAdjust="spacingAndGlyphs">0,150</text>
<text x="1688" y="996.1" font-size="22.5" textLength="24.74" lengthAdjust="spacingAndGlyphs">0,225</text>
<text x="1739" y="996.1" font-size="22.5" textLength="24.74" lengthAdjust="spacingAndGlyphs">0,321</text>
<text x="1806.5" y="996.1" font-size="22.5" textLength="24.74" lengthAdjust="spacingAndGlyphs">0,419</text>
<text x="381" y="1029.4" font-size="22.5" textLength="63.5" lengthAdjust="spacingAndGlyphs">Target y:CIE31</text>
<text x="451" y="1029.4" font-size="22.5" textLength="24.74" lengthAdjust="spacingAndGlyphs">0,329</text>
<text x="492.5" y="1029.4" font-size="22.5" textLength="24.74" lengthAdjust="spacingAndGlyphs">0,329</text>
<text x="534" y="1029.4" font-size="22.5" textLength="24.74" lengthAdjust="spacingAndGlyphs">0,329</text>
<text x="575.5" y="1029.4" font-size="22.5" textLength="24.74" lengthAdjust="spacingAndGlyphs">0,329</text>
<text x="617.5" y="1029.4" font-size="22.5" textLength="24.74" lengthAdjust="spacingAndGlyphs">0,329</text>
<text x="659" y="1029.4" font-size="22.5" textLength="24.74" lengthAdjust="spacingAndGlyphs">0,329</text>
<text x="690" y="1029.4" font-size="22.5" textLength="24.74" lengthAdjust="spacingAndGlyphs">0,364</text>
<text x="734" y="1029.4" font-size="22.5" textLength="24.74" lengthAdjust="spacingAndGlyphs">0,356</text>
<text x="779" y="1029.4" font-size="22.5" textLength="24.74" lengthAdjust="spacingAndGlyphs">0,266</text>
<text x="819" y="1029.4" font-size="22.5" textLength="24.74" lengthAdjust="spacingAndGlyphs">0,427</text>
<text x="855.5" y="1029.4" font-size="22.5" textLength="24.74" lengthAdjust="spacingAndGlyphs">0,253</text>
<text x="910" y="1029.4" font-size="22.5" textLength="24.74" lengthAdjust="spacingAndGlyphs">0,362</text>
<text x="968.5" y="1029.4" font-size="22.5" textLength="24.74" lengthAdjust="spacingAndGlyphs">0,406</text>
<text x="1010" y="1029.4" font-size="22.5" textLength="24.74" lengthAdjust="spacingAndGlyphs">0,192</text>
<text x="1070" y="1029.4" font-size="22.5" textLength="24.74" lengthAdjust="spacingAndGlyphs">0,313</text>
<text x="1135" y="1029.4" font-size="22.5" textLength="24.74" lengthAdjust="spacingAndGlyphs">0,221</text>
<text x="1171" y="1029.4" font-size="22.5" textLength="24.74" lengthAdjust="spacingAndGlyphs">0,493</text>
<text x="1231.5" y="1029.4" font-size="22.5" textLength="24.74" lengthAdjust="spacingAndGlyphs">0,439</text>
<text x="1296.5" y="1029.4" font-size="22.5" textLength="24.74" lengthAdjust="spacingAndGlyphs">0,141</text>
<text x="1332.5" y="1029.4" font-size="22.5" textLength="24.74" lengthAdjust="spacingAndGlyphs">0,489</text>
<text x="1374" y="1029.4" font-size="22.5" textLength="24.74" lengthAdjust="spacingAndGlyphs">0,317</text>
<text x="1410" y="1029.4" font-size="22.5" textLength="24.74" lengthAdjust="spacingAndGlyphs">0,474</text>
<text x="1452" y="1029.4" font-size="22.5" textLength="24.74" lengthAdjust="spacingAndGlyphs">0,247</text>
<text x="1494" y="1029.4" font-size="22.5" textLength="24.74" lengthAdjust="spacingAndGlyphs">0,270</text>
<text x="1536" y="1029.4" font-size="22.5" textLength="24.74" lengthAdjust="spacingAndGlyphs">0,330</text>
<text x="1582.5" y="1029.4" font-size="22.5" textLength="24.74" lengthAdjust="spacingAndGlyphs">0,600</text>
<text x="1638.5" y="1029.4" font-size="22.5" textLength="24.74" lengthAdjust="spacingAndGlyphs">0,060</text>
<text x="1688" y="1029.4" font-size="22.5" textLength="24.74" lengthAdjust="spacingAndGlyphs">0,329</text>
<text x="1739" y="1029.4" font-size="22.5" textLength="24.74" lengthAdjust="spacingAndGlyphs">0,154</text>
<text x="1806.5" y="1029.4" font-size="22.5" textLength="24.74" lengthAdjust="spacingAndGlyphs">0,505</text>
<text x="381" y="1062.1" font-size="22.5" textLength="36.5" lengthAdjust="spacingAndGlyphs">Target Y</text>
<text x="451" y="1062.1" font-size="22.5" textLength="35.73" lengthAdjust="spacingAndGlyphs">530,202</text>
<text x="492.5" y="1062.1" font-size="22.5" textLength="35.73" lengthAdjust="spacingAndGlyphs">419,548</text>
<text x="534" y="1062.1" font-size="22.5" textLength="35.73" lengthAdjust="spacingAndGlyphs">338,055</text>
<text x="575.5" y="1062.1" font-size="22.5" textLength="35.73" lengthAdjust="spacingAndGlyphs">260,340</text>
<text x="617.5" y="1062.1" font-size="22.5" textLength="35.73" lengthAdjust="spacingAndGlyphs">181,284</text>
<text x="659" y="1062.1" font-size="22.5" textLength="24.74" lengthAdjust="spacingAndGlyphs">0,000</text>
<text x="690" y="1062.1" font-size="22.5" textLength="30.24" lengthAdjust="spacingAndGlyphs">53,409</text>
<text x="734" y="1062.1" font-size="22.5" textLength="35.73" lengthAdjust="spacingAndGlyphs">185,015</text>
<text x="779" y="1062.1" font-size="22.5" textLength="30.24" lengthAdjust="spacingAndGlyphs">99,139</text>
<text x="819" y="1062.1" font-size="22.5" textLength="30.24" lengthAdjust="spacingAndGlyphs">69,098</text>
<text x="855.5" y="1062.1" font-size="22.5" textLength="35.73" lengthAdjust="spacingAndGlyphs">123,635</text>
<text x="910" y="1062.1" font-size="22.5" textLength="35.73" lengthAdjust="spacingAndGlyphs">222,012</text>
<text x="968.5" y="1062.1" font-size="22.5" textLength="35.73" lengthAdjust="spacingAndGlyphs">150,301</text>
<text x="1010" y="1062.1" font-size="22.5" textLength="30.24" lengthAdjust="spacingAndGlyphs">62,319</text>
<text x="1070" y="1062.1" font-size="22.5" textLength="30.24" lengthAdjust="spacingAndGlyphs">99,018</text>
<text x="1135" y="1062.1" font-size="22.5" textLength="30.24" lengthAdjust="spacingAndGlyphs">35,388</text>
<text x="1171" y="1062.1" font-size="22.5" textLength="35.73" lengthAdjust="spacingAndGlyphs">226,698</text>
<text x="1231.5" y="1062.1" font-size="22.5" textLength="35.73" lengthAdjust="spacingAndGlyphs">225,404</text>
<text x="1296.5" y="1062.1" font-size="22.5" textLength="30.24" lengthAdjust="spacingAndGlyphs">33,100</text>
<text x="1332.5" y="1062.1" font-size="22.5" textLength="35.73" lengthAdjust="spacingAndGlyphs">121,805</text>
<text x="1374" y="1062.1" font-size="22.5" textLength="30.24" lengthAdjust="spacingAndGlyphs">61,832</text>
<text x="1410" y="1062.1" font-size="22.5" textLength="35.73" lengthAdjust="spacingAndGlyphs">312,626</text>
<text x="1452" y="1062.1" font-size="22.5" textLength="30.24" lengthAdjust="spacingAndGlyphs">99,816</text>
<text x="1494" y="1062.1" font-size="22.5" textLength="35.73" lengthAdjust="spacingAndGlyphs">102,954</text>
<text x="1536" y="1062.1" font-size="22.5" textLength="35" lengthAdjust="spacingAndGlyphs">112,751</text>
<text x="1582.5" y="1062.1" font-size="22.5" textLength="35.73" lengthAdjust="spacingAndGlyphs">379,179</text>
<text x="1638.5" y="1062.1" font-size="22.5" textLength="30.24" lengthAdjust="spacingAndGlyphs">38,273</text>
<text x="1688" y="1062.1" font-size="22.5" textLength="35.73" lengthAdjust="spacingAndGlyphs">417,452</text>
<text x="1739" y="1062.1" font-size="22.5" textLength="35.73" lengthAdjust="spacingAndGlyphs">151,024</text>
<text x="1806.5" y="1062.1" font-size="22.5" textLength="35.73" lengthAdjust="spacingAndGlyphs">491,929</text>
<text x="381" y="1096.1" font-size="22.5" textLength="38" lengthAdjust="spacingAndGlyphs">ΔE 2000</text>
<text x="451" y="1096.1" font-size="22.5" textLength="24.74" lengthAdjust="spacingAndGlyphs">3,908</text>
<text x="492.5" y="1096.1" font-size="22.5" textLength="24.74" lengthAdjust="spacingAndGlyphs">3,621</text>
<text x="534" y="1096.1" font-size="22.5" textLength="24.74" lengthAdjust="spacingAndGlyphs">3,428</text>
<text x="575.5" y="1096.1" font-size="22.5" textLength="24.74" lengthAdjust="spacingAndGlyphs">3,417</text>
<text x="617.5" y="1096.1" font-size="22.5" textLength="24.74" lengthAdjust="spacingAndGlyphs">3,123</text>
<text x="659" y="1096.1" font-size="22.5" textLength="24.74" lengthAdjust="spacingAndGlyphs">0,867</text>
<text x="690" y="1096.1" font-size="22.5" textLength="24.74" lengthAdjust="spacingAndGlyphs">1,709</text>
<text x="734" y="1096.1" font-size="22.5" textLength="24.74" lengthAdjust="spacingAndGlyphs">2,095</text>
<text x="779" y="1096.1" font-size="22.5" textLength="24.74" lengthAdjust="spacingAndGlyphs">1,164</text>
<text x="819" y="1096.1" font-size="22.5" textLength="24.74" lengthAdjust="spacingAndGlyphs">1,500</text>
<text x="855.5" y="1096.1" font-size="22.5" textLength="24.74" lengthAdjust="spacingAndGlyphs">1,875</text>
<text x="910" y="1096.1" font-size="22.5" textLength="24.74" lengthAdjust="spacingAndGlyphs">1,508</text>
<text x="968.5" y="1096.1" font-size="22.5" textLength="24.74" lengthAdjust="spacingAndGlyphs">2,167</text>
<text x="1010" y="1096.1" font-size="22.5" textLength="24.74" lengthAdjust="spacingAndGlyphs">1,108</text>
<text x="1070" y="1096.1" font-size="22.5" textLength="24.74" lengthAdjust="spacingAndGlyphs">1,567</text>
<text x="1135" y="1096.1" font-size="22.5" textLength="24.74" lengthAdjust="spacingAndGlyphs">1,772</text>
<text x="1171" y="1096.1" font-size="22.5" textLength="24.74" lengthAdjust="spacingAndGlyphs">1,178</text>
<text x="1231.5" y="1096.1" font-size="22.5" textLength="24.74" lengthAdjust="spacingAndGlyphs">2,641</text>
<text x="1296.5" y="1096.1" font-size="22.5" textLength="24.74" lengthAdjust="spacingAndGlyphs">1,423</text>
<text x="1332.5" y="1096.1" font-size="22.5" textLength="24.74" lengthAdjust="spacingAndGlyphs">0,719</text>
<text x="1374" y="1096.1" font-size="22.5" textLength="24.74" lengthAdjust="spacingAndGlyphs">1,356</text>
<text x="1410" y="1096.1" font-size="22.5" textLength="24.74" lengthAdjust="spacingAndGlyphs">2,129</text>
<text x="1452" y="1096.1" font-size="22.5" textLength="24.74" lengthAdjust="spacingAndGlyphs">1,827</text>
<text x="1494" y="1096.1" font-size="22.5" textLength="24.74" lengthAdjust="spacingAndGlyphs">0,985</text>
<text x="1536" y="1096.1" font-size="22.5" textLength="24.01" lengthAdjust="spacingAndGlyphs">2,011</text>
<text x="1582.5" y="1096.1" font-size="22.5" textLength="24.74" lengthAdjust="spacingAndGlyphs">0,200</text>
<text x="1638.5" y="1096.1" font-size="22.5" textLength="24.74" lengthAdjust="spacingAndGlyphs">0,973</text>
<text x="1688" y="1096.1" font-size="22.5" textLength="24.74" lengthAdjust="spacingAndGlyphs">1,687</text>
<text x="1739" y="1096.1" font-size="22.5" textLength="24.74" lengthAdjust="spacingAndGlyphs">1,481</text>
<text x="1806.5" y="1096.1" font-size="22.5" textLength="24.74" lengthAdjust="spacingAndGlyphs">1,562</text>
</g>
</g>
<g id="sec_bottom">
<defs><linearGradient id="bb" x1="0" x2="0" y1="0" y2="1"><stop offset="0" stop-color="#969696"/><stop offset="0.5" stop-color="#7c7c7c"/><stop offset="1" stop-color="#5a5a5a"/></linearGradient><linearGradient id="tb" x1="0" x2="0" y1="0" y2="1"><stop offset="0" stop-color="#929292"/><stop offset="1" stop-color="#666666"/></linearGradient><linearGradient id="tbd" x1="0" x2="0" y1="0" y2="1"><stop offset="0" stop-color="#444444"/><stop offset="1" stop-color="#2c2c2c"/></linearGradient><linearGradient id="cir" x1="0" x2="0" y1="0" y2="1"><stop offset="0" stop-color="#a2a2a2"/><stop offset="1" stop-color="#7a7a7a"/></linearGradient><clipPath id="btc"><rect x="0" y="1125" width="1645" height="60"/></clipPath></defs>
<g clip-path="url(#btc)">
<path d="M2.15 1172.4 V1135 Q2.15 1132.2 4.95 1132.2 H51.95 Q54.75 1132.2 54.75 1135 V1172.4 Z" fill="url(#bb)" stroke="#a2a2a2" stroke-width=".8"/>
<rect x="6.35" y="1136.3" width="44.7" height="20.2" rx="2.5" fill="#ffffff" stroke="#000" stroke-opacity=".25" stroke-width=".8"/>
<text x="28.45" y="1168.8" font-size="10.4" fill="#2a2a2a" text-anchor="middle" textLength="25" lengthAdjust="spacingAndGlyphs" stroke="#2a2a2a" stroke-width=".3">White</text>
<path d="M56.91 1172.4 V1135 Q56.91 1132.2 59.71 1132.2 H106.71 Q109.51 1132.2 109.51 1135 V1172.4 Z" fill="url(#bb)" stroke="#a2a2a2" stroke-width=".8"/>
<rect x="61.11" y="1136.3" width="44.7" height="20.2" rx="2.5" fill="#e6e6e6" stroke="#000" stroke-opacity=".25" stroke-width=".8"/>
<text x="83.21" y="1168.8" font-size="10.4" fill="#2a2a2a" text-anchor="middle" textLength="32.5" lengthAdjust="spacingAndGlyphs" stroke="#2a2a2a" stroke-width=".3">Gray 80</text>
<path d="M111.67 1172.4 V1135 Q111.67 1132.2 114.47 1132.2 H161.47 Q164.27 1132.2 164.27 1135 V1172.4 Z" fill="url(#bb)" stroke="#a2a2a2" stroke-width=".8"/>
<rect x="115.87" y="1136.3" width="44.7" height="20.2" rx="2.5" fill="#d2d2d2" stroke="#000" stroke-opacity=".25" stroke-width=".8"/>
<text x="137.97" y="1168.8" font-size="10.4" fill="#2a2a2a" text-anchor="middle" textLength="32.5" lengthAdjust="spacingAndGlyphs" stroke="#2a2a2a" stroke-width=".3">Gray 65</text>
<path d="M166.43 1172.4 V1135 Q166.43 1132.2 169.23 1132.2 H216.23 Q219.03 1132.2 219.03 1135 V1172.4 Z" fill="url(#bb)" stroke="#a2a2a2" stroke-width=".8"/>
<rect x="170.63" y="1136.3" width="44.7" height="20.2" rx="2.5" fill="#bababa" stroke="#000" stroke-opacity=".25" stroke-width=".8"/>
<text x="192.73" y="1168.8" font-size="10.4" fill="#2a2a2a" text-anchor="middle" textLength="32.5" lengthAdjust="spacingAndGlyphs" stroke="#2a2a2a" stroke-width=".3">Gray 50</text>
<path d="M221.19 1172.4 V1135 Q221.19 1132.2 223.99 1132.2 H270.99 Q273.79 1132.2 273.79 1135 V1172.4 Z" fill="url(#bb)" stroke="#a2a2a2" stroke-width=".8"/>
<rect x="225.39" y="1136.3" width="44.7" height="20.2" rx="2.5" fill="#9e9e9e" stroke="#000" stroke-opacity=".25" stroke-width=".8"/>
<text x="247.49" y="1168.8" font-size="10.4" fill="#2a2a2a" text-anchor="middle" textLength="32.5" lengthAdjust="spacingAndGlyphs" stroke="#2a2a2a" stroke-width=".3">Gray 35</text>
<path d="M275.95 1172.4 V1135 Q275.95 1132.2 278.75 1132.2 H325.75 Q328.55 1132.2 328.55 1135 V1172.4 Z" fill="url(#bb)" stroke="#a2a2a2" stroke-width=".8"/>
<rect x="280.15" y="1136.3" width="44.7" height="20.2" rx="2.5" fill="#000000" stroke="#000" stroke-opacity=".25" stroke-width=".8"/>
<text x="302.25" y="1168.8" font-size="10.4" fill="#2a2a2a" text-anchor="middle" textLength="22.5" lengthAdjust="spacingAndGlyphs" stroke="#2a2a2a" stroke-width=".3">Black</text>
<path d="M330.71 1172.4 V1135 Q330.71 1132.2 333.51 1132.2 H380.51 Q383.31 1132.2 383.31 1135 V1172.4 Z" fill="url(#bb)" stroke="#a2a2a2" stroke-width=".8"/>
<rect x="334.91" y="1136.3" width="44.7" height="20.2" rx="2.5" fill="#735244" stroke="#000" stroke-opacity=".25" stroke-width=".8"/>
<text x="357.01" y="1168.8" font-size="10.4" fill="#2a2a2a" text-anchor="middle" textLength="39.5" lengthAdjust="spacingAndGlyphs" stroke="#2a2a2a" stroke-width=".3">Dark Skin</text>
<path d="M385.47 1172.4 V1135 Q385.47 1132.2 388.27 1132.2 H435.27 Q438.07 1132.2 438.07 1135 V1172.4 Z" fill="url(#bb)" stroke="#a2a2a2" stroke-width=".8"/>
<rect x="389.67" y="1136.3" width="44.7" height="20.2" rx="2.5" fill="#c29682" stroke="#000" stroke-opacity=".25" stroke-width=".8"/>
<text x="411.77" y="1168.8" font-size="10.4" fill="#2a2a2a" text-anchor="middle" textLength="40" lengthAdjust="spacingAndGlyphs" stroke="#2a2a2a" stroke-width=".3">Light Skin</text>
<path d="M440.23 1172.4 V1135 Q440.23 1132.2 443.03 1132.2 H490.03 Q492.83 1132.2 492.83 1135 V1172.4 Z" fill="url(#bb)" stroke="#a2a2a2" stroke-width=".8"/>
<rect x="444.43" y="1136.3" width="44.7" height="20.2" rx="2.5" fill="#627a9d" stroke="#000" stroke-opacity=".25" stroke-width=".8"/>
<text x="466.53" y="1168.8" font-size="10.4" fill="#2a2a2a" text-anchor="middle" textLength="35.5" lengthAdjust="spacingAndGlyphs" stroke="#2a2a2a" stroke-width=".3">Blue Sky</text>
<path d="M494.99 1172.4 V1135 Q494.99 1132.2 497.79 1132.2 H544.79 Q547.59 1132.2 547.59 1135 V1172.4 Z" fill="url(#bb)" stroke="#a2a2a2" stroke-width=".8"/>
<rect x="499.19" y="1136.3" width="44.7" height="20.2" rx="2.5" fill="#576c43" stroke="#000" stroke-opacity=".25" stroke-width=".8"/>
<text x="521.29" y="1168.8" font-size="10.4" fill="#2a2a2a" text-anchor="middle" textLength="30" lengthAdjust="spacingAndGlyphs" stroke="#2a2a2a" stroke-width=".3">Foliage</text>
<path d="M549.75 1172.4 V1135 Q549.75 1132.2 552.55 1132.2 H599.55 Q602.35 1132.2 602.35 1135 V1172.4 Z" fill="url(#bb)" stroke="#a2a2a2" stroke-width=".8"/>
<rect x="553.95" y="1136.3" width="44.7" height="20.2" rx="2.5" fill="#8580b1" stroke="#000" stroke-opacity=".25" stroke-width=".8"/>
<text x="576.05" y="1168.8" font-size="10.4" fill="#2a2a2a" text-anchor="middle" textLength="48.5" lengthAdjust="spacingAndGlyphs" stroke="#2a2a2a" stroke-width=".3">Blue Flower</text>
<path d="M604.51 1172.4 V1135 Q604.51 1132.2 607.31 1132.2 H654.31 Q657.11 1132.2 657.11 1135 V1172.4 Z" fill="url(#bb)" stroke="#a2a2a2" stroke-width=".8"/>
<rect x="608.71" y="1136.3" width="44.7" height="10" rx="2.5" fill="#67bdaa" stroke="#000" stroke-opacity=".25" stroke-width=".8"/>
<text x="617.31" y="1159" font-size="10.4" fill="#2a2a2a" textLength="27" lengthAdjust="spacingAndGlyphs" stroke="#2a2a2a" stroke-width=".3">Bluish</text>
<text x="617.31" y="1168.8" font-size="10.4" fill="#2a2a2a" textLength="25.5" lengthAdjust="spacingAndGlyphs" stroke="#2a2a2a" stroke-width=".3">Green</text>
<path d="M659.27 1172.4 V1135 Q659.27 1132.2 662.07 1132.2 H709.07 Q711.87 1132.2 711.87 1135 V1172.4 Z" fill="url(#bb)" stroke="#a2a2a2" stroke-width=".8"/>
<rect x="663.47" y="1136.3" width="44.7" height="20.2" rx="2.5" fill="#d67e2c" stroke="#000" stroke-opacity=".25" stroke-width=".8"/>
<text x="685.57" y="1168.8" font-size="10.4" fill="#2a2a2a" text-anchor="middle" textLength="30.5" lengthAdjust="spacingAndGlyphs" stroke="#2a2a2a" stroke-width=".3">Orange</text>
<path d="M714.03 1172.4 V1135 Q714.03 1132.2 716.83 1132.2 H763.83 Q766.63 1132.2 766.63 1135 V1172.4 Z" fill="url(#bb)" stroke="#a2a2a2" stroke-width=".8"/>
<rect x="718.23" y="1136.3" width="44.7" height="10" rx="2.5" fill="#505ba6" stroke="#000" stroke-opacity=".25" stroke-width=".8"/>
<text x="723.08" y="1159" font-size="10.4" fill="#2a2a2a" textLength="34.5" lengthAdjust="spacingAndGlyphs" stroke="#2a2a2a" stroke-width=".3">Purplish</text>
<text x="723.08" y="1168.8" font-size="10.4" fill="#2a2a2a" textLength="18.5" lengthAdjust="spacingAndGlyphs" stroke="#2a2a2a" stroke-width=".3">Blue</text>
<path d="M768.79 1172.4 V1135 Q768.79 1132.2 771.59 1132.2 H818.59 Q821.39 1132.2 821.39 1135 V1172.4 Z" fill="url(#bb)" stroke="#a2a2a2" stroke-width=".8"/>
<rect x="772.99" y="1136.3" width="44.7" height="10" rx="2.5" fill="#c15a63" stroke="#000" stroke-opacity=".25" stroke-width=".8"/>
<text x="774.34" y="1159" font-size="10.4" fill="#2a2a2a" textLength="41.5" lengthAdjust="spacingAndGlyphs" stroke="#2a2a2a" stroke-width=".3">Moderate</text>
<text x="774.34" y="1168.8" font-size="10.4" fill="#2a2a2a" textLength="16" lengthAdjust="spacingAndGlyphs" stroke="#2a2a2a" stroke-width=".3">Red</text>
<path d="M823.55 1172.4 V1135 Q823.55 1132.2 826.35 1132.2 H873.35 Q876.15 1132.2 876.15 1135 V1172.4 Z" fill="url(#bb)" stroke="#a2a2a2" stroke-width=".8"/>
<rect x="827.75" y="1136.3" width="44.7" height="20.2" rx="2.5" fill="#5e3c6c" stroke="#000" stroke-opacity=".25" stroke-width=".8"/>
<text x="849.85" y="1168.8" font-size="10.4" fill="#2a2a2a" text-anchor="middle" textLength="28" lengthAdjust="spacingAndGlyphs" stroke="#2a2a2a" stroke-width=".3">Purple</text>
<path d="M878.31 1172.4 V1135 Q878.31 1132.2 881.11 1132.2 H928.11 Q930.91 1132.2 930.91 1135 V1172.4 Z" fill="url(#bb)" stroke="#a2a2a2" stroke-width=".8"/>
<rect x="882.51" y="1136.3" width="44.7" height="10" rx="2.5" fill="#9dbc40" stroke="#000" stroke-opacity=".25" stroke-width=".8"/>
<text x="890.86" y="1159" font-size="10.4" fill="#2a2a2a" textLength="27.5" lengthAdjust="spacingAndGlyphs" stroke="#2a2a2a" stroke-width=".3">Yellow</text>
<text x="890.86" y="1168.8" font-size="10.4" fill="#2a2a2a" textLength="25.5" lengthAdjust="spacingAndGlyphs" stroke="#2a2a2a" stroke-width=".3">Green</text>
<path d="M933.07 1172.4 V1135 Q933.07 1132.2 935.87 1132.2 H982.87 Q985.67 1132.2 985.67 1135 V1172.4 Z" fill="url(#bb)" stroke="#a2a2a2" stroke-width=".8"/>
<rect x="937.27" y="1136.3" width="44.7" height="10" rx="2.5" fill="#e0a32e" stroke="#000" stroke-opacity=".25" stroke-width=".8"/>
<text x="944.12" y="1159" font-size="10.4" fill="#2a2a2a" textLength="30.5" lengthAdjust="spacingAndGlyphs" stroke="#2a2a2a" stroke-width=".3">Orange</text>
<text x="944.12" y="1168.8" font-size="10.4" fill="#2a2a2a" textLength="27.5" lengthAdjust="spacingAndGlyphs" stroke="#2a2a2a" stroke-width=".3">Yellow</text>
<path d="M987.83 1172.4 V1135 Q987.83 1132.2 990.63 1132.2 H1037.63 Q1040.43 1132.2 1040.43 1135 V1172.4 Z" fill="url(#bb)" stroke="#a2a2a2" stroke-width=".8"/>
<rect x="992.03" y="1136.3" width="44.7" height="20.2" rx="2.5" fill="#383d96" stroke="#000" stroke-opacity=".25" stroke-width=".8"/>
<text x="1014.13" y="1168.8" font-size="10.4" fill="#2a2a2a" text-anchor="middle" textLength="18.5" lengthAdjust="spacingAndGlyphs" stroke="#2a2a2a" stroke-width=".3">Blue</text>
<path d="M1042.59 1172.4 V1135 Q1042.59 1132.2 1045.39 1132.2 H1092.39 Q1095.19 1132.2 1095.19 1135 V1172.4 Z" fill="url(#bb)" stroke="#a2a2a2" stroke-width=".8"/>
<rect x="1046.79" y="1136.3" width="44.7" height="20.2" rx="2.5" fill="#469449" stroke="#000" stroke-opacity=".25" stroke-width=".8"/>
<text x="1068.89" y="1168.8" font-size="10.4" fill="#2a2a2a" text-anchor="middle" textLength="25.5" lengthAdjust="spacingAndGlyphs" stroke="#2a2a2a" stroke-width=".3">Green</text>
<path d="M1097.35 1172.4 V1135 Q1097.35 1132.2 1100.15 1132.2 H1147.15 Q1149.95 1132.2 1149.95 1135 V1172.4 Z" fill="url(#bb)" stroke="#a2a2a2" stroke-width=".8"/>
<rect x="1101.55" y="1136.3" width="44.7" height="20.2" rx="2.5" fill="#af363c" stroke="#000" stroke-opacity=".25" stroke-width=".8"/>
<text x="1123.65" y="1168.8" font-size="10.4" fill="#2a2a2a" text-anchor="middle" textLength="16" lengthAdjust="spacingAndGlyphs" stroke="#2a2a2a" stroke-width=".3">Red</text>
<path d="M1152.11 1172.4 V1135 Q1152.11 1132.2 1154.91 1132.2 H1201.91 Q1204.71 1132.2 1204.71 1135 V1172.4 Z" fill="url(#bb)" stroke="#a2a2a2" stroke-width=".8"/>
<rect x="1156.31" y="1136.3" width="44.7" height="20.2" rx="2.5" fill="#e7c71f" stroke="#000" stroke-opacity=".25" stroke-width=".8"/>
<text x="1178.41" y="1168.8" font-size="10.4" fill="#2a2a2a" text-anchor="middle" textLength="27.5" lengthAdjust="spacingAndGlyphs" stroke="#2a2a2a" stroke-width=".3">Yellow</text>
<path d="M1206.87 1172.4 V1135 Q1206.87 1132.2 1209.67 1132.2 H1256.67 Q1259.47 1132.2 1259.47 1135 V1172.4 Z" fill="url(#bb)" stroke="#a2a2a2" stroke-width=".8"/>
<rect x="1211.07" y="1136.3" width="44.7" height="20.2" rx="2.5" fill="#bb5695" stroke="#000" stroke-opacity=".25" stroke-width=".8"/>
<text x="1233.17" y="1168.8" font-size="10.4" fill="#2a2a2a" text-anchor="middle" textLength="37.5" lengthAdjust="spacingAndGlyphs" stroke="#2a2a2a" stroke-width=".3">Magenta</text>
<path d="M1261.63 1172.4 V1135 Q1261.63 1132.2 1264.43 1132.2 H1311.43 Q1314.23 1132.2 1314.23 1135 V1172.4 Z" fill="url(#bb)" stroke="#a2a2a2" stroke-width=".8"/>
<rect x="1265.83" y="1136.3" width="44.7" height="20.2" rx="2.5" fill="#0885a1" stroke="#000" stroke-opacity=".25" stroke-width=".8"/>
<text x="1287.93" y="1168.8" font-size="10.4" fill="#2a2a2a" text-anchor="middle" textLength="20.5" lengthAdjust="spacingAndGlyphs" stroke="#2a2a2a" stroke-width=".3">Cyan</text>
<path d="M1316.39 1172.4 V1135 Q1316.39 1132.2 1319.19 1132.2 H1366.19 Q1368.99 1132.2 1368.99 1135 V1172.4 Z" fill="url(#bb)" stroke="#a2a2a2" stroke-width=".8"/>
<rect x="1320.59" y="1136.3" width="44.7" height="20.2" rx="2.5" fill="#ff0000" stroke="#000" stroke-opacity=".25" stroke-width=".8"/>
<text x="1342.69" y="1168.8" font-size="10.4" fill="#2a2a2a" text-anchor="middle" textLength="41" lengthAdjust="spacingAndGlyphs" stroke="#2a2a2a" stroke-width=".3">100% Red</text>
<path d="M1371.15 1172.4 V1135 Q1371.15 1132.2 1373.95 1132.2 H1420.95 Q1423.75 1132.2 1423.75 1135 V1172.4 Z" fill="url(#bb)" stroke="#a2a2a2" stroke-width=".8"/>
<rect x="1375.35" y="1136.3" width="44.7" height="20.2" rx="2.5" fill="#00ff00" stroke="#000" stroke-opacity=".25" stroke-width=".8"/>
<text x="1397.45" y="1168.8" font-size="10.4" fill="#2a2a2a" text-anchor="middle" textLength="50" lengthAdjust="spacingAndGlyphs" stroke="#2a2a2a" stroke-width=".3">100% Green</text>
<path d="M1425.91 1172.4 V1135 Q1425.91 1132.2 1428.71 1132.2 H1475.71 Q1478.51 1132.2 1478.51 1135 V1172.4 Z" fill="url(#bb)" stroke="#a2a2a2" stroke-width=".8"/>
<rect x="1430.11" y="1136.3" width="44.7" height="20.2" rx="2.5" fill="#0000ff" stroke="#000" stroke-opacity=".25" stroke-width=".8"/>
<text x="1452.21" y="1168.8" font-size="10.4" fill="#2a2a2a" text-anchor="middle" textLength="43.5" lengthAdjust="spacingAndGlyphs" stroke="#2a2a2a" stroke-width=".3">100% Blue</text>
<path d="M1480.67 1172.4 V1135 Q1480.67 1132.2 1483.47 1132.2 H1530.47 Q1533.27 1132.2 1533.27 1135 V1172.4 Z" fill="url(#bb)" stroke="#a2a2a2" stroke-width=".8"/>
<rect x="1484.87" y="1136.3" width="44.7" height="20.2" rx="2.5" fill="#00ffff" stroke="#000" stroke-opacity=".25" stroke-width=".8"/>
<text x="1506.97" y="1168.8" font-size="10.4" fill="#2a2a2a" text-anchor="middle" textLength="45.5" lengthAdjust="spacingAndGlyphs" stroke="#2a2a2a" stroke-width=".3">100% Cyan</text>
<path d="M1535.43 1172.4 V1135 Q1535.43 1132.2 1538.23 1132.2 H1585.23 Q1588.03 1132.2 1588.03 1135 V1172.4 Z" fill="url(#bb)" stroke="#a2a2a2" stroke-width=".8"/>
<rect x="1539.63" y="1136.3" width="44.7" height="10" rx="2.5" fill="#ff00ff" stroke="#000" stroke-opacity=".25" stroke-width=".8"/>
<text x="1542.98" y="1159" font-size="10.4" fill="#2a2a2a" textLength="22.5" lengthAdjust="spacingAndGlyphs" stroke="#2a2a2a" stroke-width=".3">100%</text>
<text x="1542.98" y="1168.8" font-size="10.4" fill="#2a2a2a" textLength="37.5" lengthAdjust="spacingAndGlyphs" stroke="#2a2a2a" stroke-width=".3">Magenta</text>
<rect x="1589.79" y="1131.5" width="54.1" height="41.5" rx="3" fill="#1c1c1c"/>
<rect x="1594.39" y="1136.3" width="44.7" height="20.2" rx="2.5" fill="#ffff00" stroke="#000" stroke-opacity=".25" stroke-width=".8"/>
<text x="1616.49" y="1168.7" font-size="10.4" fill="#fff" text-anchor="middle" font-weight="bold" textLength="52" lengthAdjust="spacingAndGlyphs">100% Yellow</text>
</g>
<rect x="12.5" y="1174.2" width="1622" height="7.6" rx="3.8" fill="#3f3f3f"/>
<rect x="2" y="1174" width="9.5" height="8.5" rx="2" fill="#7e7e7e"/><path d="M8.5 1175.6 v5.4 l-4 -2.7 z" fill="#3a3a3a"/>
<rect x="1635.5" y="1174" width="8.5" height="8.5" rx="2" fill="#7e7e7e"/><path d="M1638 1175.6 v5.4 l4 -2.7 z" fill="#3a3a3a"/>
<rect x="1646" y="1131.5" width="40.3" height="15.9" rx="3" fill="url(#tb)" stroke="#9c9c9c" stroke-width=".8"/>
<circle cx="1666.3" cy="1138.3" r="6" fill="url(#cir)"/><path d="M1662.6 1140.5 h7.4 l-3.7 -4.2 z" fill="#555"/>
<rect x="1646" y="1148" width="40.3" height="35" rx="3" fill="url(#tb)" stroke="#9c9c9c" stroke-width=".8"/>
<rect x="1654" y="1153.4" width="23.3" height="23.6" rx="3" fill="#a8a8a8" stroke="#2e2e2e" stroke-width="2"/>
<rect x="1660" y="1159.8" width="12" height="11.6" fill="#000"/>
<rect x="1687.5" y="1131.5" width="152.8" height="25.7" rx="3" fill="url(#tb)"/>
<rect x="1840.3" y="1131.5" width="77.6" height="25.7" rx="3" fill="url(#tbd)"/>
<line x1="1726.4" y1="1132" x2="1726.4" y2="1157" stroke="#5a5a5a" stroke-width="1"/>
<line x1="1727.4" y1="1132" x2="1727.4" y2="1157" stroke="#a0a0a0" stroke-width="0.8"/>
<line x1="1764.5" y1="1132" x2="1764.5" y2="1157" stroke="#5a5a5a" stroke-width="1"/>
<line x1="1765.5" y1="1132" x2="1765.5" y2="1157" stroke="#a0a0a0" stroke-width="0.8"/>
<line x1="1802.6" y1="1132" x2="1802.6" y2="1157" stroke="#5a5a5a" stroke-width="1"/>
<line x1="1803.6" y1="1132" x2="1803.6" y2="1157" stroke="#a0a0a0" stroke-width="0.8"/>
<line x1="1840.3" y1="1132" x2="1840.3" y2="1157" stroke="#2a2a2a" stroke-width="1"/>
<line x1="1841.3" y1="1132" x2="1841.3" y2="1157" stroke="#4a4a4a" stroke-width="0.8"/>
<line x1="1879.3" y1="1132" x2="1879.3" y2="1157" stroke="#2a2a2a" stroke-width="1"/>
<line x1="1880.3" y1="1132" x2="1880.3" y2="1157" stroke="#4a4a4a" stroke-width="0.8"/>
<circle cx="1706.6" cy="1144.3" r="8.7" fill="url(#cir)"/>
<circle cx="1745.2" cy="1144.3" r="8.7" fill="url(#cir)"/>
<circle cx="1783.6" cy="1144.3" r="8.7" fill="url(#cir)"/>
<circle cx="1821.7" cy="1144.3" r="8.7" fill="url(#cir)"/>
<circle cx="1859.4" cy="1144.3" r="8.7" fill="#2c2c2c"/>
<circle cx="1898.7" cy="1144.3" r="8.7" fill="#2c2c2c"/>
<rect x="1703.1" y="1140.8" width="7" height="7" fill="#3a3a3a"/>
<path d="M1742.2 1139.3 v10 l7.6 -5 z" fill="#333"/>
<text x="1783.6" y="1148" font-size="10.5" fill="#333" text-anchor="middle" font-weight="bold" textLength="11" lengthAdjust="spacingAndGlyphs">[···]</text>
<text x="1821.7" y="1148.6" font-size="15" fill="#333" text-anchor="middle" font-weight="bold" textLength="11.5" lengthAdjust="spacingAndGlyphs">∞</text>
<path d="M1855.4 1143 a4.4 4.4 0 0 1 7.6 -2 M1863.4 1145.6 a4.4 4.4 0 0 1 -7.6 2" fill="none" stroke="#1a1a1a" stroke-width="1.8"/>
<rect x="1687.5" y="1158" width="114.8" height="25" rx="3" fill="url(#tb)" stroke="#9c9c9c" stroke-width=".8"/>
<rect x="1802.8" y="1158" width="115" height="25" rx="3" fill="url(#tb)" stroke="#9c9c9c" stroke-width=".8"/>
<circle cx="1713.2" cy="1171.2" r="8.5" fill="url(#cir)"/><circle cx="1893.8" cy="1171.2" r="8.5" fill="url(#cir)"/>
<path d="M1712.6 1167.6 l-3.4 3.6 l3.4 3.6 M1717.2 1167.6 l-3.4 3.6 l3.4 3.6" fill="none" stroke="#3a3a3a" stroke-width="1.3"/>
<path d="M1890.4 1167.6 l3.4 3.6 l-3.4 3.6 M1895 1167.6 l3.4 3.6 l-3.4 3.6" fill="none" stroke="#3a3a3a" stroke-width="1.3"/>
<text x="1735.8" y="1177.6" font-size="20.5" fill="#343434" textLength="42.5" lengthAdjust="spacingAndGlyphs" stroke="#343434" stroke-width=".5">Back</text>
<text x="1826.5" y="1177.6" font-size="20.5" fill="#343434" textLength="43.4" lengthAdjust="spacingAndGlyphs" stroke="#343434" stroke-width=".5">Next</text>
</g>
<g id="sec_frame">
<rect x="0" y="0" width="1920" height="1" fill="#2d9be6"/>
<rect x="0" y="0" width="1.1" height="1185" fill="#2d9be6"/>
<rect x="1918.8" y="0" width="1.2" height="1185" fill="#2d9be6"/>
<rect x="0" y="1183.4" width="1920" height="1.6" fill="#2d9be6"/>
</g>
</svg>
</body></html>
